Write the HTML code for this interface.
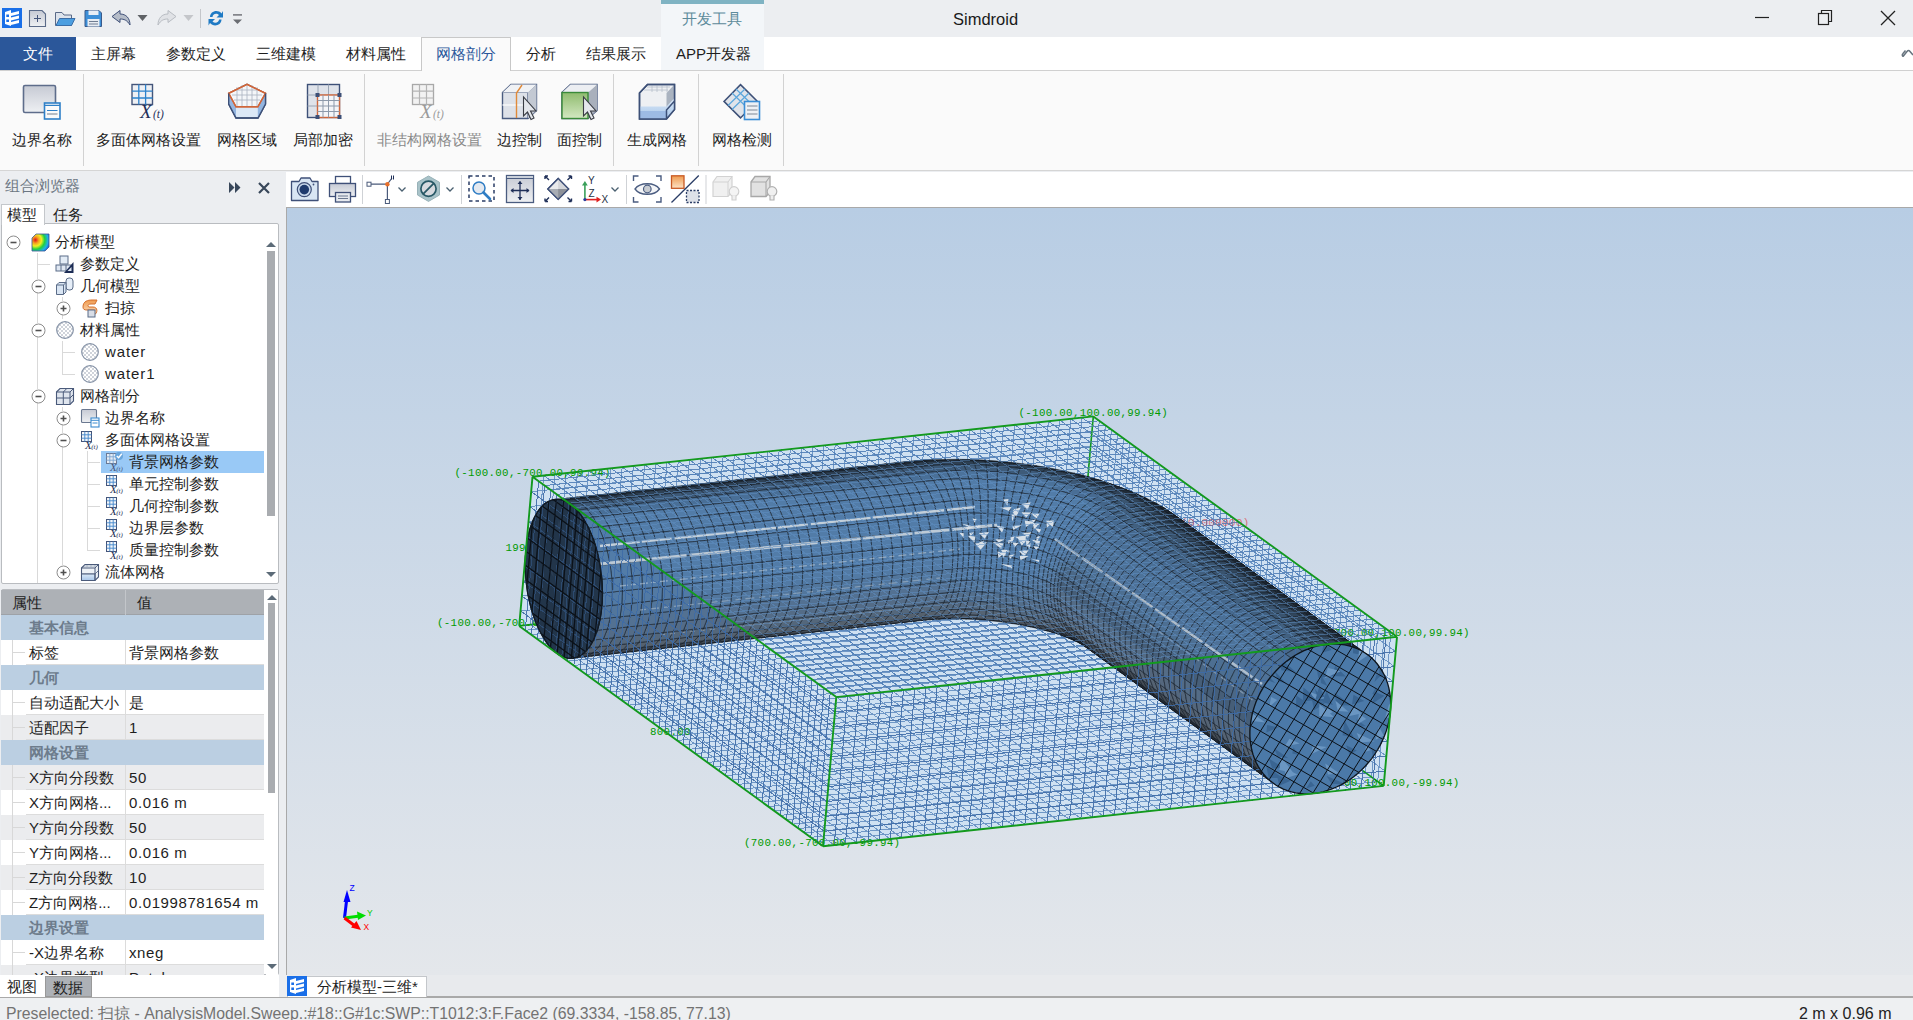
<!DOCTYPE html>
<html><head><meta charset="utf-8"><title>Simdroid</title>
<style>
*{box-sizing:border-box}
html,body{margin:0;padding:0;width:1913px;height:1020px;overflow:hidden;background:#eceef1;font-family:"Liberation Sans",sans-serif;color:#222}
.a{position:absolute}
.t{position:absolute;white-space:nowrap;font-size:15px;line-height:18px;color:#1e1e1e}
.ic{position:absolute;overflow:visible}
</style></head><body>
<!-- title bar -->
<div class="a" style="left:0;top:0;width:1913px;height:37px;background:#eceef1"></div>
<div class="a" style="left:661px;top:0;width:103px;height:37px;background:#f3f6f9"></div>
<div class="a" style="left:661px;top:0;width:103px;height:4px;background:#7fb3c3"></div>
<div class="t" style="left:682px;top:10px;color:#5d8b9b">开发工具</div>
<div class="t" style="left:953px;top:9px;font-size:16.5px;line-height:20px;color:#1a1a1a">Simdroid</div>
<!-- window controls -->
<svg class="ic" style="left:1740px;top:0" width="173" height="37">
 <line x1="15" y1="17.5" x2="29" y2="17.5" stroke="#222" stroke-width="1.2"/>
 <rect x="78.5" y="13.5" width="10" height="11" fill="none" stroke="#222" stroke-width="1.2"/>
 <path d="M81.5 13.5 V10.5 H91.5 V21.5 H88.5" fill="none" stroke="#222" stroke-width="1.2"/>
 <path d="M141 11 L155 25 M155 11 L141 25" stroke="#222" stroke-width="1.3"/>
</svg>
<!-- tabs row -->
<div class="a" style="left:0;top:37px;width:1913px;height:34px;background:#fff;border-bottom:1px solid #d0d0d0"></div>
<div class="a" style="left:661px;top:37px;width:103px;height:33px;background:#f3f6f9"></div>
<div class="a" style="left:0;top:37px;width:76px;height:33px;background:#2b579a"></div>
<div class="t" style="left:23px;top:45px;color:#fff">文件</div>
<div class="t" style="left:91px;top:45px">主屏幕</div>
<div class="t" style="left:166px;top:45px">参数定义</div>
<div class="t" style="left:256px;top:45px">三维建模</div>
<div class="t" style="left:346px;top:45px">材料属性</div>
<div class="a" style="left:421px;top:37px;width:90px;height:34px;background:#fafafa;border:1px solid #c8c8c8;border-bottom:none"></div>
<div class="t" style="left:436px;top:45px;color:#2b579a">网格剖分</div>
<div class="t" style="left:526px;top:45px">分析</div>
<div class="t" style="left:586px;top:45px">结果展示</div>
<div class="t" style="left:676px;top:45px">APP开发器</div>
<svg class="ic" style="left:1900px;top:44px" width="13" height="16"><path d="M3 12.5 L7 7.5 C8 6.3 9 6.3 10 7.5 L13 11 M3 12.5 C2 11.5 2 10.5 3 9.5 L5.5 6.5" fill="none" stroke="#66737e" stroke-width="1.5"/></svg>
<!-- ribbon panel -->
<div class="a" style="left:0;top:71px;width:1913px;height:100px;background:#fafafa;border-bottom:1px solid #d5d5d5"></div>
<div class="a" style="left:83px;top:74px;width:1px;height:92px;background:#d2d2d2"></div>
<div class="a" style="left:364px;top:74px;width:1px;height:92px;background:#d2d2d2"></div>
<div class="a" style="left:613px;top:74px;width:1px;height:92px;background:#d2d2d2"></div>
<div class="a" style="left:698px;top:74px;width:1px;height:92px;background:#d2d2d2"></div>
<div class="a" style="left:783px;top:74px;width:1px;height:92px;background:#d2d2d2"></div>
<div class="t" style="left:12px;top:131px">边界名称</div>
<div class="t" style="left:96px;top:131px">多面体网格设置</div>
<div class="t" style="left:217px;top:131px">网格区域</div>
<div class="t" style="left:293px;top:131px">局部加密</div>
<div class="t" style="left:377px;top:131px;color:#8a8a8a">非结构网格设置</div>
<div class="t" style="left:497px;top:131px">边控制</div>
<div class="t" style="left:557px;top:131px">面控制</div>
<div class="t" style="left:627px;top:131px">生成网格</div>
<div class="t" style="left:712px;top:131px">网格检测</div>
<!-- left panel -->
<div class="a" style="left:0;top:172px;width:286px;height:803px;background:#eceef1"></div>
<div class="t" style="left:5px;top:177px;color:#6b7682">组合浏览器</div>
<div class="a" style="left:1px;top:223px;width:278px;height:361px;background:#fff;border:1px solid #b9bcc0;border-radius:2px"></div>
<div class="a" style="left:1px;top:204px;width:44px;height:21px;background:#fff;border:1px solid #c4c7cb;border-bottom:none"></div>
<div class="t" style="left:7px;top:206px">模型</div>
<div class="t" style="left:53px;top:206px">任务</div>
<div class="a" style="left:101px;top:451px;width:163px;height:22px;background:#99c9f6"></div>
<!-- props -->
<div class="a" style="left:1px;top:589px;width:278px;height:386px;background:#fff;border:1px solid #b9bcc0;border-radius:2px"></div>
<!-- bottom tabs -->
<div class="a" style="left:0;top:975px;width:279px;height:22px;background:#fff"></div>
<div class="t" style="left:7px;top:978px">视图</div>
<div class="a" style="left:45px;top:976px;width:47px;height:21px;background:#adb1b6;border:1px solid #999"></div>
<div class="t" style="left:53px;top:979px">数据</div>
<!-- 3d view -->
<div class="a" style="left:286px;top:172px;width:1627px;height:36px;background:#fff"></div>
<div class="a" style="left:286px;top:207px;width:1627px;height:768px;background:linear-gradient(#b8cde4,#e4e7eb);border-top:1px solid #a9a9a9;border-left:1px solid #a9a9a9"></div>
<!-- doc tab bar -->
<div class="a" style="left:287px;top:975px;width:1626px;height:22px;background:#e8eaed;border-bottom:1px solid #a9a9a9"></div>
<div class="a" style="left:287px;top:976px;width:140px;height:21px;background:#fff;border:1px solid #c4c7cb;border-bottom:none"></div>
<div class="t" style="left:317px;top:978px">分析模型-三维*</div>
<!-- status -->
<div class="a" style="left:0;top:997px;width:1913px;height:23px;background:#eef0f2;border-top:1px solid #a9a9a9"></div>
<div class="t" style="left:6px;top:1005px;color:#737373;font-size:15.8px">Preselected: 扫掠 - AnalysisModel.Sweep.:#18::G#1c:SWP::T1012:3:F.Face2 (69.3334, -158.85, 77.13)</div>
<div class="t" style="left:1799px;top:1005px;color:#222;font-size:16px">2 m x 0.96 m</div>
<svg class="a" style="left:0;top:0" width="1913" height="1020" viewBox="0 0 1913 1020">
<defs><clipPath id="vp"><rect x="287" y="209" width="1626" height="766"/></clipPath></defs><g clip-path="url(#vp)">
<path d="M532.5 476.8 L1093.3 416.4 L1397 636.8 L1383.7 785.9 L823 846.2 L519.2 625.9Z" fill="#cfe1f2"/>
<path d="M519.2 625.9L1080 565.5M525.3 630.3L1086.1 569.9M531.4 634.7L1092.1 574.3M537.5 639.1L1098.2 578.7M543.5 643.5L1104.3 583.1M549.6 647.9L1110.4 587.5M555.7 652.3L1116.4 591.9M561.8 656.7L1122.5 596.4M567.8 661.1L1128.6 600.8M573.9 665.5L1134.7 605.2M580 669.9L1140.7 609.6M586.1 674.4L1146.8 614M592.1 678.8L1152.9 618.4M598.2 683.2L1159 622.8M604.3 687.6L1165 627.2M610.4 692L1171.1 631.6M616.4 696.4L1177.2 636M622.5 700.8L1183.3 640.4M628.6 705.2L1189.3 644.8M634.7 709.6L1195.4 649.2M640.7 714L1201.5 653.6M646.8 718.4L1207.6 658.1M652.9 722.8L1213.6 662.5M659 727.2L1219.7 666.9M665 731.7L1225.8 671.3M671.1 736.1L1231.9 675.7M677.2 740.5L1237.9 680.1M683.3 744.9L1244 684.5M689.3 749.3L1250.1 688.9M695.4 753.7L1256.2 693.3M701.5 758.1L1262.2 697.7M707.6 762.5L1268.3 702.1M713.6 766.9L1274.4 706.5M719.7 771.3L1280.5 710.9M725.8 775.7L1286.5 715.4M731.9 780.1L1292.6 719.8M737.9 784.5L1298.7 724.2M744 789L1304.8 728.6M750.1 793.4L1310.8 733M756.2 797.8L1316.9 737.4M762.2 802.2L1323 741.8M768.3 806.6L1329.1 746.2M774.4 811L1335.1 750.6M780.5 815.4L1341.2 755M786.5 819.8L1347.3 759.4M792.6 824.2L1353.4 763.8M798.7 828.6L1359.4 768.2M804.8 833L1365.5 772.7M810.8 837.4L1371.6 777.1M816.9 841.8L1377.7 781.5M823 846.2L1383.7 785.9M519.2 625.9L823 846.2M530.5 624.7L834.2 845M541.7 623.5L845.4 843.8M552.9 622.3L856.6 842.6M564.1 621L867.9 841.4M575.3 619.8L879.1 840.2M586.5 618.6L890.3 839M597.8 617.4L901.5 837.8M609 616.2L912.7 836.6M620.2 615L923.9 835.4M631.4 613.8L935.1 834.2M642.6 612.6L946.4 833M653.8 611.4L957.6 831.8M665 610.2L968.8 830.6M676.3 609L980 829.3M687.5 607.8L991.2 828.1M698.7 606.6L1002.4 826.9M709.9 605.3L1013.7 825.7M721.1 604.1L1024.9 824.5M732.3 602.9L1036.1 823.3M743.5 601.7L1047.3 822.1M754.8 600.5L1058.5 820.9M766 599.3L1069.7 819.7M777.2 598.1L1080.9 818.5M788.4 596.9L1092.2 817.3M799.6 595.7L1103.4 816.1M810.8 594.5L1114.6 814.9M822.1 593.3L1125.8 813.6M833.3 592.1L1137 812.4M844.5 590.9L1148.2 811.2M855.7 589.6L1159.4 810M866.9 588.4L1170.7 808.8M878.1 587.2L1181.9 807.6M889.3 586L1193.1 806.4M900.6 584.8L1204.3 805.2M911.8 583.6L1215.5 804M923 582.4L1226.7 802.8M934.2 581.2L1238 801.6M945.4 580L1249.2 800.4M956.6 578.8L1260.4 799.2M967.8 577.6L1271.6 797.9M979.1 576.4L1282.8 796.7M990.3 575.2L1294 795.5M1001.5 574L1305.2 794.3M1012.7 572.7L1316.5 793.1M1023.9 571.5L1327.7 791.9M1035.1 570.3L1338.9 790.7M1046.4 569.1L1350.1 789.5M1057.6 567.9L1361.3 788.3M1068.8 566.7L1372.5 787.1M1080 565.5L1383.7 785.9M519.2 625.9L532.5 476.8M530.5 624.7L543.7 475.5M541.7 623.5L554.9 474.3M552.9 622.3L566.1 473.1M564.1 621L577.4 471.9M575.3 619.8L588.6 470.7M586.5 618.6L599.8 469.5M597.8 617.4L611 468.3M609 616.2L622.2 467.1M620.2 615L633.4 465.9M631.4 613.8L644.7 464.7M642.6 612.6L655.9 463.5M653.8 611.4L667.1 462.3M665 610.2L678.3 461.1M676.3 609L689.5 459.8M687.5 607.8L700.7 458.6M698.7 606.6L711.9 457.4M709.9 605.3L723.2 456.2M721.1 604.1L734.4 455M732.3 602.9L745.6 453.8M743.5 601.7L756.8 452.6M754.8 600.5L768 451.4M766 599.3L779.2 450.2M777.2 598.1L790.4 449M788.4 596.9L801.7 447.8M799.6 595.7L812.9 446.6M810.8 594.5L824.1 445.4M822.1 593.3L835.3 444.1M833.3 592.1L846.5 442.9M844.5 590.9L857.7 441.7M855.7 589.6L869 440.5M866.9 588.4L880.2 439.3M878.1 587.2L891.4 438.1M889.3 586L902.6 436.9M900.6 584.8L913.8 435.7M911.8 583.6L925 434.5M923 582.4L936.2 433.3M934.2 581.2L947.5 432.1M945.4 580L958.7 430.9M956.6 578.8L969.9 429.7M967.8 577.6L981.1 428.5M979.1 576.4L992.3 427.2M990.3 575.2L1003.5 426M1001.5 574L1014.7 424.8M1012.7 572.7L1026 423.6M1023.9 571.5L1037.2 422.4M1035.1 570.3L1048.4 421.2M1046.4 569.1L1059.6 420M1057.6 567.9L1070.8 418.8M1068.8 566.7L1082 417.6M1080 565.5L1093.3 416.4M519.2 625.9L1080 565.5M520.6 611L1081.3 550.6M521.9 596L1082.6 535.7M523.2 581.1L1084 520.8M524.5 566.2L1085.3 505.8M525.9 551.3L1086.6 490.9M527.2 536.4L1088 476M528.5 521.5L1089.3 461.1M529.9 506.6L1090.6 446.2M531.2 491.7L1091.9 431.3M532.5 476.8L1093.3 416.4M1080 565.5L1093.3 416.4M1086.1 569.9L1099.3 420.8M1092.1 574.3L1105.4 425.2M1098.2 578.7L1111.5 429.6M1104.3 583.1L1117.6 434M1110.4 587.5L1123.6 438.4M1116.4 591.9L1129.7 442.8M1122.5 596.4L1135.8 447.2M1128.6 600.8L1141.9 451.6M1134.7 605.2L1147.9 456M1140.7 609.6L1154 460.5M1146.8 614L1160.1 464.9M1152.9 618.4L1166.2 469.3M1159 622.8L1172.2 473.7M1165 627.2L1178.3 478.1M1171.1 631.6L1184.4 482.5M1177.2 636L1190.5 486.9M1183.3 640.4L1196.5 491.3M1189.3 644.8L1202.6 495.7M1195.4 649.2L1208.7 500.1M1201.5 653.6L1214.8 504.5M1207.6 658.1L1220.8 508.9M1213.6 662.5L1226.9 513.3M1219.7 666.9L1233 517.7M1225.8 671.3L1239.1 522.2M1231.9 675.7L1245.1 526.6M1237.9 680.1L1251.2 531M1244 684.5L1257.3 535.4M1250.1 688.9L1263.4 539.8M1256.2 693.3L1269.4 544.2M1262.2 697.7L1275.5 548.6M1268.3 702.1L1281.6 553M1274.4 706.5L1287.7 557.4M1280.5 710.9L1293.7 561.8M1286.5 715.4L1299.8 566.2M1292.6 719.8L1305.9 570.6M1298.7 724.2L1312 575M1304.8 728.6L1318 579.5M1310.8 733L1324.1 583.9M1316.9 737.4L1330.2 588.3M1323 741.8L1336.3 592.7M1329.1 746.2L1342.3 597.1M1335.1 750.6L1348.4 601.5M1341.2 755L1354.5 605.9M1347.3 759.4L1360.6 610.3M1353.4 763.8L1366.6 614.7M1359.4 768.2L1372.7 619.1M1365.5 772.7L1378.8 623.5M1371.6 777.1L1384.9 627.9M1377.7 781.5L1390.9 632.3M1383.7 785.9L1397 636.8M1080 565.5L1383.7 785.9M1081.3 550.6L1385.1 771M1082.6 535.7L1386.4 756M1084 520.8L1387.7 741.1M1085.3 505.8L1389 726.2M1086.6 490.9L1390.4 711.3M1088 476L1391.7 696.4M1089.3 461.1L1393 681.5M1090.6 446.2L1394.4 666.6M1091.9 431.3L1395.7 651.7M1093.3 416.4L1397 636.8" stroke="#6f97c6" stroke-width="1" fill="none" shape-rendering="crispEdges"/>
<path d="M532.5 476.8L1093.3 416.4M538.6 481.2L1099.3 420.8M544.7 485.6L1105.4 425.2M550.7 490L1111.5 429.6M556.8 494.4L1117.6 434M562.9 498.8L1123.6 438.4M569 503.2L1129.7 442.8M575 507.6L1135.8 447.2M581.1 512L1141.9 451.6M587.2 516.4L1147.9 456M593.3 520.8L1154 460.5M599.3 525.2L1160.1 464.9M605.4 529.6L1166.2 469.3M611.5 534L1172.2 473.7M617.6 538.5L1178.3 478.1M623.6 542.9L1184.4 482.5M629.7 547.3L1190.5 486.9M635.8 551.7L1196.5 491.3M641.9 556.1L1202.6 495.7M647.9 560.5L1208.7 500.1M654 564.9L1214.8 504.5M660.1 569.3L1220.8 508.9M666.2 573.7L1226.9 513.3M672.2 578.1L1233 517.7M678.3 582.5L1239.1 522.2M684.4 586.9L1245.1 526.6M690.5 591.3L1251.2 531M696.5 595.8L1257.3 535.4M702.6 600.2L1263.4 539.8M708.7 604.6L1269.4 544.2M714.8 609L1275.5 548.6M720.8 613.4L1281.6 553M726.9 617.8L1287.7 557.4M733 622.2L1293.7 561.8M739.1 626.6L1299.8 566.2M745.1 631L1305.9 570.6M751.2 635.4L1312 575M757.3 639.8L1318 579.5M763.4 644.2L1324.1 583.9M769.4 648.6L1330.2 588.3M775.5 653.1L1336.3 592.7M781.6 657.5L1342.3 597.1M787.7 661.9L1348.4 601.5M793.7 666.3L1354.5 605.9M799.8 670.7L1360.6 610.3M805.9 675.1L1366.6 614.7M812 679.5L1372.7 619.1M818 683.9L1378.8 623.5M824.1 688.3L1384.9 627.9M830.2 692.7L1390.9 632.3M836.3 697.1L1397 636.8M532.5 476.8L836.3 697.1M543.7 475.5L847.5 695.9M554.9 474.3L858.7 694.7M566.1 473.1L869.9 693.5M577.4 471.9L881.1 692.3M588.6 470.7L892.3 691.1M599.8 469.5L903.5 689.9M611 468.3L914.8 688.7M622.2 467.1L926 687.5M633.4 465.9L937.2 686.3M644.7 464.7L948.4 685.1M655.9 463.5L959.6 683.8M667.1 462.3L970.8 682.6M678.3 461.1L982 681.4M689.5 459.8L993.3 680.2M700.7 458.6L1004.5 679M711.9 457.4L1015.7 677.8M723.2 456.2L1026.9 676.6M734.4 455L1038.1 675.4M745.6 453.8L1049.3 674.2M756.8 452.6L1060.6 673M768 451.4L1071.8 671.8M779.2 450.2L1083 670.6M790.4 449L1094.2 669.4M801.7 447.8L1105.4 668.1M812.9 446.6L1116.6 666.9M824.1 445.4L1127.8 665.7M835.3 444.1L1139.1 664.5M846.5 442.9L1150.3 663.3M857.7 441.7L1161.5 662.1M869 440.5L1172.7 660.9M880.2 439.3L1183.9 659.7M891.4 438.1L1195.1 658.5M902.6 436.9L1206.3 657.3M913.8 435.7L1217.6 656.1M925 434.5L1228.8 654.9M936.2 433.3L1240 653.7M947.5 432.1L1251.2 652.4M958.7 430.9L1262.4 651.2M969.9 429.7L1273.6 650M981.1 428.5L1284.9 648.8M992.3 427.2L1296.1 647.6M1003.5 426L1307.3 646.4M1014.7 424.8L1318.5 645.2M1026 423.6L1329.7 644M1037.2 422.4L1340.9 642.8M1048.4 421.2L1352.1 641.6M1059.6 420L1363.4 640.4M1070.8 418.8L1374.6 639.2M1082 417.6L1385.8 638M1093.3 416.4L1397 636.8" stroke="#3e6ca6" stroke-width="1" fill="none" opacity="0.8" shape-rendering="crispEdges"/>
<path d="M1093.3 416.4L1080 565.5M519.2 625.9L1080 565.5M1080 565.5L1383.7 785.9" stroke="#139a1e" stroke-width="1.6" fill="none"/>
<g font-family="Liberation Mono" font-size="10.8" letter-spacing="0.32" fill="#009a00"><text x="454.5" y="476">(-100.00,-700.00,99.94)</text><text x="505.5" y="550.5">199.88</text><text x="437" y="625.5">(-100.00,-700.00,-99.94)</text><text x="650" y="735">800.00</text><text x="1018.5" y="415.5">(-100.00,100.00,99.94)</text><text x="1327" y="635.5">(700.00,100.00,99.94)</text><text x="1310" y="785.5">(700.00,100.00,-99.94)</text><text x="744" y="845.5">(700.00,-700.00,-99.94)</text></g>
<text x="1181" y="526" font-family="Liberation Mono" font-size="11.4" fill="#e03030" opacity="0.6">(0.000000)</text>
<g stroke="#101820" stroke-width="0.7" stroke-opacity="0.8"><path d="M984.5 620.2L984.9 619.1L993.4 619.9L993.9 621.1Z" fill="#272c32"/><path d="M975 619.5L976.4 618.5L984.9 619.1L984.5 620.2Z" fill="#272c31"/><path d="M993.9 621.1L993.4 619.9L1001.9 620.9L1003.3 622.2Z" fill="#272c31"/><path d="M997.4 462.4L997.1 461.1L1010.4 462.3L1009.7 463.5Z" fill="#1c252e"/><path d="M965.7 619.1L967.9 618.1L976.4 618.5L975 619.5Z" fill="#272b30"/><path d="M985 461.5L983.8 460.1L997.1 461.1L997.4 462.4Z" fill="#1c252e"/><path d="M1003.3 622.2L1001.9 620.9L1010.3 622.2L1012.6 623.6Z" fill="#262b30"/><path d="M1009.7 463.5L1010.4 462.3L1023.7 463.9L1022 465Z" fill="#1c252e"/><path d="M972.7 461L970.5 459.5L983.8 460.1L985 461.5Z" fill="#1c252f"/><path d="M956.4 618.9L959.5 618L967.9 618.1L965.7 619.1Z" fill="#252a2f"/><path d="M919.5 460.5L913.8 461.6L927 460.8L931.8 459.8Z" fill="#12171c"/><path d="M1022 465L1023.7 463.9L1036.8 465.8L1034.2 466.8Z" fill="#1c252f"/><path d="M1012.6 623.6L1010.3 622.2L1018.6 623.6L1021.7 625.1Z" fill="#25292e"/><path d="M1074.6 473.3L1079.4 475.3L1092.1 478.5L1086.5 476.4Z" fill="#12171c"/><path d="M960.5 460.7L957.4 459.3L970.5 459.5L972.7 461Z" fill="#1c252f"/><path d="M947.2 619L951.2 618L959.5 618L956.4 618.9Z" fill="#24282d"/><path d="M1021.7 625.1L1018.6 623.6L1026.7 625.2L1030.6 626.9Z" fill="#23272c"/><path d="M1034.2 466.8L1036.8 465.8L1049.7 468L1046.2 468.8Z" fill="#1c262f"/><path d="M938.3 619.3L943.1 618.3L951.2 618L947.2 619Z" fill="#21252a"/><path d="M948.5 460.8L944.5 459.4L957.4 459.3L960.5 460.7Z" fill="#1d2630"/><path d="M1030.6 626.9L1026.7 625.2L1034.6 627L1039.3 628.9Z" fill="#212529"/><path d="M1046.2 468.8L1049.7 468L1062.3 470.5L1057.9 471.2Z" fill="#1d2630"/><path d="M907.6 461.6L901.1 462.8L913.8 461.6L919.5 460.5Z" fill="#12171c"/><path d="M1086.5 476.4L1092.1 478.5L1104.3 482.1L1097.9 479.7Z" fill="#12171c"/><path d="M929.5 619.8L935.2 618.8L943.1 618.3L938.3 619.3Z" fill="#1f2226"/><path d="M936.8 461.2L931.8 459.8L944.5 459.4L948.5 460.8Z" fill="#1d2731"/><path d="M1039.3 628.9L1034.6 627L1042.2 628.9L1047.8 631.1Z" fill="#1e2126"/><path d="M1057.9 471.2L1062.3 470.5L1074.6 473.3L1069.3 473.8Z" fill="#1d2731"/><path d="M984.9 619.1L985.5 615.6L993.3 616.3L993.4 619.9Z" fill="#545e69"/><path d="M976.4 618.5L977.8 615.1L985.5 615.6L984.9 619.1Z" fill="#535d69"/><path d="M921.1 620.6L927.6 619.5L935.2 618.8L929.5 619.8Z" fill="#1b1f22"/><path d="M993.4 619.9L993.3 616.3L1000.9 617.3L1001.9 620.9Z" fill="#535d69"/><path d="M897.5 462.7L891.1 463.9L901.1 462.8L907.6 461.6Z" fill="#12171c"/><path d="M997.4 466.1L997.4 462.4L1009.7 463.5L1008.8 467.1Z" fill="#2d3f53"/><path d="M967.9 618.1L970.1 614.7L977.8 615.1L976.4 618.5Z" fill="#525c68"/><path d="M986 465.3L985 461.5L997.4 462.4L997.4 466.1Z" fill="#2d3f53"/><path d="M1001.9 620.9L1000.9 617.3L1008.5 618.4L1010.3 622.2Z" fill="#525c67"/><path d="M1047.8 631.1L1042.2 628.9L1049.5 631.1L1055.9 633.4Z" fill="#1b1e21"/><path d="M1008.8 467.1L1009.7 463.5L1022 465L1020.1 468.5Z" fill="#2d3f53"/><path d="M925.3 461.9L919.5 460.5L931.8 459.8L936.8 461.2Z" fill="#1e2832"/><path d="M959.5 618L962.5 614.6L970.1 614.7L967.9 618.1Z" fill="#515a66"/><path d="M974.7 464.8L972.7 461L985 461.5L986 465.3Z" fill="#2d4053"/><path d="M1010.3 622.2L1008.5 618.4L1016 619.7L1018.6 623.6Z" fill="#505a65"/><path d="M1020.1 468.5L1022 465L1034.2 466.8L1031.3 470.1Z" fill="#2d4053"/><path d="M1097.9 479.7L1104.3 482.1L1116 485.9L1108.9 483.3Z" fill="#12171c"/><path d="M1069.3 473.8L1074.6 473.3L1086.5 476.4L1080.3 476.6Z" fill="#1e2833"/><path d="M951.2 618L955 614.6L962.5 614.6L959.5 618Z" fill="#4e5863"/><path d="M963.5 464.5L960.5 460.7L972.7 461L974.7 464.8Z" fill="#2d4053"/><path d="M1018.6 623.6L1016 619.7L1023.3 621.1L1026.7 625.2Z" fill="#4e5762"/><path d="M1031.3 470.1L1034.2 466.8L1046.2 468.8L1042.3 472Z" fill="#2d4053"/><path d="M911.1 621.7L917.5 620.5L927.6 619.5L921.1 620.6Z" fill="#1a1d20"/><path d="M1055.9 633.4L1049.5 631.1L1056.5 633.3L1063.6 635.9Z" fill="#17191d"/><path d="M887.5 463.8L881 464.9L891.1 463.9L897.5 462.7Z" fill="#12171c"/><path d="M943.1 618.3L947.7 614.9L955 614.6L951.2 618Z" fill="#4b545f"/><path d="M952.5 464.6L948.5 460.8L960.5 460.7L963.5 464.5Z" fill="#2e4053"/><path d="M1026.7 625.2L1023.3 621.1L1030.5 622.7L1034.6 627Z" fill="#4b535e"/><path d="M914.2 462.9L907.6 461.6L919.5 460.5L925.3 461.9Z" fill="#1f2934"/><path d="M1042.3 472L1046.2 468.8L1057.9 471.2L1053.1 474.2Z" fill="#2e4053"/><path d="M1080.3 476.6L1086.5 476.4L1097.9 479.7L1090.9 479.7Z" fill="#1f2934"/><path d="M935.2 618.8L940.6 615.3L947.7 614.9L943.1 618.3Z" fill="#48505a"/><path d="M1034.6 627L1030.5 622.7L1037.3 624.5L1042.2 628.9Z" fill="#474f59"/><path d="M941.7 465L936.8 461.2L948.5 460.8L952.5 464.6Z" fill="#2e4054"/><path d="M901 622.8L907.5 621.6L917.5 620.5L911.1 621.7Z" fill="#1a1d20"/><path d="M1108.9 483.3L1116 485.9L1127 489.9L1119.2 487Z" fill="#12171c"/><path d="M1063.6 635.9L1056.5 633.3L1063.1 635.7L1070.9 638.6Z" fill="#131517"/><path d="M1053.1 474.2L1057.9 471.2L1069.3 473.8L1063.6 476.6Z" fill="#2e4054"/><path d="M877.5 464.9L871 466L881 464.9L887.5 463.8Z" fill="#12171c"/><path d="M927.6 619.5L933.6 615.9L940.6 615.3L935.2 618.8Z" fill="#434b55"/><path d="M904.2 464L897.5 462.7L907.6 461.6L914.2 462.9Z" fill="#1f2a35"/><path d="M985.5 615.6L986.3 609.8L993.3 610.5L993.3 616.3Z" fill="#556474"/><path d="M977.8 615.1L979.3 609.4L986.3 609.8L985.5 615.6Z" fill="#556474"/><path d="M993.3 616.3L993.3 610.5L1000.3 611.4L1000.9 617.3Z" fill="#556474"/><path d="M1042.2 628.9L1037.3 624.5L1044 626.4L1049.5 631.1Z" fill="#424a53"/><path d="M997.3 472L997.4 466.1L1008.8 467.1L1007.6 473Z" fill="#3e5b7a"/><path d="M970.1 614.7L972.3 609L979.3 609.4L977.8 615.1Z" fill="#556374"/><path d="M1000.9 617.3L1000.3 611.4L1007.2 612.4L1008.5 618.4Z" fill="#556374"/><path d="M986.9 471.3L986 465.3L997.4 466.1L997.3 472Z" fill="#3e5b79"/><path d="M1007.6 473L1008.8 467.1L1020.1 468.5L1018 474.3Z" fill="#3e5b79"/><path d="M931.1 465.6L925.3 461.9L936.8 461.2L941.7 465Z" fill="#2e4154"/><path d="M1090.9 479.7L1097.9 479.7L1108.9 483.3L1101.1 483Z" fill="#202b36"/><path d="M962.5 614.6L965.4 608.9L972.3 609L970.1 614.7Z" fill="#556373"/><path d="M976.5 470.8L974.7 464.8L986 465.3L986.9 471.3Z" fill="#3e5b79"/><path d="M1008.5 618.4L1007.2 612.4L1014 613.5L1016 619.7Z" fill="#556373"/><path d="M1018 474.3L1020.1 468.5L1031.3 470.1L1028.2 475.7Z" fill="#3e5b79"/><path d="M1063.6 476.6L1069.3 473.8L1080.3 476.6L1073.8 479.2Z" fill="#2e4154"/><path d="M891 623.8L897.5 622.7L907.5 621.6L901 622.8Z" fill="#1a1d20"/><path d="M1070.9 638.6L1063.1 635.7L1069.3 638.3L1077.8 641.4Z" fill="#121517"/><path d="M867.5 466L861 467.1L871 466L877.5 464.9Z" fill="#12171c"/><path d="M955 614.6L958.6 609L965.4 608.9L962.5 614.6Z" fill="#556373"/><path d="M966.3 470.6L963.5 464.5L974.7 464.8L976.5 470.8Z" fill="#3e5b79"/><path d="M917.5 620.5L923.6 617L933.6 615.9L927.6 619.5Z" fill="#414952"/><path d="M1016 619.7L1014 613.5L1020.7 614.8L1023.3 621.1Z" fill="#556372"/><path d="M1028.2 475.7L1031.3 470.1L1042.3 472L1038.3 477.5Z" fill="#3d5a79"/><path d="M1049.5 631.1L1044 626.4L1050.3 628.5L1056.5 633.3Z" fill="#3d444d"/><path d="M894.2 465.1L887.5 463.8L897.5 462.7L904.2 464Z" fill="#1f2a35"/><path d="M1119.2 487L1127 489.9L1137.4 494.1L1128.9 491Z" fill="#141a20"/><path d="M947.7 614.9L951.9 609.2L958.6 609L955 614.6Z" fill="#556272"/><path d="M956.2 470.7L952.5 464.6L963.5 464.5L966.3 470.6Z" fill="#3d5a79"/><path d="M920.9 466.6L914.2 462.9L925.3 461.9L931.1 465.6Z" fill="#2e4155"/><path d="M1023.3 621.1L1020.7 614.8L1027.2 616.3L1030.5 622.7Z" fill="#556271"/><path d="M1038.3 477.5L1042.3 472L1053.1 474.2L1048.1 479.4Z" fill="#3d5a79"/><path d="M1073.8 479.2L1080.3 476.6L1090.9 479.7L1083.5 482Z" fill="#2e4155"/><path d="M881 624.9L887.5 623.8L897.5 622.7L891 623.8Z" fill="#1a1d20"/><path d="M940.6 615.3L945.4 609.6L951.9 609.2L947.7 614.9Z" fill="#556270"/><path d="M1077.8 641.4L1069.3 638.3L1075.1 640.9L1084.2 644.3Z" fill="#121517"/><path d="M1101.1 483L1108.9 483.3L1119.2 487L1110.7 486.5Z" fill="#212c38"/><path d="M1056.5 633.3L1050.3 628.5L1056.3 630.7L1063.1 635.7Z" fill="#373e46"/><path d="M857.5 467L851 468.2L861 467.1L867.5 466Z" fill="#12171c"/><path d="M1030.5 622.7L1027.2 616.3L1033.4 617.9L1037.3 624.5Z" fill="#556270"/><path d="M946.4 471L941.7 465L952.5 464.6L956.2 470.7Z" fill="#3d5a78"/><path d="M907.5 621.6L913.6 618.1L923.6 617L917.5 620.5Z" fill="#414952"/><path d="M1048.1 479.4L1053.1 474.2L1063.6 476.6L1057.7 481.6Z" fill="#3d5a78"/><path d="M884.2 466.1L877.5 464.9L887.5 463.8L894.2 465.1Z" fill="#1f2a35"/><path d="M933.6 615.9L939.1 610.2L945.4 609.6L940.6 615.3Z" fill="#55616f"/><path d="M910.9 467.6L904.2 464L914.2 462.9L920.9 466.6Z" fill="#2e4155"/><path d="M986.3 609.8L987.2 602L993.7 602.6L993.3 610.5Z" fill="#546a82"/><path d="M979.3 609.4L980.8 601.5L987.2 602L986.3 609.8Z" fill="#546a81"/><path d="M1037.3 624.5L1033.4 617.9L1039.5 619.7L1044 626.4Z" fill="#55616f"/><path d="M993.3 610.5L993.7 602.6L1000.1 603.4L1000.3 611.4Z" fill="#546a81"/><path d="M996.9 480.1L997.3 472L1007.6 473L1006.3 481Z" fill="#4d749e"/><path d="M972.3 609L974.4 601.2L980.8 601.5L979.3 609.4Z" fill="#546a81"/><path d="M987.5 479.4L986.9 471.3L997.3 472L996.9 480.1Z" fill="#4d749e"/><path d="M1000.3 611.4L1000.1 603.4L1006.4 604.3L1007.2 612.4Z" fill="#546a81"/><path d="M1006.3 481L1007.6 473L1018 474.3L1015.7 482.1Z" fill="#4d749e"/><path d="M936.7 471.6L931.1 465.6L941.7 465L946.4 471Z" fill="#3d5a78"/><path d="M1083.5 482L1090.9 479.7L1101.1 483L1092.8 485Z" fill="#2f4256"/><path d="M871 626L877.5 624.9L887.5 623.8L881 624.9Z" fill="#1a1d20"/><path d="M1063.1 635.7L1056.3 630.7L1061.9 633L1069.3 638.3Z" fill="#31373e"/><path d="M965.4 608.9L968 601.1L974.4 601.2L972.3 609Z" fill="#546981"/><path d="M978.1 479L976.5 470.8L986.9 471.3L987.5 479.4Z" fill="#4d749d"/><path d="M1007.2 612.4L1006.4 604.3L1012.7 605.4L1014 613.5Z" fill="#546980"/><path d="M1057.7 481.6L1063.6 476.6L1073.8 479.2L1067 484Z" fill="#3d5a78"/><path d="M1015.7 482.1L1018 474.3L1028.2 475.7L1025 483.4Z" fill="#4c749d"/><path d="M847.5 468.1L841 469.2L851 468.2L857.5 467Z" fill="#12171c"/><path d="M1128.9 491L1137.4 494.1L1147 498.6L1138 495.2Z" fill="#161c23"/><path d="M897.5 622.7L903.6 619.2L913.6 618.1L907.5 621.6Z" fill="#414952"/><path d="M958.6 609L961.8 601.2L968 601.1L965.4 608.9Z" fill="#546980"/><path d="M968.8 478.8L966.3 470.6L976.5 470.8L978.1 479Z" fill="#4c749d"/><path d="M923.6 617L929.1 611.2L939.1 610.2L933.6 615.9Z" fill="#55616e"/><path d="M1044 626.4L1039.5 619.7L1045.2 621.6L1050.3 628.5Z" fill="#55606d"/><path d="M1014 613.5L1012.7 605.4L1018.8 606.6L1020.7 614.8Z" fill="#54697f"/><path d="M874.2 467.2L867.5 466L877.5 464.9L884.2 466.1Z" fill="#1f2a35"/><path d="M1025 483.4L1028.2 475.7L1038.3 477.5L1034.1 485Z" fill="#4c739d"/><path d="M1110.7 486.5L1119.2 487L1128.9 491L1119.7 490.2Z" fill="#222e3a"/><path d="M900.9 468.7L894.2 465.1L904.2 464L910.9 467.6Z" fill="#2e4155"/><path d="M951.9 609.2L955.6 601.4L961.8 601.2L958.6 609Z" fill="#54687f"/><path d="M959.7 478.9L956.2 470.7L966.3 470.6L968.8 478.8Z" fill="#4c739c"/><path d="M927.4 472.5L920.9 466.6L931.1 465.6L936.7 471.6Z" fill="#3d5977"/><path d="M1020.7 614.8L1018.8 606.6L1024.8 607.9L1027.2 616.3Z" fill="#54687e"/><path d="M1034.1 485L1038.3 477.5L1048.1 479.4L1043.1 486.8Z" fill="#4c739c"/><path d="M861 627.1L867.5 625.9L877.5 624.9L871 626Z" fill="#1a1d20"/><path d="M1069.3 638.3L1061.9 633L1067.2 635.4L1075.1 640.9Z" fill="#2a2f35"/><path d="M1067 484L1073.8 479.2L1083.5 482L1075.9 486.6Z" fill="#3d5977"/><path d="M945.4 609.6L949.7 601.7L955.6 601.4L951.9 609.2Z" fill="#54687d"/><path d="M1092.8 485L1101.1 483L1110.7 486.5L1101.7 488.3Z" fill="#2f4256"/><path d="M837.5 469.2L831 470.3L841 469.2L847.5 468.1Z" fill="#12171c"/><path d="M1050.3 628.5L1045.2 621.6L1050.7 623.5L1056.3 630.7Z" fill="#56606c"/><path d="M887.5 623.8L893.6 620.3L903.6 619.2L897.5 622.7Z" fill="#414952"/><path d="M1027.2 616.3L1024.8 607.9L1030.5 609.4L1033.4 617.9Z" fill="#54687d"/><path d="M950.7 479.2L946.4 471L956.2 470.7L959.7 478.9Z" fill="#4b729b"/><path d="M913.6 618.1L919.1 612.3L929.1 611.2L923.6 617Z" fill="#55616e"/><path d="M864.2 468.3L857.5 467L867.5 466L874.2 467.2Z" fill="#1f2a35"/><path d="M1043.1 486.8L1048.1 479.4L1057.7 481.6L1051.8 488.8Z" fill="#4b729a"/><path d="M890.9 469.8L884.2 466.1L894.2 465.1L900.9 468.7Z" fill="#2e4155"/><path d="M939.1 610.2L943.9 602.3L949.7 601.7L945.4 609.6Z" fill="#54677c"/><path d="M987.2 602L988.3 592.3L994.3 592.8L993.7 602.6Z" fill="#53708e"/><path d="M980.8 601.5L982.2 591.8L988.3 592.3L987.2 602Z" fill="#53708e"/><path d="M917.4 473.6L910.9 467.6L920.9 466.6L927.4 472.5Z" fill="#3d5977"/><path d="M993.7 602.6L994.3 592.8L1000.3 593.5L1000.1 603.4Z" fill="#53708e"/><path d="M1033.4 617.9L1030.5 609.4L1036.1 611L1039.5 619.7Z" fill="#54677b"/><path d="M996.4 490L996.9 480.1L1006.3 481L1004.9 490.8Z" fill="#527ca8"/><path d="M974.4 601.2L976.2 591.6L982.2 591.8L980.8 601.5Z" fill="#536f8e"/><path d="M987.9 489.4L987.5 479.4L996.9 480.1L996.4 490Z" fill="#527ca8"/><path d="M1000.1 603.4L1000.3 593.5L1006.2 594.4L1006.4 604.3Z" fill="#536f8e"/><path d="M1004.9 490.8L1006.3 481L1015.7 482.1L1013.4 491.8Z" fill="#527ca8"/><path d="M1138 495.2L1147 498.6L1155.9 503.2L1146.3 499.5Z" fill="#181f27"/><path d="M942 479.7L936.7 471.6L946.4 471L950.7 479.2Z" fill="#4b7199"/><path d="M1075.9 486.6L1083.5 482L1092.8 485L1084.4 489.4Z" fill="#3c5976"/><path d="M1056.3 630.7L1050.7 623.5L1055.8 625.6L1061.9 633Z" fill="#535d69"/><path d="M851 628.2L857.5 627L867.5 625.9L861 627.1Z" fill="#1a1d20"/><path d="M979.4 489L978.1 479L987.5 479.4L987.9 489.4Z" fill="#527ca8"/><path d="M968 601.1L970.3 591.4L976.2 591.6L974.4 601.2Z" fill="#536f8d"/><path d="M1075.1 640.9L1067.2 635.4L1072 637.9L1080.5 643.7Z" fill="#23272c"/><path d="M1119.7 490.2L1128.9 491L1138 495.2L1128.1 494Z" fill="#23303d"/><path d="M1013.4 491.8L1015.7 482.1L1025 483.4L1021.8 493Z" fill="#527ca8"/><path d="M1006.4 604.3L1006.2 594.4L1012.1 595.4L1012.7 605.4Z" fill="#536f8d"/><path d="M1051.8 488.8L1057.7 481.6L1067 484L1060.2 490.9Z" fill="#4a7199"/><path d="M1155.9 503.2L1164.4 509L1172.9 514L1164 507.9Z" fill="#12171b"/><path d="M827.4 470.3L821 471.4L831 470.3L837.5 469.2Z" fill="#12171c"/><path d="M877.5 624.9L883.6 621.3L893.6 620.3L887.5 623.8Z" fill="#414952"/><path d="M961.8 601.2L964.4 591.5L970.3 591.4L968 601.1Z" fill="#536f8c"/><path d="M971 488.8L968.8 478.8L978.1 479L979.4 489Z" fill="#527ca8"/><path d="M1012.7 605.4L1012.1 595.4L1017.8 596.5L1018.8 606.6Z" fill="#536f8c"/><path d="M1021.8 493L1025 483.4L1034.1 485L1030.1 494.4Z" fill="#527ca8"/><path d="M1039.5 619.7L1036.1 611L1041.4 612.7L1045.2 621.6Z" fill="#556679"/><path d="M903.6 619.2L909.1 613.4L919.1 612.3L913.6 618.1Z" fill="#55616e"/><path d="M854.2 469.4L847.5 468.1L857.5 467L864.2 468.3Z" fill="#1f2a35"/><path d="M929.1 611.2L933.9 603.3L943.9 602.3L939.1 610.2Z" fill="#54677b"/><path d="M1101.7 488.3L1110.7 486.5L1119.7 490.2L1110 491.7Z" fill="#2f4357"/><path d="M955.6 601.4L958.7 591.7L964.4 591.5L961.8 601.2Z" fill="#536e8b"/><path d="M880.9 470.9L874.2 467.2L884.2 466.1L890.9 469.8Z" fill="#2e4155"/><path d="M962.7 488.9L959.7 478.9L968.8 478.8L971 488.8Z" fill="#527ca8"/><path d="M1018.8 606.6L1017.8 596.5L1023.4 597.8L1024.8 607.9Z" fill="#536e8b"/><path d="M933.5 480.5L927.4 472.5L936.7 471.6L942 479.7Z" fill="#4a7098"/><path d="M907.4 474.6L900.9 468.7L910.9 467.6L917.4 473.6Z" fill="#3d5977"/><path d="M1030.1 494.4L1034.1 485L1043.1 486.8L1038.2 496Z" fill="#527ca8"/><path d="M1061.9 633L1055.8 625.6L1060.5 627.8L1067.2 635.4Z" fill="#4b545e"/><path d="M1060.2 490.9L1067 484L1075.9 486.6L1068.3 493.3Z" fill="#4a7097"/><path d="M841 629.2L847.5 628.1L857.5 627L851 628.2Z" fill="#1a1d20"/><path d="M949.7 601.7L953.1 592L958.7 591.7L955.6 601.4Z" fill="#546d89"/><path d="M1084.4 489.4L1092.8 485L1101.7 488.3L1092.5 492.3Z" fill="#3c5875"/><path d="M1045.2 621.6L1041.4 612.7L1046.4 614.6L1050.7 623.5Z" fill="#556577"/><path d="M1024.8 607.9L1023.4 597.8L1028.7 599.2L1030.5 609.4Z" fill="#546d89"/><path d="M954.6 489.1L950.7 479.2L959.7 478.9L962.7 488.9Z" fill="#527ca8"/><path d="M1080.5 643.7L1072 637.9L1076.4 640.5L1085.3 646.6Z" fill="#1b1e22"/><path d="M817.4 471.3L810.9 472.5L821 471.4L827.4 470.3Z" fill="#12171c"/><path d="M867.5 625.9L873.6 622.4L883.6 621.3L877.5 624.9Z" fill="#414952"/><path d="M1038.2 496L1043.1 486.8L1051.8 488.8L1046 497.8Z" fill="#527ca8"/><path d="M988.3 592.3L989.4 580.9L995.1 581.5L994.3 592.8Z" fill="#52759a"/><path d="M982.2 591.8L983.6 580.5L989.4 580.9L988.3 592.3Z" fill="#52759a"/><path d="M994.3 592.8L995.1 581.5L1000.9 582.2L1000.3 593.5Z" fill="#52759a"/><path d="M893.6 620.3L899.1 614.5L909.1 613.4L903.6 619.2Z" fill="#55616e"/><path d="M844.1 470.5L837.5 469.2L847.5 468.1L854.2 469.4Z" fill="#1f2a35"/><path d="M919.1 612.3L923.9 604.4L933.9 603.3L929.1 611.2Z" fill="#54677b"/><path d="M995.7 501.4L996.4 490L1004.9 490.8L1003.4 502.1Z" fill="#527ca8"/><path d="M976.2 591.6L977.9 580.3L983.6 580.5L982.2 591.8Z" fill="#527599"/><path d="M988 500.8L987.9 489.4L996.4 490L995.7 501.4Z" fill="#527ca8"/><path d="M943.9 602.3L947.7 592.5L953.1 592L949.7 601.7Z" fill="#546d88"/><path d="M1003.4 502.1L1004.9 490.8L1013.4 491.8L1011.1 503Z" fill="#527ca8"/><path d="M1000.3 593.5L1000.9 582.2L1006.6 583L1006.2 594.4Z" fill="#527599"/><path d="M1030.5 609.4L1028.7 599.2L1033.9 600.7L1036.1 611Z" fill="#546c87"/><path d="M923.5 481.6L917.4 473.6L927.4 472.5L933.5 480.5Z" fill="#496f97"/><path d="M980.3 500.5L979.4 489L987.9 489.4L988 500.8Z" fill="#527ca8"/><path d="M870.9 472L864.2 468.3L874.2 467.2L880.9 470.9Z" fill="#2e4155"/><path d="M970.3 591.4L972.2 580.2L977.9 580.3L976.2 591.6Z" fill="#527599"/><path d="M1011.1 503L1013.4 491.8L1021.8 493L1018.7 504.1Z" fill="#527ca8"/><path d="M1128.1 494L1138 495.2L1146.3 499.5L1135.8 498Z" fill="#243240"/><path d="M1006.2 594.4L1006.6 583L1012.2 584L1012.1 595.4Z" fill="#537498"/><path d="M946.7 489.6L942 479.7L950.7 479.2L954.6 489.1Z" fill="#527ca8"/><path d="M897.4 475.7L890.9 469.8L900.9 468.7L907.4 474.6Z" fill="#3d5977"/><path d="M1068.3 493.3L1075.9 486.6L1084.4 489.4L1076 495.8Z" fill="#496e96"/><path d="M1067.2 635.4L1060.5 627.8L1064.9 630.1L1072 637.9Z" fill="#424a53"/><path d="M1146.3 499.5L1155.9 503.2L1164 507.9L1153.9 503.9Z" fill="#1a232b"/><path d="M1050.7 623.5L1046.4 614.6L1051.1 616.5L1055.8 625.6Z" fill="#556475"/><path d="M1046 497.8L1051.8 488.8L1060.2 490.9L1053.6 499.8Z" fill="#527ca8"/><path d="M972.7 500.3L971 488.8L979.4 489L980.3 500.5Z" fill="#527ca8"/><path d="M1110 491.7L1119.7 490.2L1128.1 494L1117.7 495.2Z" fill="#304358"/><path d="M964.4 591.5L966.6 580.2L972.2 580.2L970.3 591.4Z" fill="#537498"/><path d="M1018.7 504.1L1021.8 493L1030.1 494.4L1026.2 505.4Z" fill="#527ca8"/><path d="M1012.1 595.4L1012.2 584L1017.6 585.1L1017.8 596.5Z" fill="#537497"/><path d="M831 630.3L837.4 629.2L847.5 628.1L841 629.2Z" fill="#1a1d20"/><path d="M807.4 472.4L800.9 473.6L810.9 472.5L817.4 471.3Z" fill="#12171c"/><path d="M1036.1 611L1033.9 600.7L1038.9 602.3L1041.4 612.7Z" fill="#546b85"/><path d="M965.2 500.4L962.7 488.9L971 488.8L972.7 500.3Z" fill="#527ca8"/><path d="M958.7 591.7L961.1 580.4L966.6 580.2L964.4 591.5Z" fill="#537396"/><path d="M857.5 627L863.5 623.5L873.6 622.4L867.5 625.9Z" fill="#414952"/><path d="M1164 507.9L1172.9 514L1180.6 519.2L1171.2 512.8Z" fill="#12171c"/><path d="M933.9 603.3L937.7 593.6L947.7 592.5L943.9 602.3Z" fill="#546c87"/><path d="M1092.5 492.3L1101.7 488.3L1110 491.7L1100.1 495.4Z" fill="#3c5774"/><path d="M1026.2 505.4L1030.1 494.4L1038.2 496L1033.5 506.9Z" fill="#527ca8"/><path d="M1017.8 596.5L1017.6 585.1L1023 586.3L1023.4 597.8Z" fill="#537396"/><path d="M1085.3 646.6L1076.4 640.5L1080.3 643.1L1089.7 649.5Z" fill="#131518"/><path d="M883.6 621.3L889.1 615.5L899.1 614.5L893.6 620.3Z" fill="#55616e"/><path d="M939 490.3L933.5 480.5L942 479.7L946.7 489.6Z" fill="#527ca8"/><path d="M834.1 471.5L827.4 470.3L837.5 469.2L844.1 470.5Z" fill="#1f2a35"/><path d="M909.1 613.4L913.8 605.5L923.9 604.4L919.1 612.3Z" fill="#54677b"/><path d="M1053.6 499.8L1060.2 490.9L1068.3 493.3L1061 501.9Z" fill="#527ca8"/><path d="M953.1 592L955.7 580.7L961.1 580.4L958.7 591.7Z" fill="#537395"/><path d="M913.5 482.6L907.4 474.6L917.4 473.6L923.5 481.6Z" fill="#496f97"/><path d="M1055.8 625.6L1051.1 616.5L1055.5 618.5L1060.5 627.8Z" fill="#556373"/><path d="M860.9 473L854.2 469.4L864.2 468.3L870.9 472Z" fill="#2e4155"/><path d="M957.9 500.6L954.6 489.1L962.7 488.9L965.2 500.4Z" fill="#527ca8"/><path d="M989.4 580.9L990.5 568.4L996.2 569L995.1 581.5Z" fill="#527aa4"/><path d="M983.6 580.5L984.8 568L990.5 568.4L989.4 580.9Z" fill="#527aa4"/><path d="M995.1 581.5L996.2 569L1001.9 569.6L1000.9 582.2Z" fill="#527aa4"/><path d="M1023.4 597.8L1023 586.3L1028.1 587.6L1028.7 599.2Z" fill="#537394"/><path d="M887.4 476.8L880.9 470.9L890.9 469.8L897.4 475.7Z" fill="#3d5977"/><path d="M994.8 514L995.7 501.4L1003.4 502.1L1001.9 514.7Z" fill="#527ca8"/><path d="M987.8 513.5L988 500.8L995.7 501.4L994.8 514Z" fill="#527ca8"/><path d="M1033.5 506.9L1038.2 496L1046 497.8L1040.6 508.5Z" fill="#527ca8"/><path d="M977.9 580.3L979.2 567.8L984.8 568L983.6 580.5Z" fill="#527aa3"/><path d="M1001.9 514.7L1003.4 502.1L1011.1 503L1008.8 515.5Z" fill="#527ca8"/><path d="M1076 495.8L1084.4 489.4L1092.5 492.3L1083.4 498.5Z" fill="#486c93"/><path d="M1041.4 612.7L1038.9 602.3L1043.6 604L1046.4 614.6Z" fill="#546a83"/><path d="M1072 637.9L1064.9 630.1L1068.9 632.4L1076.4 640.5Z" fill="#383f47"/><path d="M1000.9 582.2L1001.9 569.6L1007.5 570.5L1006.6 583Z" fill="#527aa3"/><path d="M980.8 513.2L980.3 500.5L988 500.8L987.8 513.5Z" fill="#527ca8"/><path d="M1008.8 515.5L1011.1 503L1018.7 504.1L1015.7 516.5Z" fill="#527ca8"/><path d="M972.2 580.2L973.6 567.7L979.2 567.8L977.9 580.3Z" fill="#5279a3"/><path d="M820.9 631.4L827.4 630.3L837.4 629.2L831 630.3Z" fill="#1a1d20"/><path d="M1006.6 583L1007.5 570.5L1013 571.4L1012.2 584Z" fill="#5279a3"/><path d="M947.7 592.5L950.6 581.2L955.7 580.7L953.1 592Z" fill="#537293"/><path d="M973.9 513.1L972.7 500.3L980.3 500.5L980.8 513.2Z" fill="#527ca8"/><path d="M797.4 473.5L790.9 474.6L800.9 473.6L807.4 472.4Z" fill="#12171c"/><path d="M1015.7 516.5L1018.7 504.1L1026.2 505.4L1022.5 517.7Z" fill="#527ca8"/><path d="M1028.7 599.2L1028.1 587.6L1033.1 589L1033.9 600.7Z" fill="#537292"/><path d="M950.7 501.1L946.7 489.6L954.6 489.1L957.9 500.6Z" fill="#527ca8"/><path d="M966.6 580.2L968 567.7L973.6 567.7L972.2 580.2Z" fill="#5279a2"/><path d="M847.5 628.1L853.5 624.6L863.5 623.5L857.5 627Z" fill="#414952"/><path d="M923.9 604.4L927.7 594.7L937.7 593.6L933.9 603.3Z" fill="#546c87"/><path d="M1012.2 584L1013 571.4L1018.4 572.5L1017.6 585.1Z" fill="#5279a1"/><path d="M929 491.4L923.5 481.6L933.5 480.5L939 490.3Z" fill="#527ca8"/><path d="M1040.6 508.5L1046 497.8L1053.6 499.8L1047.5 510.3Z" fill="#527ca8"/><path d="M1061 501.9L1068.3 493.3L1076 495.8L1068 504.2Z" fill="#527ca8"/><path d="M1117.7 495.2L1128.1 494L1135.8 498L1124.8 498.9Z" fill="#304459"/><path d="M873.6 622.4L879.1 616.6L889.1 615.5L883.6 621.3Z" fill="#55616e"/><path d="M967.1 513.1L965.2 500.4L972.7 500.3L973.9 513.1Z" fill="#527ca8"/><path d="M824.1 472.6L817.4 471.3L827.4 470.3L834.1 471.5Z" fill="#1f2a35"/><path d="M899.1 614.5L903.8 606.6L913.8 605.5L909.1 613.4Z" fill="#54677b"/><path d="M1135.8 498L1146.3 499.5L1153.9 503.9L1142.9 502.2Z" fill="#263442"/><path d="M1060.5 627.8L1055.5 618.5L1059.5 620.6L1064.9 630.1Z" fill="#556270"/><path d="M1046.4 614.6L1043.6 604L1048 605.8L1051.1 616.5Z" fill="#546980"/><path d="M961.1 580.4L962.6 567.9L968 567.7L966.6 580.2Z" fill="#5278a0"/><path d="M1022.5 517.7L1026.2 505.4L1033.5 506.9L1029.2 519Z" fill="#527ca8"/><path d="M990.5 568.4L991.7 555.1L997.4 555.6L996.2 569Z" fill="#527ca8"/><path d="M1100.1 495.4L1110 491.7L1117.7 495.2L1107.1 498.6Z" fill="#3b5773"/><path d="M984.8 568L985.9 554.7L991.7 555.1L990.5 568.4Z" fill="#527ca8"/><path d="M1017.6 585.1L1018.4 572.5L1023.6 573.7L1023 586.3Z" fill="#5278a0"/><path d="M993.9 527.4L994.8 514L1001.9 514.7L1000.3 528Z" fill="#527ca8"/><path d="M996.2 569L997.4 555.6L1003.2 556.3L1001.9 569.6Z" fill="#527ca8"/><path d="M903.5 483.7L897.4 475.7L907.4 474.6L913.5 482.6Z" fill="#496f97"/><path d="M987.4 527L987.8 513.5L994.8 514L993.9 527.4Z" fill="#527ca8"/><path d="M850.8 474.1L844.1 470.5L854.2 469.4L860.9 473Z" fill="#2e4155"/><path d="M1000.3 528L1001.9 514.7L1008.8 515.5L1006.7 528.8Z" fill="#527ca8"/><path d="M979.2 567.8L980.2 554.4L985.9 554.7L984.8 568Z" fill="#527ca8"/><path d="M1001.9 569.6L1003.2 556.3L1008.9 557.1L1007.5 570.5Z" fill="#527ca8"/><path d="M1033.9 600.7L1033.1 589L1037.8 590.6L1038.9 602.3Z" fill="#537190"/><path d="M877.4 477.9L870.9 472L880.9 470.9L887.4 476.8Z" fill="#3d5977"/><path d="M981 526.7L980.8 513.2L987.8 513.5L987.4 527Z" fill="#527ca8"/><path d="M1089.7 649.5L1080.3 643.1L1085.7 647L1095.1 653.4Z" fill="#121517"/><path d="M1006.7 528.8L1008.8 515.5L1015.7 516.5L1013.1 529.7Z" fill="#527ca8"/><path d="M1153.9 503.9L1164 507.9L1171.2 512.8L1160.6 508.5Z" fill="#1d2630"/><path d="M943.8 501.7L939 490.3L946.7 489.6L950.7 501.1Z" fill="#527ca8"/><path d="M937.7 593.6L940.5 582.3L950.6 581.2L947.7 592.5Z" fill="#537192"/><path d="M960.4 513.3L957.9 500.6L965.2 500.4L967.1 513.1Z" fill="#527ca8"/><path d="M973.6 567.7L974.5 554.3L980.2 554.4L979.2 567.8Z" fill="#527ca8"/><path d="M1076.4 640.5L1068.9 632.4L1072.5 634.8L1080.3 643.1Z" fill="#2e343a"/><path d="M955.7 580.7L957.4 568.2L962.6 567.9L961.1 580.4Z" fill="#52779f"/><path d="M1083.4 498.5L1092.5 492.3L1100.1 495.4L1090.2 501.3Z" fill="#476a90"/><path d="M1007.5 570.5L1008.9 557.1L1014.5 558.1L1013 571.4Z" fill="#527ca8"/><path d="M1029.2 519L1033.5 506.9L1040.6 508.5L1035.7 520.5Z" fill="#527ca8"/><path d="M974.6 526.6L973.9 513.1L980.8 513.2L981 526.7Z" fill="#527ca8"/><path d="M1047.5 510.3L1053.6 499.8L1061 501.9L1054.1 512.2Z" fill="#527ca8"/><path d="M1023 586.3L1023.6 573.7L1028.7 575L1028.1 587.6Z" fill="#52779e"/><path d="M810.9 632.5L817.4 631.3L827.4 630.3L820.9 631.4Z" fill="#1a1d20"/><path d="M1013.1 529.7L1015.7 516.5L1022.5 517.7L1019.3 530.8Z" fill="#527ca8"/><path d="M991.7 555.1L992.8 541.2L998.8 541.8L997.4 555.6Z" fill="#527ca8"/><path d="M992.8 541.2L993.9 527.4L1000.3 528L998.8 541.8Z" fill="#527ca8"/><path d="M985.9 554.7L986.8 540.8L992.8 541.2L991.7 555.1Z" fill="#527ca8"/><path d="M986.8 540.8L987.4 527L993.9 527.4L992.8 541.2Z" fill="#527ca8"/><path d="M997.4 555.6L998.8 541.8L1004.8 542.5L1003.2 556.3Z" fill="#527ca8"/><path d="M998.8 541.8L1000.3 528L1006.7 528.8L1004.8 542.5Z" fill="#527ca8"/><path d="M968 567.7L968.9 554.3L974.5 554.3L973.6 567.7Z" fill="#527ca8"/><path d="M980.2 554.4L980.8 540.6L986.8 540.8L985.9 554.7Z" fill="#527ca8"/><path d="M1013 571.4L1014.5 558.1L1019.9 559.2L1018.4 572.5Z" fill="#527ca8"/><path d="M787.4 474.6L780.9 475.7L790.9 474.6L797.4 473.5Z" fill="#12171c"/><path d="M980.8 540.6L981 526.7L987.4 527L986.8 540.8Z" fill="#527ca8"/><path d="M1171.2 512.8L1180.6 519.2L1186 523.1L1176.6 516.7Z" fill="#14191e"/><path d="M1003.2 556.3L1004.8 542.5L1010.8 543.4L1008.9 557.1Z" fill="#527ca8"/><path d="M1004.8 542.5L1006.7 528.8L1013.1 529.7L1010.8 543.4Z" fill="#527ca8"/><path d="M968.4 526.6L967.1 513.1L973.9 513.1L974.6 526.6Z" fill="#527ca8"/><path d="M837.4 629.2L843.5 625.7L853.5 624.6L847.5 628.1Z" fill="#414952"/><path d="M1051.1 616.5L1048 605.8L1052 607.7L1055.5 618.5Z" fill="#54687e"/><path d="M913.8 605.5L917.7 595.7L927.7 594.7L923.9 604.4Z" fill="#546c87"/><path d="M919 492.5L913.5 482.6L923.5 481.6L929 491.4Z" fill="#527ca8"/><path d="M953.9 513.7L950.7 501.1L957.9 500.6L960.4 513.3Z" fill="#527ca8"/><path d="M1068 504.2L1076 495.8L1083.4 498.5L1074.6 506.6Z" fill="#527ca8"/><path d="M1019.3 530.8L1022.5 517.7L1029.2 519L1025.4 532Z" fill="#527ca8"/><path d="M1038.9 602.3L1037.8 590.6L1042.3 592.2L1043.6 604Z" fill="#53708e"/><path d="M950.6 581.2L952.3 568.7L957.4 568.2L955.7 580.7Z" fill="#52779d"/><path d="M974.5 554.3L974.8 540.4L980.8 540.6L980.2 554.4Z" fill="#527ca8"/><path d="M974.8 540.4L974.6 526.6L981 526.7L980.8 540.6Z" fill="#527ca8"/><path d="M1008.9 557.1L1010.8 543.4L1016.6 544.4L1014.5 558.1Z" fill="#527ca8"/><path d="M962.6 567.9L963.4 554.5L968.9 554.3L968 567.7Z" fill="#527ca8"/><path d="M1010.8 543.4L1013.1 529.7L1019.3 530.8L1016.6 544.4Z" fill="#527ca8"/><path d="M863.5 623.5L869 617.7L879.1 616.6L873.6 622.4Z" fill="#55616e"/><path d="M1064.9 630.1L1059.5 620.6L1063.1 622.7L1068.9 632.4Z" fill="#545f6c"/><path d="M1035.7 520.5L1040.6 508.5L1047.5 510.3L1041.9 522.1Z" fill="#527ca8"/><path d="M814.1 473.7L807.4 472.4L817.4 471.3L824.1 472.6Z" fill="#1f2a35"/><path d="M1028.1 587.6L1028.7 575L1033.6 576.4L1033.1 589Z" fill="#52769c"/><path d="M889.1 615.5L893.8 607.7L903.8 606.6L899.1 614.5Z" fill="#54677b"/><path d="M1018.4 572.5L1019.9 559.2L1025.3 560.4L1023.6 573.7Z" fill="#527ca8"/><path d="M968.9 554.3L969 540.5L974.8 540.4L974.5 554.3Z" fill="#527ca8"/><path d="M962.3 526.8L960.4 513.3L967.1 513.1L968.4 526.6Z" fill="#527ca8"/><path d="M969 540.5L968.4 526.6L974.6 526.6L974.8 540.4Z" fill="#527ca8"/><path d="M893.5 484.8L887.4 476.8L897.4 475.7L903.5 483.7Z" fill="#496f97"/><path d="M1014.5 558.1L1016.6 544.4L1022.3 545.5L1019.9 559.2Z" fill="#527ca8"/><path d="M840.8 475.2L834.1 471.5L844.1 470.5L850.8 474.1Z" fill="#2e4155"/><path d="M933.8 502.8L929 491.4L939 490.3L943.8 501.7Z" fill="#527ca8"/><path d="M1025.4 532L1029.2 519L1035.7 520.5L1031.4 533.4Z" fill="#527ca8"/><path d="M1016.6 544.4L1019.3 530.8L1025.4 532L1022.3 545.5Z" fill="#527ca8"/><path d="M1054.1 512.2L1061 501.9L1068 504.2L1060.5 514.3Z" fill="#527ca8"/><path d="M867.3 478.9L860.9 473L870.9 472L877.4 477.9Z" fill="#3d5977"/><path d="M957.4 568.2L958 554.8L963.4 554.5L962.6 567.9Z" fill="#527ba7"/><path d="M927.7 594.7L930.5 583.4L940.5 582.3L937.7 593.6Z" fill="#537192"/><path d="M947.7 514.3L943.8 501.7L950.7 501.1L953.9 513.7Z" fill="#527ca8"/><path d="M1023.6 573.7L1025.3 560.4L1030.4 561.7L1028.7 575Z" fill="#527ba7"/><path d="M963.4 554.5L963.2 540.7L969 540.5L968.9 554.3Z" fill="#527ca8"/><path d="M1033.1 589L1033.6 576.4L1038.2 577.9L1037.8 590.6Z" fill="#52759a"/><path d="M963.2 540.7L962.3 526.8L968.4 526.6L969 540.5Z" fill="#527ca8"/><path d="M1043.6 604L1042.3 592.2L1046.5 593.9L1048 605.8Z" fill="#536e8b"/><path d="M1019.9 559.2L1022.3 545.5L1027.9 546.8L1025.3 560.4Z" fill="#527ca8"/><path d="M1107.1 498.6L1117.7 495.2L1124.8 498.9L1113.6 502Z" fill="#3b5672"/><path d="M800.9 633.5L807.4 632.4L817.4 631.3L810.9 632.5Z" fill="#1a1d20"/><path d="M1041.9 522.1L1047.5 510.3L1054.1 512.2L1048 523.8Z" fill="#527ca8"/><path d="M956.3 527.2L953.9 513.7L960.4 513.3L962.3 526.8Z" fill="#527ca8"/><path d="M1124.8 498.9L1135.8 498L1142.9 502.2L1131.3 502.7Z" fill="#31455a"/><path d="M1022.3 545.5L1025.4 532L1031.4 533.4L1027.9 546.8Z" fill="#527ca8"/><path d="M940.5 582.3L942.3 569.8L952.3 568.7L950.6 581.2Z" fill="#52769c"/><path d="M1055.5 618.5L1052 607.7L1055.8 609.6L1059.5 620.6Z" fill="#54677b"/><path d="M1090.2 501.3L1100.1 495.4L1107.1 498.6L1096.7 504.2Z" fill="#45688d"/><path d="M1031.4 533.4L1035.7 520.5L1041.9 522.1L1037.2 534.8Z" fill="#527ca8"/><path d="M777.4 475.7L770.9 476.8L780.9 475.7L787.4 474.6Z" fill="#12171c"/><path d="M952.3 568.7L952.9 555.3L958 554.8L957.4 568.2Z" fill="#527aa5"/><path d="M827.4 630.3L833.5 626.7L843.5 625.7L837.4 629.2Z" fill="#414952"/><path d="M903.8 606.6L907.7 596.8L917.7 595.7L913.8 605.5Z" fill="#546c87"/><path d="M958 554.8L957.7 541L963.2 540.7L963.4 554.5Z" fill="#527ca8"/><path d="M1080.3 643.1L1072.5 634.8L1077.9 638.8L1085.7 647Z" fill="#292e34"/><path d="M909 493.6L903.5 483.7L913.5 482.6L919 492.5Z" fill="#527ca8"/><path d="M1074.6 506.6L1083.4 498.5L1090.2 501.3L1080.8 509.1Z" fill="#507aa5"/><path d="M1142.9 502.2L1153.9 503.9L1160.6 508.5L1149.1 506.4Z" fill="#273645"/><path d="M1028.7 575L1030.4 561.7L1035.4 563.1L1033.6 576.4Z" fill="#527aa5"/><path d="M957.7 541L956.3 527.2L962.3 526.8L963.2 540.7Z" fill="#527ca8"/><path d="M1025.3 560.4L1027.9 546.8L1033.3 548.2L1030.4 561.7Z" fill="#527ca8"/><path d="M1068.9 632.4L1063.1 622.7L1066.4 624.9L1072.5 634.8Z" fill="#49515c"/><path d="M853.5 624.6L859 618.8L869 617.7L863.5 623.5Z" fill="#55616e"/><path d="M804.1 474.8L797.4 473.5L807.4 472.4L814.1 473.7Z" fill="#1f2a35"/><path d="M879.1 616.6L883.8 608.7L893.8 607.7L889.1 615.5Z" fill="#54677b"/><path d="M1027.9 546.8L1031.4 533.4L1037.2 534.8L1033.3 548.2Z" fill="#527ca8"/><path d="M1095.1 653.4L1085.7 647L1091.2 651L1100.5 657.3Z" fill="#121517"/><path d="M1060.5 514.3L1068 504.2L1074.6 506.6L1066.5 516.4Z" fill="#527ca8"/><path d="M1037.8 590.6L1038.2 577.9L1042.7 579.5L1042.3 592.2Z" fill="#537498"/><path d="M950.5 527.7L947.7 514.3L953.9 513.7L956.3 527.2Z" fill="#527ca8"/><path d="M883.5 485.9L877.4 477.9L887.4 476.8L893.5 484.8Z" fill="#496f97"/><path d="M830.8 476.3L824.1 472.6L834.1 471.5L840.8 475.2Z" fill="#2e4155"/><path d="M923.8 503.9L919 492.5L929 491.4L933.8 502.8Z" fill="#527ca8"/><path d="M937.6 515.4L933.8 502.8L943.8 501.7L947.7 514.3Z" fill="#527ca8"/><path d="M1048 605.8L1046.5 593.9L1050.4 595.7L1052 607.7Z" fill="#546d88"/><path d="M1048 523.8L1054.1 512.2L1060.5 514.3L1053.7 525.7Z" fill="#527ca8"/><path d="M1037.2 534.8L1041.9 522.1L1048 523.8L1042.7 536.5Z" fill="#527ca8"/><path d="M1160.6 508.5L1171.2 512.8L1176.6 516.7L1166.1 512.4Z" fill="#1e2832"/><path d="M952.9 555.3L952.3 541.5L957.7 541L958 554.8Z" fill="#527ca8"/><path d="M857.3 480L850.8 474.1L860.9 473L867.3 478.9Z" fill="#3d5977"/><path d="M917.7 595.7L920.5 584.4L930.5 583.4L927.7 594.7Z" fill="#537192"/><path d="M952.3 541.5L950.5 527.7L956.3 527.2L957.7 541Z" fill="#527ca8"/><path d="M1030.4 561.7L1033.3 548.2L1038.5 549.7L1035.4 563.1Z" fill="#527ca8"/><path d="M1033.6 576.4L1035.4 563.1L1040.1 564.7L1038.2 577.9Z" fill="#5279a3"/><path d="M1176.6 516.7L1186 523.1L1191.4 527L1182.1 520.6Z" fill="#14191e"/><path d="M1059.5 620.6L1055.8 609.6L1059.2 611.7L1063.1 622.7Z" fill="#556578"/><path d="M942.3 569.8L942.8 556.4L952.9 555.3L952.3 568.7Z" fill="#527aa4"/><path d="M1033.3 548.2L1037.2 534.8L1042.7 536.5L1038.5 549.7Z" fill="#527ca8"/><path d="M790.9 634.6L797.4 633.5L807.4 632.4L800.9 633.5Z" fill="#1a1d20"/><path d="M930.5 583.4L932.3 570.8L942.3 569.8L940.5 582.3Z" fill="#52769c"/><path d="M767.4 476.7L760.9 477.9L770.9 476.8L777.4 475.7Z" fill="#12171c"/><path d="M1042.3 592.2L1042.7 579.5L1046.8 581.2L1046.5 593.9Z" fill="#537395"/><path d="M817.4 631.3L823.5 627.8L833.5 626.7L827.4 630.3Z" fill="#414952"/><path d="M893.8 607.7L897.7 597.9L907.7 596.8L903.8 606.6Z" fill="#546c87"/><path d="M899 494.6L893.5 484.8L903.5 483.7L909 493.6Z" fill="#527ca8"/><path d="M1042.7 536.5L1048 523.8L1053.7 525.7L1048 538.2Z" fill="#527ca8"/><path d="M940.5 528.8L937.6 515.4L947.7 514.3L950.5 527.7Z" fill="#527ca8"/><path d="M1096.7 504.2L1107.1 498.6L1113.6 502L1102.5 507.3Z" fill="#44668a"/><path d="M1035.4 563.1L1038.5 549.7L1043.4 551.3L1040.1 564.7Z" fill="#527ca8"/><path d="M1080.8 509.1L1090.2 501.3L1096.7 504.2L1086.6 511.8Z" fill="#4e77a1"/><path d="M843.5 625.7L849 619.9L859 618.8L853.5 624.6Z" fill="#55616e"/><path d="M1053.7 525.7L1060.5 514.3L1066.5 516.4L1059.2 527.7Z" fill="#527ca8"/><path d="M1066.5 516.4L1074.6 506.6L1080.8 509.1L1072.1 518.7Z" fill="#527ca8"/><path d="M1038.2 577.9L1040.1 564.7L1044.6 566.3L1042.7 579.5Z" fill="#5278a0"/><path d="M794.1 475.8L787.4 474.6L797.4 473.5L804.1 474.8Z" fill="#1f2a35"/><path d="M1052 607.7L1050.4 595.7L1054 597.6L1055.8 609.6Z" fill="#546b85"/><path d="M869 617.7L873.8 609.8L883.8 608.7L879.1 616.6Z" fill="#54677b"/><path d="M1113.6 502L1124.8 498.9L1131.3 502.7L1119.5 505.5Z" fill="#3a5571"/><path d="M942.8 556.4L942.2 542.6L952.3 541.5L952.9 555.3Z" fill="#527ca8"/><path d="M1038.5 549.7L1042.7 536.5L1048 538.2L1043.4 551.3Z" fill="#527ca8"/><path d="M942.2 542.6L940.5 528.8L950.5 527.7L952.3 541.5Z" fill="#527ca8"/><path d="M873.4 486.9L867.3 478.9L877.4 477.9L883.5 485.9Z" fill="#496f97"/><path d="M820.8 477.3L814.1 473.7L824.1 472.6L830.8 476.3Z" fill="#2e4155"/><path d="M913.8 504.9L909 493.6L919 492.5L923.8 503.9Z" fill="#527ca8"/><path d="M927.6 516.5L923.8 503.9L933.8 502.8L937.6 515.4Z" fill="#527ca8"/><path d="M847.3 481.1L840.8 475.2L850.8 474.1L857.3 480Z" fill="#3d5977"/><path d="M1131.3 502.7L1142.9 502.2L1149.1 506.4L1137.1 506.6Z" fill="#31465b"/><path d="M1072.5 634.8L1066.4 624.9L1071.8 628.9L1077.9 638.8Z" fill="#434b54"/><path d="M1063.1 622.7L1059.2 611.7L1062.3 613.7L1066.4 624.9Z" fill="#556474"/><path d="M907.7 596.8L910.5 585.5L920.5 584.4L917.7 595.7Z" fill="#537192"/><path d="M1046.5 593.9L1046.8 581.2L1050.7 583L1050.4 595.7Z" fill="#537192"/><path d="M932.3 570.8L932.8 557.5L942.8 556.4L942.3 569.8Z" fill="#527aa4"/><path d="M1048 538.2L1053.7 525.7L1059.2 527.7L1053 540Z" fill="#527ca8"/><path d="M1040.1 564.7L1043.4 551.3L1048.1 553L1044.6 566.3Z" fill="#527ba7"/><path d="M780.9 635.7L787.4 634.6L797.4 633.5L790.9 634.6Z" fill="#1a1d20"/><path d="M1085.7 647L1077.9 638.8L1083.3 642.7L1091.2 651Z" fill="#292e34"/><path d="M1042.7 579.5L1044.6 566.3L1048.8 568L1046.8 581.2Z" fill="#52779d"/><path d="M920.5 584.4L922.2 571.9L932.3 570.8L930.5 583.4Z" fill="#52769c"/><path d="M1149.1 506.4L1160.6 508.5L1166.1 512.4L1154.6 510.3Z" fill="#283747"/><path d="M1043.4 551.3L1048 538.2L1053 540L1048.1 553Z" fill="#527ca8"/><path d="M757.4 477.8L750.9 479L760.9 477.9L767.4 476.7Z" fill="#12171c"/><path d="M1100.5 657.3L1091.2 651L1096.6 654.9L1105.9 661.3Z" fill="#121517"/><path d="M1059.2 527.7L1066.5 516.4L1072.1 518.7L1064.3 529.8Z" fill="#527ca8"/><path d="M807.4 632.4L813.5 628.9L823.5 627.8L817.4 631.3Z" fill="#414952"/><path d="M1055.8 609.6L1054 597.6L1057.3 599.5L1059.2 611.7Z" fill="#546a82"/><path d="M883.8 608.7L887.6 599L897.7 597.9L893.8 607.7Z" fill="#546c87"/><path d="M889 495.7L883.5 485.9L893.5 484.8L899 494.6Z" fill="#527ca8"/><path d="M930.5 529.9L927.6 516.5L937.6 515.4L940.5 528.8Z" fill="#527ca8"/><path d="M1072.1 518.7L1080.8 509.1L1086.6 511.8L1077.3 521.1Z" fill="#527ca8"/><path d="M1166.1 512.4L1176.6 516.7L1182.1 520.6L1171.5 516.3Z" fill="#1e2832"/><path d="M833.5 626.7L839 620.9L849 619.9L843.5 625.7Z" fill="#55616e"/><path d="M784.1 476.9L777.4 475.7L787.4 474.6L794.1 475.8Z" fill="#1f2a35"/><path d="M859 618.8L863.8 610.9L873.8 609.8L869 617.7Z" fill="#54677b"/><path d="M932.8 557.5L932.2 543.7L942.2 542.6L942.8 556.4Z" fill="#527ca8"/><path d="M1086.6 511.8L1096.7 504.2L1102.5 507.3L1092 514.6Z" fill="#4c739c"/><path d="M1050.4 595.7L1050.7 583L1054.2 584.8L1054 597.6Z" fill="#53708f"/><path d="M932.2 543.7L930.5 529.9L940.5 528.8L942.2 542.6Z" fill="#527ca8"/><path d="M1182.1 520.6L1191.4 527L1196.8 531L1187.5 524.6Z" fill="#14191e"/><path d="M1044.6 566.3L1048.1 553L1052.5 554.8L1048.8 568Z" fill="#527aa4"/><path d="M863.4 488L857.3 480L867.3 478.9L873.4 486.9Z" fill="#496f97"/><path d="M810.8 478.4L804.1 474.8L814.1 473.7L820.8 477.3Z" fill="#2e4155"/><path d="M903.7 506L899 494.6L909 493.6L913.8 504.9Z" fill="#527ca8"/><path d="M917.6 517.5L913.8 504.9L923.8 503.9L927.6 516.5Z" fill="#527ca8"/><path d="M1053 540L1059.2 527.7L1064.3 529.8L1057.7 541.9Z" fill="#527ca8"/><path d="M1102.5 507.3L1113.6 502L1119.5 505.5L1107.9 510.4Z" fill="#436486"/><path d="M837.3 482.2L830.8 476.3L840.8 475.2L847.3 481.1Z" fill="#3d5977"/><path d="M1046.8 581.2L1048.8 568L1052.7 569.8L1050.7 583Z" fill="#52759a"/><path d="M897.7 597.9L900.5 586.6L910.5 585.5L907.7 596.8Z" fill="#537192"/><path d="M1048.1 553L1053 540L1057.7 541.9L1052.5 554.8Z" fill="#527ca8"/><path d="M922.2 571.9L922.8 558.5L932.8 557.5L932.3 570.8Z" fill="#527aa4"/><path d="M770.9 636.8L777.4 635.6L787.4 634.6L780.9 635.7Z" fill="#1a1d20"/><path d="M1119.5 505.5L1131.3 502.7L1137.1 506.6L1124.8 509Z" fill="#3a5470"/><path d="M910.5 585.5L912.2 573L922.2 571.9L920.5 584.4Z" fill="#52769c"/><path d="M1059.2 611.7L1057.3 599.5L1060.3 601.5L1062.3 613.7Z" fill="#54687e"/><path d="M1064.3 529.8L1072.1 518.7L1077.3 521.1L1069.1 532Z" fill="#527ca8"/><path d="M1066.4 624.9L1062.3 613.7L1067.7 617.7L1071.8 628.9Z" fill="#556373"/><path d="M747.3 478.9L740.9 480L750.9 479L757.4 477.8Z" fill="#12171c"/><path d="M797.4 633.5L803.5 630L813.5 628.9L807.4 632.4Z" fill="#414952"/><path d="M873.8 609.8L877.6 600.1L887.6 599L883.8 608.7Z" fill="#546c87"/><path d="M879 496.8L873.4 486.9L883.5 485.9L889 495.7Z" fill="#527ca8"/><path d="M920.5 530.9L917.6 517.5L927.6 516.5L930.5 529.9Z" fill="#527ca8"/><path d="M1048.8 568L1052.5 554.8L1056.6 556.7L1052.7 569.8Z" fill="#5279a1"/><path d="M1054 597.6L1054.2 584.8L1057.5 586.7L1057.3 599.5Z" fill="#536e8b"/><path d="M823.5 627.8L829 622L839 620.9L833.5 626.7Z" fill="#55616e"/><path d="M774.1 478L767.4 476.7L777.4 475.7L784.1 476.9Z" fill="#1f2a35"/><path d="M1077.3 521.1L1086.6 511.8L1092 514.6L1082.2 523.6Z" fill="#527ca8"/><path d="M849 619.9L853.8 612L863.8 610.9L859 618.8Z" fill="#54677b"/><path d="M1077.9 638.8L1071.8 628.9L1077.3 632.8L1083.3 642.7Z" fill="#434b54"/><path d="M922.8 558.5L922.2 544.7L932.2 543.7L932.8 557.5Z" fill="#527ca8"/><path d="M1050.7 583L1052.7 569.8L1056.3 571.7L1054.2 584.8Z" fill="#537497"/><path d="M1137.1 506.6L1149.1 506.4L1154.6 510.3L1142.5 510.5Z" fill="#31465c"/><path d="M1057.7 541.9L1064.3 529.8L1069.1 532L1062.1 543.9Z" fill="#527ca8"/><path d="M1052.5 554.8L1057.7 541.9L1062.1 543.9L1056.6 556.7Z" fill="#527ba7"/><path d="M922.2 544.7L920.5 530.9L930.5 529.9L932.2 543.7Z" fill="#527ca8"/><path d="M853.4 489.1L847.3 481.1L857.3 480L863.4 488Z" fill="#496f97"/><path d="M800.8 479.5L794.1 475.8L804.1 474.8L810.8 478.4Z" fill="#2e4155"/><path d="M893.7 507.1L889 495.7L899 494.6L903.7 506Z" fill="#527ca8"/><path d="M907.6 518.6L903.7 506L913.8 504.9L917.6 517.5Z" fill="#527ca8"/><path d="M1091.2 651L1083.3 642.7L1088.8 646.6L1096.6 654.9Z" fill="#292e34"/><path d="M827.3 483.3L820.8 477.3L830.8 476.3L837.3 482.2Z" fill="#3d5977"/><path d="M1092 514.6L1102.5 507.3L1107.9 510.4L1096.8 517.4Z" fill="#4a7097"/><path d="M887.6 599L890.5 587.7L900.5 586.6L897.7 597.9Z" fill="#537192"/><path d="M1154.6 510.3L1166.1 512.4L1171.5 516.3L1160 514.3Z" fill="#283747"/><path d="M1105.9 661.3L1096.6 654.9L1102 658.8L1111.3 665.2Z" fill="#121517"/><path d="M912.2 573L912.8 559.6L922.8 558.5L922.2 571.9Z" fill="#527aa4"/><path d="M760.9 637.9L767.3 636.7L777.4 635.6L770.9 636.8Z" fill="#1a1d20"/><path d="M900.5 586.6L902.2 574.1L912.2 573L910.5 585.5Z" fill="#52769c"/><path d="M1069.1 532L1077.3 521.1L1082.2 523.6L1073.5 534.2Z" fill="#527ca8"/><path d="M1052.7 569.8L1056.6 556.7L1060.4 558.6L1056.3 571.7Z" fill="#52779e"/><path d="M1171.5 516.3L1182.1 520.6L1187.5 524.6L1176.9 520.3Z" fill="#1e2832"/><path d="M1107.9 510.4L1119.5 505.5L1124.8 509L1112.7 513.6Z" fill="#416182"/><path d="M737.3 480L730.8 481.1L740.9 480L747.3 478.9Z" fill="#12171c"/><path d="M1057.3 599.5L1057.5 586.7L1060.3 588.7L1060.3 601.5Z" fill="#546d88"/><path d="M787.4 634.6L793.5 631L803.5 630L797.4 633.5Z" fill="#414952"/><path d="M863.8 610.9L867.6 601.1L877.6 600.1L873.8 609.8Z" fill="#546c87"/><path d="M1054.2 584.8L1056.3 571.7L1059.6 573.6L1057.5 586.7Z" fill="#4f6d8c"/><path d="M868.9 497.9L863.4 488L873.4 486.9L879 496.8Z" fill="#527ca8"/><path d="M910.5 532L907.6 518.6L917.6 517.5L920.5 530.9Z" fill="#527ca8"/><path d="M1187.5 524.6L1196.8 531L1202.3 534.9L1192.9 528.5Z" fill="#14191e"/><path d="M1062.1 543.9L1069.1 532L1073.5 534.2L1066.1 546Z" fill="#527ca8"/><path d="M1062.3 613.7L1060.3 601.5L1065.7 605.4L1067.7 617.7Z" fill="#54677d"/><path d="M1056.6 556.7L1062.1 543.9L1066.1 546L1060.4 558.6Z" fill="#527aa4"/><path d="M813.5 628.9L819 623.1L829 622L823.5 627.8Z" fill="#55616e"/><path d="M764 479.1L757.4 477.8L767.4 476.7L774.1 478Z" fill="#1f2a35"/><path d="M839 620.9L843.7 613L853.8 612L849 619.9Z" fill="#54677b"/><path d="M912.8 559.6L912.2 545.8L922.2 544.7L922.8 558.5Z" fill="#527ca8"/><path d="M1082.2 523.6L1092 514.6L1096.8 517.4L1086.5 526.2Z" fill="#4f78a3"/><path d="M912.2 545.8L910.5 532L920.5 530.9L922.2 544.7Z" fill="#527ca8"/><path d="M843.4 490.2L837.3 482.2L847.3 481.1L853.4 489.1Z" fill="#496f97"/><path d="M790.8 480.6L784.1 476.9L794.1 475.8L800.8 479.5Z" fill="#2e4155"/><path d="M883.7 508.2L879 496.8L889 495.7L893.7 507.1Z" fill="#527ca8"/><path d="M897.6 519.7L893.7 507.1L903.7 506L907.6 518.6Z" fill="#527ca8"/><path d="M1124.8 509L1137.1 506.6L1142.5 510.5L1130.2 512.9Z" fill="#3a546f"/><path d="M817.3 484.3L810.8 478.4L820.8 477.3L827.3 483.3Z" fill="#3d5977"/><path d="M877.6 600.1L880.5 588.7L890.5 587.7L887.6 599Z" fill="#537192"/><path d="M1071.8 628.9L1067.7 617.7L1073.2 621.6L1077.3 632.8Z" fill="#556373"/><path d="M1056.3 571.7L1060.4 558.6L1063.8 560.7L1059.6 573.6Z" fill="#52769b"/><path d="M902.2 574.1L902.8 560.7L912.8 559.6L912.2 573Z" fill="#527aa4"/><path d="M750.8 638.9L757.3 637.8L767.3 636.7L760.9 637.9Z" fill="#1a1d20"/><path d="M1096.8 517.4L1107.9 510.4L1112.7 513.6L1101.1 520.3Z" fill="#486b91"/><path d="M890.5 587.7L892.2 575.1L902.2 574.1L900.5 586.6Z" fill="#52769c"/><path d="M1073.5 534.2L1082.2 523.6L1086.5 526.2L1077.4 536.6Z" fill="#527ba7"/><path d="M1057.5 586.7L1059.6 573.6L1062.6 575.6L1060.3 588.7Z" fill="#49637f"/><path d="M727.3 481L720.8 482.2L730.8 481.1L737.3 480Z" fill="#12171c"/><path d="M1083.3 642.7L1077.3 632.8L1082.7 636.7L1088.8 646.6Z" fill="#434b54"/><path d="M1142.5 510.5L1154.6 510.3L1160 514.3L1147.9 514.4Z" fill="#31465c"/><path d="M777.4 635.6L783.4 632.1L793.5 631L787.4 634.6Z" fill="#414952"/><path d="M1060.4 558.6L1066.1 546L1069.8 548.2L1063.8 560.7Z" fill="#5278a1"/><path d="M853.8 612L857.6 602.2L867.6 601.1L863.8 610.9Z" fill="#546c87"/><path d="M858.9 499L853.4 489.1L863.4 488L868.9 497.9Z" fill="#527ca8"/><path d="M1066.1 546L1073.5 534.2L1077.4 536.6L1069.8 548.2Z" fill="#527aa5"/><path d="M900.4 533.1L897.6 519.7L907.6 518.6L910.5 532Z" fill="#527ca8"/><path d="M803.5 630L809 624.2L819 623.1L813.5 628.9Z" fill="#55616e"/><path d="M754 480.2L747.3 478.9L757.4 477.8L764 479.1Z" fill="#1f2a35"/><path d="M1096.6 654.9L1088.8 646.6L1094.2 650.6L1102 658.8Z" fill="#292e34"/><path d="M829 622L833.7 614.1L843.7 613L839 620.9Z" fill="#54677b"/><path d="M902.8 560.7L902.2 546.9L912.2 545.8L912.8 559.6Z" fill="#527ca8"/><path d="M1060.3 601.5L1060.3 588.7L1065.8 592.6L1065.7 605.4Z" fill="#546c86"/><path d="M1160 514.3L1171.5 516.3L1176.9 520.3L1165.4 518.2Z" fill="#283747"/><path d="M902.2 546.9L900.4 533.1L910.5 532L912.2 545.8Z" fill="#527ca8"/><path d="M833.4 491.3L827.3 483.3L837.3 482.2L843.4 490.2Z" fill="#496f97"/><path d="M780.8 481.7L774.1 478L784.1 476.9L790.8 480.6Z" fill="#2e4155"/><path d="M873.7 509.3L868.9 497.9L879 496.8L883.7 508.2Z" fill="#527ca8"/><path d="M1111.3 665.2L1102 658.8L1107.4 662.8L1116.8 669.1Z" fill="#121517"/><path d="M887.6 520.8L883.7 508.2L893.7 507.1L897.6 519.7Z" fill="#527ca8"/><path d="M1086.5 526.2L1096.8 517.4L1101.1 520.3L1090.5 528.9Z" fill="#4c739b"/><path d="M807.3 485.4L800.8 479.5L810.8 478.4L817.3 484.3Z" fill="#3d5977"/><path d="M1112.7 513.6L1124.8 509L1130.2 512.9L1118.1 517.6Z" fill="#416080"/><path d="M1059.6 573.6L1063.8 560.7L1066.8 562.7L1062.6 575.6Z" fill="#4d6d8e"/><path d="M867.6 601.1L870.4 589.8L880.5 588.7L877.6 600.1Z" fill="#537192"/><path d="M1176.9 520.3L1187.5 524.6L1192.9 528.5L1182.3 524.2Z" fill="#1e2832"/><path d="M892.2 575.1L892.8 561.8L902.8 560.7L902.2 574.1Z" fill="#527aa4"/><path d="M740.8 640L747.3 638.9L757.3 637.8L750.8 638.9Z" fill="#1a1d20"/><path d="M1192.9 528.5L1202.3 534.9L1207.7 538.8L1198.3 532.5Z" fill="#14191e"/><path d="M880.5 588.7L882.2 576.2L892.2 575.1L890.5 587.7Z" fill="#52769c"/><path d="M1067.7 617.7L1065.7 605.4L1071.1 609.4L1073.2 621.6Z" fill="#54677d"/><path d="M1077.4 536.6L1086.5 526.2L1090.5 528.9L1081 539Z" fill="#4f76a0"/><path d="M1063.8 560.7L1069.8 548.2L1073 550.4L1066.8 562.7Z" fill="#507399"/><path d="M717.3 482.1L710.8 483.3L720.8 482.2L727.3 481Z" fill="#12171c"/><path d="M767.3 636.7L773.4 633.2L783.4 632.1L777.4 635.6Z" fill="#414952"/><path d="M843.7 613L847.6 603.3L857.6 602.2L853.8 612Z" fill="#546c87"/><path d="M1069.8 548.2L1077.4 536.6L1081 539L1073 550.4Z" fill="#50779f"/><path d="M848.9 500L843.4 490.2L853.4 489.1L858.9 499Z" fill="#527ca8"/><path d="M890.4 534.2L887.6 520.8L897.6 519.7L900.4 533.1Z" fill="#527ca8"/><path d="M1060.3 588.7L1062.6 575.6L1068 579.5L1065.8 592.6Z" fill="#465e78"/><path d="M793.5 631L799 625.2L809 624.2L803.5 630Z" fill="#55616e"/><path d="M1130.2 512.9L1142.5 510.5L1147.9 514.4L1135.6 516.9Z" fill="#3a546f"/><path d="M744 481.2L737.3 480L747.3 478.9L754 480.2Z" fill="#1f2a35"/><path d="M819 623.1L823.7 615.2L833.7 614.1L829 622Z" fill="#54677b"/><path d="M892.8 561.8L892.2 548L902.2 546.9L902.8 560.7Z" fill="#527ca8"/><path d="M1077.3 632.8L1073.2 621.6L1078.6 625.5L1082.7 636.7Z" fill="#556373"/><path d="M1101.1 520.3L1112.7 513.6L1118.1 517.6L1106.6 524.3Z" fill="#46698e"/><path d="M892.2 548L890.4 534.2L900.4 533.1L902.2 546.9Z" fill="#527ca8"/><path d="M823.4 492.3L817.3 484.3L827.3 483.3L833.4 491.3Z" fill="#496f97"/><path d="M770.7 482.7L764 479.1L774.1 478L780.8 481.7Z" fill="#2e4155"/><path d="M863.7 510.3L858.9 499L868.9 497.9L873.7 509.3Z" fill="#527ca8"/><path d="M877.6 521.8L873.7 509.3L883.7 508.2L887.6 520.8Z" fill="#527ca8"/><path d="M797.3 486.5L790.8 480.6L800.8 479.5L807.3 485.4Z" fill="#3d5977"/><path d="M857.6 602.2L860.4 590.9L870.4 589.8L867.6 601.1Z" fill="#537192"/><path d="M1088.8 646.6L1082.7 636.7L1088.1 640.7L1094.2 650.6Z" fill="#434b54"/><path d="M1147.9 514.4L1160 514.3L1165.4 518.2L1153.3 518.4Z" fill="#31465c"/><path d="M882.2 576.2L882.8 562.9L892.8 561.8L892.2 575.1Z" fill="#527aa4"/><path d="M730.8 641.1L737.3 640L747.3 638.9L740.8 640Z" fill="#1a1d20"/><path d="M1062.6 575.6L1066.8 562.7L1072.3 566.7L1068 579.5Z" fill="#4b6887"/><path d="M870.4 589.8L872.2 577.3L882.2 576.2L880.5 588.7Z" fill="#52769c"/><path d="M1102 658.8L1094.2 650.6L1099.6 654.5L1107.4 662.8Z" fill="#292e34"/><path d="M707.3 483.2L700.8 484.3L710.8 483.3L717.3 482.1Z" fill="#12171c"/><path d="M1090.5 528.9L1101.1 520.3L1106.6 524.3L1095.9 532.8Z" fill="#4b7097"/><path d="M1065.7 605.4L1065.8 592.6L1071.2 596.5L1071.1 609.4Z" fill="#546c86"/><path d="M757.3 637.8L763.4 634.3L773.4 633.2L767.3 636.7Z" fill="#414952"/><path d="M833.7 614.1L837.6 604.4L847.6 603.3L843.7 613Z" fill="#546c87"/><path d="M1165.4 518.2L1176.9 520.3L1182.3 524.2L1170.8 522.1Z" fill="#283747"/><path d="M838.9 501.1L833.4 491.3L843.4 490.2L848.9 500Z" fill="#527ca8"/><path d="M880.4 535.2L877.6 521.8L887.6 520.8L890.4 534.2Z" fill="#527ca8"/><path d="M1116.8 669.1L1107.4 662.8L1112.9 666.7L1122.2 673.1Z" fill="#121517"/><path d="M783.4 632.1L788.9 626.3L799 625.2L793.5 631Z" fill="#55616e"/><path d="M734 482.3L727.3 481L737.3 480L744 481.2Z" fill="#1f2a35"/><path d="M809 624.2L813.7 616.3L823.7 615.2L819 623.1Z" fill="#54677b"/><path d="M1118.1 517.6L1130.2 512.9L1135.6 516.9L1123.5 521.5Z" fill="#416080"/><path d="M1066.8 562.7L1073 550.4L1078.5 554.3L1072.3 566.7Z" fill="#4d6f92"/><path d="M882.8 562.9L882.2 549.1L892.2 548L892.8 561.8Z" fill="#527ca8"/><path d="M1081 539L1090.5 528.9L1095.9 532.8L1086.4 542.9Z" fill="#4d739a"/><path d="M1182.3 524.2L1192.9 528.5L1198.3 532.5L1187.8 528.2Z" fill="#1e2832"/><path d="M882.2 549.1L880.4 535.2L890.4 534.2L892.2 548Z" fill="#527ca8"/><path d="M813.4 493.4L807.3 485.4L817.3 484.3L823.4 492.3Z" fill="#496f97"/><path d="M1073 550.4L1081 539L1086.4 542.9L1078.5 554.3Z" fill="#4e7299"/><path d="M760.7 483.8L754 480.2L764 479.1L770.7 482.7Z" fill="#2e4155"/><path d="M853.7 511.4L848.9 500L858.9 499L863.7 510.3Z" fill="#527ca8"/><path d="M867.5 522.9L863.7 510.3L873.7 509.3L877.6 521.8Z" fill="#527ca8"/><path d="M787.2 487.6L780.8 481.7L790.8 480.6L797.3 486.5Z" fill="#3d5977"/><path d="M1198.3 532.5L1207.7 538.8L1213.1 542.8L1203.8 536.4Z" fill="#14191e"/><path d="M847.6 603.3L850.4 592L860.4 590.9L857.6 602.2Z" fill="#537192"/><path d="M1073.2 621.6L1071.1 609.4L1076.5 613.3L1078.6 625.5Z" fill="#54677d"/><path d="M872.2 577.3L872.7 563.9L882.8 562.9L882.2 576.2Z" fill="#527aa4"/><path d="M720.8 642.2L727.3 641L737.3 640L730.8 641.1Z" fill="#1a1d20"/><path d="M860.4 590.9L862.2 578.4L872.2 577.3L870.4 589.8Z" fill="#52769c"/><path d="M1065.8 592.6L1068 579.5L1073.4 583.5L1071.2 596.5Z" fill="#465e78"/><path d="M1135.6 516.9L1147.9 514.4L1153.3 518.4L1141.1 520.8Z" fill="#3a546f"/><path d="M697.3 484.3L690.8 485.4L700.8 484.3L707.3 483.2Z" fill="#12171c"/><path d="M747.3 638.9L753.4 635.4L763.4 634.3L757.3 637.8Z" fill="#414952"/><path d="M823.7 615.2L827.6 605.4L837.6 604.4L833.7 614.1Z" fill="#546c87"/><path d="M1082.7 636.7L1078.6 625.5L1084 629.5L1088.1 640.7Z" fill="#556373"/><path d="M828.9 502.2L823.4 492.3L833.4 491.3L838.9 501.1Z" fill="#527ca8"/><path d="M1106.6 524.3L1118.1 517.6L1123.5 521.5L1112 528.2Z" fill="#46698e"/><path d="M870.4 536.3L867.5 522.9L877.6 521.8L880.4 535.2Z" fill="#527ca8"/><path d="M773.4 633.2L778.9 627.4L788.9 626.3L783.4 632.1Z" fill="#55616e"/><path d="M724 483.4L717.3 482.1L727.3 481L734 482.3Z" fill="#1f2a35"/><path d="M799 625.2L803.7 617.4L813.7 616.3L809 624.2Z" fill="#54677b"/><path d="M872.7 563.9L872.2 550.1L882.2 549.1L882.8 562.9Z" fill="#527ca8"/><path d="M872.2 550.1L870.4 536.3L880.4 535.2L882.2 549.1Z" fill="#527ca8"/><path d="M1094.2 650.6L1088.1 640.7L1093.5 644.6L1099.6 654.5Z" fill="#434b54"/><path d="M803.3 494.5L797.3 486.5L807.3 485.4L813.4 493.4Z" fill="#496f97"/><path d="M1153.3 518.4L1165.4 518.2L1170.8 522.1L1158.8 522.3Z" fill="#31465c"/><path d="M750.7 484.9L744 481.2L754 480.2L760.7 483.8Z" fill="#2e4155"/><path d="M843.7 512.5L838.9 501.1L848.9 500L853.7 511.4Z" fill="#527ca8"/><path d="M857.5 524L853.7 511.4L863.7 510.3L867.5 522.9Z" fill="#527ca8"/><path d="M777.2 488.7L770.7 482.7L780.8 481.7L787.2 487.6Z" fill="#3d5977"/><path d="M1068 579.5L1072.3 566.7L1077.7 570.6L1073.4 583.5Z" fill="#4b6887"/><path d="M837.6 604.4L840.4 593.1L850.4 592L847.6 603.3Z" fill="#537192"/><path d="M1107.4 662.8L1099.6 654.5L1105 658.4L1112.9 666.7Z" fill="#292e34"/><path d="M1095.9 532.8L1106.6 524.3L1112 528.2L1101.3 536.7Z" fill="#4b7097"/><path d="M1071.1 609.4L1071.2 596.5L1076.6 600.5L1076.5 613.3Z" fill="#546c86"/><path d="M862.2 578.4L862.7 565L872.7 563.9L872.2 577.3Z" fill="#527aa4"/><path d="M710.8 643.3L717.3 642.1L727.3 641L720.8 642.2Z" fill="#1a1d20"/><path d="M1170.8 522.1L1182.3 524.2L1187.8 528.2L1176.3 526.1Z" fill="#283747"/><path d="M850.4 592L852.1 579.5L862.2 578.4L860.4 590.9Z" fill="#52769c"/><path d="M1122.2 673.1L1112.9 666.7L1118.3 670.6L1127.6 677Z" fill="#121517"/><path d="M687.3 485.4L680.8 486.5L690.8 485.4L697.3 484.3Z" fill="#12171c"/><path d="M1123.5 521.5L1135.6 516.9L1141.1 520.8L1129 525.4Z" fill="#416080"/><path d="M1072.3 566.7L1078.5 554.3L1083.9 558.3L1077.7 570.6Z" fill="#4d6f92"/><path d="M737.3 640L743.4 636.4L753.4 635.4L747.3 638.9Z" fill="#414952"/><path d="M1086.4 542.9L1095.9 532.8L1101.3 536.7L1091.8 546.8Z" fill="#4d739a"/><path d="M813.7 616.3L817.6 606.5L827.6 605.4L823.7 615.2Z" fill="#546c87"/><path d="M1187.8 528.2L1198.3 532.5L1203.8 536.4L1193.2 532.1Z" fill="#1e2832"/><path d="M818.9 503.3L813.4 493.4L823.4 492.3L828.9 502.2Z" fill="#527ca8"/><path d="M860.4 537.4L857.5 524L867.5 522.9L870.4 536.3Z" fill="#527ca8"/><path d="M1078.5 554.3L1086.4 542.9L1091.8 546.8L1083.9 558.3Z" fill="#4e7299"/><path d="M763.4 634.3L768.9 628.5L778.9 627.4L773.4 633.2Z" fill="#55616e"/><path d="M714 484.5L707.3 483.2L717.3 482.1L724 483.4Z" fill="#1f2a35"/><path d="M788.9 626.3L793.7 618.4L803.7 617.4L799 625.2Z" fill="#54677b"/><path d="M862.7 565L862.1 551.2L872.2 550.1L872.7 563.9Z" fill="#527ca8"/><path d="M1203.8 536.4L1213.1 542.8L1218.5 546.7L1209.2 540.3Z" fill="#14191e"/><path d="M1078.6 625.5L1076.5 613.3L1082 617.2L1084 629.5Z" fill="#54677d"/><path d="M862.1 551.2L860.4 537.4L870.4 536.3L872.2 550.1Z" fill="#527ca8"/><path d="M793.3 495.6L787.2 487.6L797.3 486.5L803.3 494.5Z" fill="#496f97"/><path d="M740.7 486L734 482.3L744 481.2L750.7 484.9Z" fill="#2e4155"/><path d="M833.6 513.6L828.9 502.2L838.9 501.1L843.7 512.5Z" fill="#527ca8"/><path d="M847.5 525.1L843.7 512.5L853.7 511.4L857.5 524Z" fill="#527ca8"/><path d="M767.2 489.7L760.7 483.8L770.7 482.7L777.2 488.7Z" fill="#3d5977"/><path d="M1071.2 596.5L1073.4 583.5L1078.8 587.4L1076.6 600.5Z" fill="#465e78"/><path d="M827.6 605.4L830.4 594.1L840.4 593.1L837.6 604.4Z" fill="#537192"/><path d="M1141.1 520.8L1153.3 518.4L1158.8 522.3L1146.5 524.7Z" fill="#3a546f"/><path d="M852.1 579.5L852.7 566.1L862.7 565L862.2 578.4Z" fill="#527aa4"/><path d="M700.8 644.3L707.3 643.2L717.3 642.1L710.8 643.3Z" fill="#1a1d20"/><path d="M1088.1 640.7L1084 629.5L1089.4 633.4L1093.5 644.6Z" fill="#556373"/><path d="M1112 528.2L1123.5 521.5L1129 525.4L1117.4 532.1Z" fill="#46698e"/><path d="M840.4 593.1L842.1 580.5L852.1 579.5L850.4 592Z" fill="#52769c"/><path d="M677.2 486.4L670.8 487.6L680.8 486.5L687.3 485.4Z" fill="#12171c"/><path d="M727.3 641L733.4 637.5L743.4 636.4L737.3 640Z" fill="#414952"/><path d="M803.7 617.4L807.5 607.6L817.6 606.5L813.7 616.3Z" fill="#546c87"/><path d="M808.9 504.3L803.3 494.5L813.4 493.4L818.9 503.3Z" fill="#527ca8"/><path d="M850.4 538.5L847.5 525.1L857.5 524L860.4 537.4Z" fill="#527ca8"/><path d="M1099.6 654.5L1093.5 644.6L1099 648.6L1105 658.4Z" fill="#434b54"/><path d="M1158.8 522.3L1170.8 522.1L1176.3 526.1L1164.2 526.2Z" fill="#31465c"/><path d="M753.4 635.4L758.9 629.6L768.9 628.5L763.4 634.3Z" fill="#55616e"/><path d="M704 485.6L697.3 484.3L707.3 483.2L714 484.5Z" fill="#1f2a35"/><path d="M778.9 627.4L783.7 619.5L793.7 618.4L788.9 626.3Z" fill="#54677b"/><path d="M852.7 566.1L852.1 552.3L862.1 551.2L862.7 565Z" fill="#527ca8"/><path d="M1073.4 583.5L1077.7 570.6L1083.1 574.5L1078.8 587.4Z" fill="#4b6887"/><path d="M1112.9 666.7L1105 658.4L1110.5 662.4L1118.3 670.6Z" fill="#292e34"/><path d="M852.1 552.3L850.4 538.5L860.4 537.4L862.1 551.2Z" fill="#527ca8"/><path d="M1101.3 536.7L1112 528.2L1117.4 532.1L1106.7 540.7Z" fill="#4b7097"/><path d="M783.3 496.7L777.2 488.7L787.2 487.6L793.3 495.6Z" fill="#496f97"/><path d="M1076.5 613.3L1076.6 600.5L1082 604.4L1082 617.2Z" fill="#546c86"/><path d="M730.7 487L724 483.4L734 482.3L740.7 486Z" fill="#2e4155"/><path d="M823.6 514.7L818.9 503.3L828.9 502.2L833.6 513.6Z" fill="#527ca8"/><path d="M837.5 526.2L833.6 513.6L843.7 512.5L847.5 525.1Z" fill="#527ca8"/><path d="M1176.3 526.1L1187.8 528.2L1193.2 532.1L1181.7 530Z" fill="#283747"/><path d="M757.2 490.8L750.7 484.9L760.7 483.8L767.2 489.7Z" fill="#3d5977"/><path d="M1127.6 677L1118.3 670.6L1123.7 674.6L1133 681Z" fill="#121517"/><path d="M817.6 606.5L820.4 595.2L830.4 594.1L827.6 605.4Z" fill="#537192"/><path d="M1129 525.4L1141.1 520.8L1146.5 524.7L1134.4 529.4Z" fill="#416080"/><path d="M1077.7 570.6L1083.9 558.3L1089.3 562.2L1083.1 574.5Z" fill="#4d6f92"/><path d="M842.1 580.5L842.7 567.2L852.7 566.1L852.1 579.5Z" fill="#527aa4"/><path d="M1091.8 546.8L1101.3 536.7L1106.7 540.7L1097.3 550.8Z" fill="#4d739a"/><path d="M690.8 645.4L697.3 644.3L707.3 643.2L700.8 644.3Z" fill="#1a1d20"/><path d="M1193.2 532.1L1203.8 536.4L1209.2 540.3L1198.6 536Z" fill="#1e2832"/><path d="M830.4 594.1L832.1 581.6L842.1 580.5L840.4 593.1Z" fill="#52769c"/><path d="M1083.9 558.3L1091.8 546.8L1097.3 550.8L1089.3 562.2Z" fill="#4e7299"/><path d="M667.2 487.5L660.7 488.7L670.8 487.6L677.2 486.4Z" fill="#12171c"/><path d="M1209.2 540.3L1218.5 546.7L1224 550.6L1214.6 544.3Z" fill="#14191e"/><path d="M717.3 642.1L723.4 638.6L733.4 637.5L727.3 641Z" fill="#414952"/><path d="M1084 629.5L1082 617.2L1087.4 621.2L1089.4 633.4Z" fill="#54677d"/><path d="M793.7 618.4L797.5 608.7L807.5 607.6L803.7 617.4Z" fill="#546c87"/><path d="M798.8 505.4L793.3 495.6L803.3 494.5L808.9 504.3Z" fill="#527ca8"/><path d="M840.4 539.6L837.5 526.2L847.5 525.1L850.4 538.5Z" fill="#527ca8"/><path d="M743.4 636.4L748.9 630.6L758.9 629.6L753.4 635.4Z" fill="#55616e"/><path d="M693.9 486.6L687.3 485.4L697.3 484.3L704 485.6Z" fill="#1f2a35"/><path d="M768.9 628.5L773.7 620.6L783.7 619.5L778.9 627.4Z" fill="#54677b"/><path d="M842.7 567.2L842.1 553.4L852.1 552.3L852.7 566.1Z" fill="#527ca8"/><path d="M1076.6 600.5L1078.8 587.4L1084.3 591.4L1082 604.4Z" fill="#465e78"/><path d="M1146.5 524.7L1158.8 522.3L1164.2 526.2L1151.9 528.7Z" fill="#3a546f"/><path d="M842.1 553.4L840.4 539.6L850.4 538.5L852.1 552.3Z" fill="#527ca8"/><path d="M773.3 497.7L767.2 489.7L777.2 488.7L783.3 496.7Z" fill="#496f97"/><path d="M720.7 488.1L714 484.5L724 483.4L730.7 487Z" fill="#2e4155"/><path d="M813.6 515.7L808.9 504.3L818.9 503.3L823.6 514.7Z" fill="#527ca8"/><path d="M827.5 527.2L823.6 514.7L833.6 513.6L837.5 526.2Z" fill="#527ca8"/><path d="M1093.5 644.6L1089.4 633.4L1094.8 637.3L1099 648.6Z" fill="#556373"/><path d="M747.2 491.9L740.7 486L750.7 484.9L757.2 490.8Z" fill="#3d5977"/><path d="M1117.4 532.1L1129 525.4L1134.4 529.4L1122.8 536.1Z" fill="#46698e"/><path d="M807.5 607.6L810.4 596.3L820.4 595.2L817.6 606.5Z" fill="#537192"/><path d="M832.1 581.6L832.7 568.2L842.7 567.2L842.1 580.5Z" fill="#527aa4"/><path d="M680.8 646.5L687.2 645.3L697.3 644.3L690.8 645.4Z" fill="#1a1d20"/><path d="M1105 658.4L1099 648.6L1104.4 652.5L1110.5 662.4Z" fill="#434b54"/><path d="M820.4 595.2L822.1 582.7L832.1 581.6L830.4 594.1Z" fill="#52769c"/><path d="M1164.2 526.2L1176.3 526.1L1181.7 530L1169.6 530.2Z" fill="#31465c"/><path d="M657.2 488.6L650.7 489.7L660.7 488.7L667.2 487.5Z" fill="#12171c"/><path d="M1078.8 587.4L1083.1 574.5L1088.5 578.5L1084.3 591.4Z" fill="#4b6887"/><path d="M707.3 643.2L713.3 639.7L723.4 638.6L717.3 642.1Z" fill="#414952"/><path d="M783.7 619.5L787.5 609.8L797.5 608.7L793.7 618.4Z" fill="#546c87"/><path d="M788.8 506.5L783.3 496.7L793.3 495.6L798.8 505.4Z" fill="#527ca8"/><path d="M1118.3 670.6L1110.5 662.4L1115.9 666.3L1123.7 674.6Z" fill="#292e34"/><path d="M830.3 540.6L827.5 527.2L837.5 526.2L840.4 539.6Z" fill="#527ca8"/><path d="M1106.7 540.7L1117.4 532.1L1122.8 536.1L1112.2 544.6Z" fill="#4b7097"/><path d="M1082 617.2L1082 604.4L1087.5 608.3L1087.4 621.2Z" fill="#546c86"/><path d="M733.4 637.5L738.9 631.7L748.9 630.6L743.4 636.4Z" fill="#55616e"/><path d="M683.9 487.7L677.2 486.4L687.3 485.4L693.9 486.6Z" fill="#1f2a35"/><path d="M1181.7 530L1193.2 532.1L1198.6 536L1187.1 533.9Z" fill="#283747"/><path d="M758.9 629.6L763.6 621.7L773.7 620.6L768.9 628.5Z" fill="#54677b"/><path d="M832.7 568.2L832.1 554.4L842.1 553.4L842.7 567.2Z" fill="#527ca8"/><path d="M1133 681L1123.7 674.6L1129.1 678.5L1138.5 684.9Z" fill="#121517"/><path d="M832.1 554.4L830.3 540.6L840.4 539.6L842.1 553.4Z" fill="#527ca8"/><path d="M1134.4 529.4L1146.5 524.7L1151.9 528.7L1139.8 533.3Z" fill="#416080"/><path d="M1083.1 574.5L1089.3 562.2L1094.7 566.1L1088.5 578.5Z" fill="#4d6f92"/><path d="M763.3 498.8L757.2 490.8L767.2 489.7L773.3 497.7Z" fill="#496f97"/><path d="M710.7 489.2L704 485.6L714 484.5L720.7 488.1Z" fill="#2e4155"/><path d="M803.6 516.8L798.8 505.4L808.9 504.3L813.6 515.7Z" fill="#527ca8"/><path d="M817.5 528.3L813.6 515.7L823.6 514.7L827.5 527.2Z" fill="#527ca8"/><path d="M1097.3 550.8L1106.7 540.7L1112.2 544.6L1102.7 554.7Z" fill="#4d739a"/><path d="M1198.6 536L1209.2 540.3L1214.6 544.3L1204 540Z" fill="#1e2832"/><path d="M737.2 493L730.7 487L740.7 486L747.2 491.9Z" fill="#3d5977"/><path d="M1089.3 562.2L1097.3 550.8L1102.7 554.7L1094.7 566.1Z" fill="#4e7299"/><path d="M797.5 608.7L800.4 597.4L810.4 596.3L807.5 607.6Z" fill="#537192"/><path d="M1214.6 544.3L1224 550.6L1229.4 554.6L1220 548.2Z" fill="#14191e"/><path d="M822.1 582.7L822.7 569.3L832.7 568.2L832.1 581.6Z" fill="#527aa4"/><path d="M1089.4 633.4L1087.4 621.2L1092.8 625.1L1094.8 637.3Z" fill="#54677d"/><path d="M670.7 647.6L677.2 646.4L687.2 645.3L680.8 646.5Z" fill="#1a1d20"/><path d="M810.4 596.3L812.1 583.8L822.1 582.7L820.4 595.2Z" fill="#52769c"/><path d="M647.2 489.7L640.7 490.8L650.7 489.7L657.2 488.6Z" fill="#12171c"/><path d="M697.3 644.3L703.3 640.7L713.3 639.7L707.3 643.2Z" fill="#414952"/><path d="M1082 604.4L1084.3 591.4L1089.7 595.3L1087.5 608.3Z" fill="#465e78"/><path d="M773.7 620.6L777.5 610.8L787.5 609.8L783.7 619.5Z" fill="#546c87"/><path d="M778.8 507.6L773.3 497.7L783.3 496.7L788.8 506.5Z" fill="#527ca8"/><path d="M1151.9 528.7L1164.2 526.2L1169.6 530.2L1157.3 532.6Z" fill="#3a546f"/><path d="M820.3 541.7L817.5 528.3L827.5 527.2L830.3 540.6Z" fill="#527ca8"/><path d="M723.4 638.6L728.9 632.8L738.9 631.7L733.4 637.5Z" fill="#55616e"/><path d="M673.9 488.8L667.2 487.5L677.2 486.4L683.9 487.7Z" fill="#1f2a35"/><path d="M1099 648.6L1094.8 637.3L1100.3 641.3L1104.4 652.5Z" fill="#556373"/><path d="M748.9 630.6L753.6 622.7L763.6 621.7L758.9 629.6Z" fill="#54677b"/><path d="M1122.8 536.1L1134.4 529.4L1139.8 533.3L1128.2 540Z" fill="#46698e"/><path d="M822.7 569.3L822.1 555.5L832.1 554.4L832.7 568.2Z" fill="#527ca8"/><path d="M822.1 555.5L820.3 541.7L830.3 540.6L832.1 554.4Z" fill="#527ca8"/><path d="M753.3 499.9L747.2 491.9L757.2 490.8L763.3 498.8Z" fill="#496f97"/><path d="M700.6 490.3L693.9 486.6L704 485.6L710.7 489.2Z" fill="#2e4155"/><path d="M793.6 517.9L788.8 506.5L798.8 505.4L803.6 516.8Z" fill="#527ca8"/><path d="M807.5 529.4L803.6 516.8L813.6 515.7L817.5 528.3Z" fill="#527ca8"/><path d="M727.2 494L720.7 488.1L730.7 487L737.2 493Z" fill="#3d5977"/><path d="M1110.5 662.4L1104.4 652.5L1109.8 656.4L1115.9 666.3Z" fill="#434b54"/><path d="M1169.6 530.2L1181.7 530L1187.1 533.9L1175 534.1Z" fill="#31465c"/><path d="M787.5 609.8L790.3 598.5L800.4 597.4L797.5 608.7Z" fill="#537192"/><path d="M1084.3 591.4L1088.5 578.5L1094 582.4L1089.7 595.3Z" fill="#4b6887"/><path d="M812.1 583.8L812.7 570.4L822.7 569.3L822.1 582.7Z" fill="#527aa4"/><path d="M660.7 648.6L667.2 647.5L677.2 646.4L670.7 647.6Z" fill="#1a1d20"/><path d="M1123.7 674.6L1115.9 666.3L1121.3 670.3L1129.1 678.5Z" fill="#292e34"/><path d="M1112.2 544.6L1122.8 536.1L1128.2 540L1117.6 548.5Z" fill="#4b7097"/><path d="M800.4 597.4L802.1 584.8L812.1 583.8L810.4 596.3Z" fill="#52769c"/><path d="M1087.4 621.2L1087.5 608.3L1092.9 612.3L1092.8 625.1Z" fill="#546c86"/><path d="M1187.1 533.9L1198.6 536L1204 540L1192.5 537.9Z" fill="#283747"/><path d="M637.2 490.7L630.7 491.9L640.7 490.8L647.2 489.7Z" fill="#12171c"/><path d="M1138.5 684.9L1129.1 678.5L1134.5 682.4L1143.9 688.8Z" fill="#121517"/><path d="M687.2 645.3L693.3 641.8L703.3 640.7L697.3 644.3Z" fill="#414952"/><path d="M763.6 621.7L767.5 611.9L777.5 610.8L773.7 620.6Z" fill="#546c87"/><path d="M768.8 508.7L763.3 498.8L773.3 497.7L778.8 507.6Z" fill="#527ca8"/><path d="M810.3 542.8L807.5 529.4L817.5 528.3L820.3 541.7Z" fill="#527ca8"/><path d="M1139.8 533.3L1151.9 528.7L1157.3 532.6L1145.2 537.3Z" fill="#416080"/><path d="M1088.5 578.5L1094.7 566.1L1100.2 570.1L1094 582.4Z" fill="#4d6f92"/><path d="M1102.7 554.7L1112.2 544.6L1117.6 548.5L1108.1 558.7Z" fill="#4d739a"/><path d="M713.3 639.7L718.8 633.9L728.9 632.8L723.4 638.6Z" fill="#55616e"/><path d="M1204 540L1214.6 544.3L1220 548.2L1209.5 543.9Z" fill="#1e2832"/><path d="M663.9 489.9L657.2 488.6L667.2 487.5L673.9 488.8Z" fill="#1f2a35"/><path d="M738.9 631.7L743.6 623.8L753.6 622.7L748.9 630.6Z" fill="#54677b"/><path d="M812.7 570.4L812.1 556.6L822.1 555.5L822.7 569.3Z" fill="#527ca8"/><path d="M1094.7 566.1L1102.7 554.7L1108.1 558.7L1100.2 570.1Z" fill="#4e7299"/><path d="M812.1 556.6L810.3 542.8L820.3 541.7L822.1 555.5Z" fill="#527ca8"/><path d="M743.3 501L737.2 493L747.2 491.9L753.3 499.9Z" fill="#496f97"/><path d="M690.6 491.4L683.9 487.7L693.9 486.6L700.6 490.3Z" fill="#2e4155"/><path d="M1220 548.2L1229.4 554.6L1234.8 558.5L1225.5 552.1Z" fill="#14191e"/><path d="M783.6 519L778.8 507.6L788.8 506.5L793.6 517.9Z" fill="#527ca8"/><path d="M797.5 530.5L793.6 517.9L803.6 516.8L807.5 529.4Z" fill="#527ca8"/><path d="M1094.8 637.3L1092.8 625.1L1098.2 629.1L1100.3 641.3Z" fill="#54677d"/><path d="M717.1 495.1L710.7 489.2L720.7 488.1L727.2 494Z" fill="#3d5977"/><path d="M777.5 610.8L780.3 599.5L790.3 598.5L787.5 609.8Z" fill="#537192"/><path d="M802.1 584.8L802.7 571.5L812.7 570.4L812.1 583.8Z" fill="#527aa4"/><path d="M1087.5 608.3L1089.7 595.3L1095.1 599.2L1092.9 612.3Z" fill="#465e78"/><path d="M650.7 649.7L657.2 648.6L667.2 647.5L660.7 648.6Z" fill="#1a1d20"/><path d="M1157.3 532.6L1169.6 530.2L1175 534.1L1162.8 536.6Z" fill="#3a546f"/><path d="M790.3 598.5L792.1 585.9L802.1 584.8L800.4 597.4Z" fill="#52769c"/><path d="M1104.4 652.5L1100.3 641.3L1105.7 645.2L1109.8 656.4Z" fill="#556373"/><path d="M627.2 491.8L620.7 493L630.7 491.9L637.2 490.7Z" fill="#12171c"/><path d="M1128.2 540L1139.8 533.3L1145.2 537.3L1133.7 543.9Z" fill="#46698e"/><path d="M677.2 646.4L683.3 642.9L693.3 641.8L687.2 645.3Z" fill="#414952"/><path d="M753.6 622.7L757.5 613L767.5 611.9L763.6 621.7Z" fill="#546c87"/><path d="M758.8 509.7L753.3 499.9L763.3 498.8L768.8 508.7Z" fill="#527ca8"/><path d="M800.3 543.9L797.5 530.5L807.5 529.4L810.3 542.8Z" fill="#527ca8"/><path d="M703.3 640.7L708.8 635L718.8 633.9L713.3 639.7Z" fill="#55616e"/><path d="M653.9 490.9L647.2 489.7L657.2 488.6L663.9 489.9Z" fill="#1f2a35"/><path d="M728.9 632.8L733.6 624.9L743.6 623.8L738.9 631.7Z" fill="#54677b"/><path d="M802.7 571.5L802.1 557.7L812.1 556.6L812.7 570.4Z" fill="#527ca8"/><path d="M1115.9 666.3L1109.8 656.4L1115.2 660.4L1121.3 670.3Z" fill="#434b54"/><path d="M1175 534.1L1187.1 533.9L1192.5 537.9L1180.5 538Z" fill="#31465c"/><path d="M802.1 557.7L800.3 543.9L810.3 542.8L812.1 556.6Z" fill="#527ca8"/><path d="M733.3 502L727.2 494L737.2 493L743.3 501Z" fill="#496f97"/><path d="M1089.7 595.3L1094 582.4L1099.4 586.3L1095.1 599.2Z" fill="#4b6887"/><path d="M680.6 492.4L673.9 488.8L683.9 487.7L690.6 491.4Z" fill="#2e4155"/><path d="M773.6 520L768.8 508.7L778.8 507.6L783.6 519Z" fill="#527ca8"/><path d="M787.4 531.5L783.6 519L793.6 517.9L797.5 530.5Z" fill="#527ca8"/><path d="M707.1 496.2L700.6 490.3L710.7 489.2L717.1 495.1Z" fill="#3d5977"/><path d="M1129.1 678.5L1121.3 670.3L1126.7 674.2L1134.5 682.4Z" fill="#292e34"/><path d="M1117.6 548.5L1128.2 540L1133.7 543.9L1123 552.5Z" fill="#4b7097"/><path d="M1092.8 625.1L1092.9 612.3L1098.3 616.2L1098.2 629.1Z" fill="#546c86"/><path d="M767.5 611.9L770.3 600.6L780.3 599.5L777.5 610.8Z" fill="#537192"/><path d="M1192.5 537.9L1204 540L1209.5 543.9L1198 541.8Z" fill="#283747"/><path d="M792.1 585.9L792.6 572.6L802.7 571.5L802.1 584.8Z" fill="#527aa4"/><path d="M1143.9 688.8L1134.5 682.4L1140 686.4L1149.3 692.8Z" fill="#121517"/><path d="M640.7 650.8L647.2 649.7L657.2 648.6L650.7 649.7Z" fill="#1a1d20"/><path d="M1145.2 537.3L1157.3 532.6L1162.8 536.6L1150.7 541.2Z" fill="#416080"/><path d="M1094 582.4L1100.2 570.1L1105.6 574L1099.4 586.3Z" fill="#4d6f92"/><path d="M780.3 599.5L782.1 587L792.1 585.9L790.3 598.5Z" fill="#52769c"/><path d="M1108.1 558.7L1117.6 548.5L1123 552.5L1113.5 562.6Z" fill="#4d739a"/><path d="M1209.5 543.9L1220 548.2L1225.5 552.1L1214.9 547.8Z" fill="#1e2832"/><path d="M617.2 492.9L610.7 494L620.7 493L627.2 491.8Z" fill="#12171c"/><path d="M1100.2 570.1L1108.1 558.7L1113.5 562.6L1105.6 574Z" fill="#4e7299"/><path d="M667.2 647.5L673.3 644L683.3 642.9L677.2 646.4Z" fill="#414952"/><path d="M743.6 623.8L747.5 614.1L757.5 613L753.6 622.7Z" fill="#546c87"/><path d="M748.8 510.8L743.3 501L753.3 499.9L758.8 509.7Z" fill="#527ca8"/><path d="M790.3 545L787.4 531.5L797.5 530.5L800.3 543.9Z" fill="#527ca8"/><path d="M1225.5 552.1L1234.8 558.5L1240.2 562.4L1230.9 556.1Z" fill="#14191e"/><path d="M1100.3 641.3L1098.2 629.1L1103.7 633L1105.7 645.2Z" fill="#54677d"/><path d="M693.3 641.8L698.8 636L708.8 635L703.3 640.7Z" fill="#55616e"/><path d="M643.9 492L637.2 490.7L647.2 489.7L653.9 490.9Z" fill="#1f2a35"/><path d="M718.8 633.9L723.6 626L733.6 624.9L728.9 632.8Z" fill="#54677b"/><path d="M792.6 572.6L792 558.8L802.1 557.7L802.7 571.5Z" fill="#527ca8"/><path d="M792 558.8L790.3 545L800.3 543.9L802.1 557.7Z" fill="#527ca8"/><path d="M723.2 503.1L717.1 495.1L727.2 494L733.3 502Z" fill="#496f97"/><path d="M670.6 493.5L663.9 489.9L673.9 488.8L680.6 492.4Z" fill="#2e4155"/><path d="M763.6 521.1L758.8 509.7L768.8 508.7L773.6 520Z" fill="#527ca8"/><path d="M777.4 532.6L773.6 520L783.6 519L787.4 531.5Z" fill="#527ca8"/><path d="M1092.9 612.3L1095.1 599.2L1100.5 603.2L1098.3 616.2Z" fill="#465e78"/><path d="M1162.8 536.6L1175 534.1L1180.5 538L1168.2 540.5Z" fill="#3a546f"/><path d="M697.1 497.3L690.6 491.4L700.6 490.3L707.1 496.2Z" fill="#3d5977"/><path d="M757.5 613L760.3 601.7L770.3 600.6L767.5 611.9Z" fill="#537192"/><path d="M1109.8 656.4L1105.7 645.2L1111.1 649.1L1115.2 660.4Z" fill="#556373"/><path d="M1133.7 543.9L1145.2 537.3L1150.7 541.2L1139.1 547.9Z" fill="#46698e"/><path d="M782.1 587L782.6 573.6L792.6 572.6L792.1 585.9Z" fill="#527aa4"/><path d="M630.7 651.9L637.2 650.7L647.2 649.7L640.7 650.8Z" fill="#1a1d20"/><path d="M770.3 600.6L772 588.1L782.1 587L780.3 599.5Z" fill="#52769c"/><path d="M607.2 494L600.7 495.1L610.7 494L617.2 492.9Z" fill="#12171c"/><path d="M1121.3 670.3L1115.2 660.4L1120.7 664.3L1126.7 674.2Z" fill="#434b54"/><path d="M1180.5 538L1192.5 537.9L1198 541.8L1185.9 542Z" fill="#31465c"/><path d="M657.2 648.6L663.3 645.1L673.3 644L667.2 647.5Z" fill="#414952"/><path d="M733.6 624.9L737.4 615.2L747.5 614.1L743.6 623.8Z" fill="#546c87"/><path d="M738.8 511.9L733.3 502L743.3 501L748.8 510.8Z" fill="#527ca8"/><path d="M780.3 546L777.4 532.6L787.4 531.5L790.3 545Z" fill="#527ca8"/><path d="M1095.1 599.2L1099.4 586.3L1104.8 590.3L1100.5 603.2Z" fill="#4b6887"/><path d="M683.3 642.9L688.8 637.1L698.8 636L693.3 641.8Z" fill="#55616e"/><path d="M633.9 493.1L627.2 491.8L637.2 490.7L643.9 492Z" fill="#1f2a35"/><path d="M708.8 635L713.6 627.1L723.6 626L718.8 633.9Z" fill="#54677b"/><path d="M1134.5 682.4L1126.7 674.2L1132.1 678.1L1140 686.4Z" fill="#292e34"/><path d="M782.6 573.6L782 559.8L792 558.8L792.6 572.6Z" fill="#527ca8"/><path d="M1123 552.5L1133.7 543.9L1139.1 547.9L1128.4 556.4Z" fill="#4b7097"/><path d="M1098.2 629.1L1098.3 616.2L1103.7 620.2L1103.7 633Z" fill="#546c86"/><path d="M1198 541.8L1209.5 543.9L1214.9 547.8L1203.4 545.7Z" fill="#283747"/><path d="M782 559.8L780.3 546L790.3 545L792 558.8Z" fill="#527ca8"/><path d="M713.2 504.2L707.1 496.2L717.1 495.1L723.2 503.1Z" fill="#496f97"/><path d="M660.6 494.6L653.9 490.9L663.9 489.9L670.6 493.5Z" fill="#2e4155"/><path d="M753.5 522.2L748.8 510.8L758.8 509.7L763.6 521.1Z" fill="#527ca8"/><path d="M1149.3 692.8L1140 686.4L1145.4 690.3L1154.7 696.7Z" fill="#121517"/><path d="M767.4 533.7L763.6 521.1L773.6 520L777.4 532.6Z" fill="#527ca8"/><path d="M687.1 498.4L680.6 492.4L690.6 491.4L697.1 497.3Z" fill="#3d5977"/><path d="M1150.7 541.2L1162.8 536.6L1168.2 540.5L1156.1 545.1Z" fill="#416080"/><path d="M1099.4 586.3L1105.6 574L1111 577.9L1104.8 590.3Z" fill="#4d6f92"/><path d="M747.5 614.1L750.3 602.8L760.3 601.7L757.5 613Z" fill="#537192"/><path d="M1113.5 562.6L1123 552.5L1128.4 556.4L1119 566.5Z" fill="#4d739a"/><path d="M1214.9 547.8L1225.5 552.1L1230.9 556.1L1220.3 551.8Z" fill="#1e2832"/><path d="M1105.6 574L1113.5 562.6L1119 566.5L1111 577.9Z" fill="#4e7299"/><path d="M772 588.1L772.6 574.7L782.6 573.6L782.1 587Z" fill="#527aa4"/><path d="M620.7 653L627.2 651.8L637.2 650.7L630.7 651.9Z" fill="#1a1d20"/><path d="M760.3 601.7L762 589.2L772 588.1L770.3 600.6Z" fill="#52769c"/><path d="M1230.9 556.1L1240.2 562.4L1245.7 566.4L1236.3 560Z" fill="#14191e"/><path d="M1105.7 645.2L1103.7 633L1109.1 636.9L1111.1 649.1Z" fill="#54677d"/><path d="M597.1 495.1L590.7 496.2L600.7 495.1L607.2 494Z" fill="#12171c"/><path d="M647.2 649.7L653.3 646.1L663.3 645.1L657.2 648.6Z" fill="#414952"/><path d="M723.6 626L727.4 616.2L737.4 615.2L733.6 624.9Z" fill="#546c87"/><path d="M728.8 513L723.2 503.1L733.3 502L738.8 511.9Z" fill="#527ca8"/><path d="M770.3 547.1L767.4 533.7L777.4 532.6L780.3 546Z" fill="#527ca8"/><path d="M1098.3 616.2L1100.5 603.2L1106 607.1L1103.7 620.2Z" fill="#465e78"/><path d="M673.3 644L678.8 638.2L688.8 637.1L683.3 642.9Z" fill="#55616e"/><path d="M623.9 494.2L617.2 492.9L627.2 491.8L633.9 493.1Z" fill="#1f2a35"/><path d="M1168.2 540.5L1180.5 538L1185.9 542L1173.6 544.4Z" fill="#3a546f"/><path d="M698.8 636L703.6 628.1L713.6 627.1L708.8 635Z" fill="#54677b"/><path d="M772.6 574.7L772 560.9L782 559.8L782.6 573.6Z" fill="#527ca8"/><path d="M1115.2 660.4L1111.1 649.1L1116.5 653.1L1120.7 664.3Z" fill="#556373"/><path d="M772 560.9L770.3 547.1L780.3 546L782 559.8Z" fill="#527ca8"/><path d="M1139.1 547.9L1150.7 541.2L1156.1 545.1L1144.5 551.8Z" fill="#46698e"/><path d="M703.2 505.3L697.1 497.3L707.1 496.2L713.2 504.2Z" fill="#496f97"/><path d="M650.6 495.7L643.9 492L653.9 490.9L660.6 494.6Z" fill="#2e4155"/><path d="M743.5 523.3L738.8 511.9L748.8 510.8L753.5 522.2Z" fill="#527ca8"/><path d="M757.4 534.8L753.5 522.2L763.6 521.1L767.4 533.7Z" fill="#527ca8"/><path d="M677.1 499.4L670.6 493.5L680.6 492.4L687.1 498.4Z" fill="#3d5977"/><path d="M737.4 615.2L740.3 603.8L750.3 602.8L747.5 614.1Z" fill="#537192"/><path d="M1126.7 674.2L1120.7 664.3L1126.1 668.2L1132.1 678.1Z" fill="#434b54"/><path d="M1185.9 542L1198 541.8L1203.4 545.7L1191.3 545.9Z" fill="#31465c"/><path d="M762 589.2L762.6 575.8L772.6 574.7L772 588.1Z" fill="#527aa4"/><path d="M610.7 654L617.1 652.9L627.2 651.8L620.7 653Z" fill="#1a1d20"/><path d="M750.3 602.8L752 590.2L762 589.2L760.3 601.7Z" fill="#52769c"/><path d="M1100.5 603.2L1104.8 590.3L1110.2 594.2L1106 607.1Z" fill="#4b6887"/><path d="M587.1 496.1L580.6 497.3L590.7 496.2L597.1 495.1Z" fill="#12171c"/><path d="M1140 686.4L1132.1 678.1L1137.6 682.1L1145.4 690.3Z" fill="#292e34"/><path d="M1128.4 556.4L1139.1 547.9L1144.5 551.8L1133.9 560.3Z" fill="#4b7097"/><path d="M1103.7 633L1103.7 620.2L1109.2 624.1L1109.1 636.9Z" fill="#546c86"/><path d="M637.2 650.7L643.3 647.2L653.3 646.1L647.2 649.7Z" fill="#414952"/><path d="M713.6 627.1L717.4 617.3L727.4 616.2L723.6 626Z" fill="#546c87"/><path d="M718.7 514L713.2 504.2L723.2 503.1L728.8 513Z" fill="#527ca8"/><path d="M1203.4 545.7L1214.9 547.8L1220.3 551.8L1208.8 549.7Z" fill="#283747"/><path d="M760.3 548.2L757.4 534.8L767.4 533.7L770.3 547.1Z" fill="#527ca8"/><path d="M1154.7 696.7L1145.4 690.3L1150.8 694.3L1160.2 700.6Z" fill="#121517"/><path d="M663.3 645.1L668.8 639.3L678.8 638.2L673.3 644Z" fill="#55616e"/><path d="M613.8 495.3L607.2 494L617.2 492.9L623.9 494.2Z" fill="#1f2a35"/><path d="M688.8 637.1L693.5 629.2L703.6 628.1L698.8 636Z" fill="#54677b"/><path d="M762.6 575.8L762 562L772 560.9L772.6 574.7Z" fill="#527ca8"/><path d="M1156.1 545.1L1168.2 540.5L1173.6 544.4L1161.5 549.1Z" fill="#416080"/><path d="M1104.8 590.3L1111 577.9L1116.4 581.9L1110.2 594.2Z" fill="#4d6f92"/><path d="M1119 566.5L1128.4 556.4L1133.9 560.3L1124.4 570.5Z" fill="#4d739a"/><path d="M1220.3 551.8L1230.9 556.1L1236.3 560L1225.7 555.7Z" fill="#1e2832"/><path d="M762 562L760.3 548.2L770.3 547.1L772 560.9Z" fill="#527ca8"/><path d="M693.2 506.4L687.1 498.4L697.1 497.3L703.2 505.3Z" fill="#496f97"/><path d="M640.6 496.8L633.9 493.1L643.9 492L650.6 495.7Z" fill="#2e4155"/><path d="M733.5 524.4L728.8 513L738.8 511.9L743.5 523.3Z" fill="#527ca8"/><path d="M1111 577.9L1119 566.5L1124.4 570.5L1116.4 581.9Z" fill="#4e7299"/><path d="M747.4 535.9L743.5 523.3L753.5 522.2L757.4 534.8Z" fill="#527ca8"/><path d="M667.1 500.5L660.6 494.6L670.6 493.5L677.1 499.4Z" fill="#3d5977"/><path d="M1236.3 560L1245.7 566.4L1251.1 570.3L1241.7 563.9Z" fill="#14191e"/><path d="M727.4 616.2L730.3 604.9L740.3 603.8L737.4 615.2Z" fill="#537192"/><path d="M1111.1 649.1L1109.1 636.9L1114.5 640.9L1116.5 653.1Z" fill="#54677d"/><path d="M752 590.2L752.6 576.9L762.6 575.8L762 589.2Z" fill="#527aa4"/><path d="M600.6 655.1L607.1 654L617.1 652.9L610.7 654Z" fill="#1a1d20"/><path d="M740.3 603.8L742 591.3L752 590.2L750.3 602.8Z" fill="#52769c"/><path d="M1103.7 620.2L1106 607.1L1111.4 611L1109.2 624.1Z" fill="#465e78"/><path d="M1173.6 544.4L1185.9 542L1191.3 545.9L1179 548.4Z" fill="#3a546f"/><path d="M577.1 497.2L570.6 498.4L580.6 497.3L587.1 496.1Z" fill="#12171c"/><path d="M627.2 651.8L633.2 648.3L643.3 647.2L637.2 650.7Z" fill="#414952"/><path d="M703.6 628.1L707.4 618.4L717.4 617.3L713.6 627.1Z" fill="#546c87"/><path d="M708.7 515.1L703.2 505.3L713.2 504.2L718.7 514Z" fill="#527ca8"/><path d="M1120.7 664.3L1116.5 653.1L1122 657L1126.1 668.2Z" fill="#556373"/><path d="M1144.5 551.8L1156.1 545.1L1161.5 549.1L1149.9 555.7Z" fill="#46698e"/><path d="M750.2 549.3L747.4 535.9L757.4 534.8L760.3 548.2Z" fill="#527ca8"/><path d="M653.3 646.1L658.8 640.3L668.8 639.3L663.3 645.1Z" fill="#55616e"/><path d="M603.8 496.3L597.1 495.1L607.2 494L613.8 495.3Z" fill="#1f2a35"/><path d="M678.8 638.2L683.5 630.3L693.5 629.2L688.8 637.1Z" fill="#54677b"/><path d="M752.6 576.9L752 563.1L762 562L762.6 575.8Z" fill="#527ca8"/><path d="M752 563.1L750.2 549.3L760.3 548.2L762 562Z" fill="#527ca8"/><path d="M683.2 507.4L677.1 499.4L687.1 498.4L693.2 506.4Z" fill="#496f97"/><path d="M630.5 497.8L623.9 494.2L633.9 493.1L640.6 496.8Z" fill="#2e4155"/><path d="M1132.1 678.1L1126.1 668.2L1131.5 672.2L1137.6 682.1Z" fill="#434b54"/><path d="M723.5 525.4L718.7 514L728.8 513L733.5 524.4Z" fill="#527ca8"/><path d="M1191.3 545.9L1203.4 545.7L1208.8 549.7L1196.7 549.9Z" fill="#31465c"/><path d="M737.4 536.9L733.5 524.4L743.5 523.3L747.4 535.9Z" fill="#527ca8"/><path d="M657.1 501.6L650.6 495.7L660.6 494.6L667.1 500.5Z" fill="#3d5977"/><path d="M1106 607.1L1110.2 594.2L1115.7 598.1L1111.4 611Z" fill="#4b6887"/><path d="M717.4 617.3L720.2 606L730.3 604.9L727.4 616.2Z" fill="#537192"/><path d="M1145.4 690.3L1137.6 682.1L1143 686L1150.8 694.3Z" fill="#292e34"/><path d="M1133.9 560.3L1144.5 551.8L1149.9 555.7L1139.3 564.3Z" fill="#4b7097"/><path d="M1109.1 636.9L1109.2 624.1L1114.6 628L1114.5 640.9Z" fill="#546c86"/><path d="M742 591.3L742.6 577.9L752.6 576.9L752 590.2Z" fill="#527aa4"/><path d="M590.6 656.2L597.1 655L607.1 654L600.6 655.1Z" fill="#1a1d20"/><path d="M1208.8 549.7L1220.3 551.8L1225.7 555.7L1214.2 553.6Z" fill="#283747"/><path d="M730.3 604.9L732 592.4L742 591.3L740.3 603.8Z" fill="#52769c"/><path d="M1160.2 700.6L1150.8 694.3L1156.2 698.2L1165.6 704.6Z" fill="#121517"/><path d="M567.1 498.3L560.6 499.4L570.6 498.4L577.1 497.2Z" fill="#12171c"/><path d="M1161.5 549.1L1173.6 544.4L1179 548.4L1166.9 553Z" fill="#416080"/><path d="M1110.2 594.2L1116.4 581.9L1121.9 585.8L1115.7 598.1Z" fill="#4d6f92"/><path d="M617.1 652.9L623.2 649.4L633.2 648.3L627.2 651.8Z" fill="#414952"/><path d="M693.5 629.2L697.4 619.5L707.4 618.4L703.6 628.1Z" fill="#546c87"/><path d="M1124.4 570.5L1133.9 560.3L1139.3 564.3L1129.8 574.4Z" fill="#4d739a"/><path d="M698.7 516.2L693.2 506.4L703.2 505.3L708.7 515.1Z" fill="#527ca8"/><path d="M1225.7 555.7L1236.3 560L1241.7 563.9L1231.1 559.6Z" fill="#1e2832"/><path d="M740.2 550.3L737.4 536.9L747.4 535.9L750.2 549.3Z" fill="#527ca8"/><path d="M1116.4 581.9L1124.4 570.5L1129.8 574.4L1121.9 585.8Z" fill="#4e7299"/><path d="M643.3 647.2L648.8 641.4L658.8 640.3L653.3 646.1Z" fill="#55616e"/><path d="M593.8 497.4L587.1 496.1L597.1 495.1L603.8 496.3Z" fill="#1f2a35"/><path d="M668.8 639.3L673.5 631.4L683.5 630.3L678.8 638.2Z" fill="#54677b"/><path d="M742.6 577.9L742 564.1L752 563.1L752.6 576.9Z" fill="#527ca8"/><path d="M1241.7 563.9L1251.1 570.3L1256.5 574.2L1247.2 567.9Z" fill="#14191e"/><path d="M1116.5 653.1L1114.5 640.9L1119.9 644.8L1122 657Z" fill="#54677d"/><path d="M742 564.1L740.2 550.3L750.2 549.3L752 563.1Z" fill="#527ca8"/><path d="M673.2 508.5L667.1 500.5L677.1 499.4L683.2 507.4Z" fill="#496f97"/><path d="M620.5 498.9L613.8 495.3L623.9 494.2L630.5 497.8Z" fill="#2e4155"/><path d="M713.5 526.5L708.7 515.1L718.7 514L723.5 525.4Z" fill="#527ca8"/><path d="M727.4 538L723.5 525.4L733.5 524.4L737.4 536.9Z" fill="#527ca8"/><path d="M647.1 502.7L640.6 496.8L650.6 495.7L657.1 501.6Z" fill="#3d5977"/><path d="M707.4 618.4L710.2 607.1L720.2 606L717.4 617.3Z" fill="#537192"/><path d="M1109.2 624.1L1111.4 611L1116.8 615L1114.6 628Z" fill="#465e78"/><path d="M1179 548.4L1191.3 545.9L1196.7 549.9L1184.5 552.3Z" fill="#3a546f"/><path d="M732 592.4L732.6 579L742.6 577.9L742 591.3Z" fill="#527aa4"/><path d="M580.6 657.3L587.1 656.1L597.1 655L590.6 656.2Z" fill="#1a1d20"/><path d="M1126.1 668.2L1122 657L1127.4 660.9L1131.5 672.2Z" fill="#556373"/><path d="M1149.9 555.7L1161.5 549.1L1166.9 553L1155.4 559.7Z" fill="#46698e"/><path d="M720.2 606L722 593.5L732 592.4L730.3 604.9Z" fill="#52769c"/><path d="M557.1 499.4L550.6 500.5L560.6 499.4L567.1 498.3Z" fill="#12171c"/><path d="M607.1 654L613.2 650.4L623.2 649.4L617.1 652.9Z" fill="#414952"/><path d="M683.5 630.3L687.4 620.5L697.4 619.5L693.5 629.2Z" fill="#546c87"/><path d="M688.7 517.3L683.2 507.4L693.2 506.4L698.7 516.2Z" fill="#527ca8"/><path d="M730.2 551.4L727.4 538L737.4 536.9L740.2 550.3Z" fill="#527ca8"/><path d="M1137.6 682.1L1131.5 672.2L1136.9 676.1L1143 686Z" fill="#434b54"/><path d="M1196.7 549.9L1208.8 549.7L1214.2 553.6L1202.2 553.8Z" fill="#31465c"/><path d="M633.2 648.3L638.7 642.5L648.8 641.4L643.3 647.2Z" fill="#55616e"/><path d="M583.8 498.5L577.1 497.2L587.1 496.1L593.8 497.4Z" fill="#1f2a35"/><path d="M658.8 640.3L663.5 632.5L673.5 631.4L668.8 639.3Z" fill="#54677b"/><path d="M732.6 579L732 565.2L742 564.1L742.6 577.9Z" fill="#527ca8"/><path d="M1111.4 611L1115.7 598.1L1121.1 602.1L1116.8 615Z" fill="#4b6887"/><path d="M732 565.2L730.2 551.4L740.2 550.3L742 564.1Z" fill="#527ca8"/><path d="M1150.8 694.3L1143 686L1148.4 689.9L1156.2 698.2Z" fill="#292e34"/><path d="M663.2 509.6L657.1 501.6L667.1 500.5L673.2 508.5Z" fill="#496f97"/><path d="M610.5 500L603.8 496.3L613.8 495.3L620.5 498.9Z" fill="#2e4155"/><path d="M1139.3 564.3L1149.9 555.7L1155.4 559.7L1144.7 568.2Z" fill="#4b7097"/><path d="M703.5 527.6L698.7 516.2L708.7 515.1L713.5 526.5Z" fill="#527ca8"/><path d="M1114.5 640.9L1114.6 628L1120 632L1119.9 644.8Z" fill="#546c86"/><path d="M717.3 539.1L713.5 526.5L723.5 525.4L727.4 538Z" fill="#527ca8"/><path d="M637 503.7L630.5 497.8L640.6 496.8L647.1 502.7Z" fill="#3d5977"/><path d="M1214.2 553.6L1225.7 555.7L1231.1 559.6L1219.6 557.5Z" fill="#283747"/><path d="M697.4 619.5L700.2 608.2L710.2 607.1L707.4 618.4Z" fill="#537192"/><path d="M1165.6 704.6L1156.2 698.2L1161.7 702.1L1171 708.5Z" fill="#121517"/><path d="M1166.9 553L1179 548.4L1184.5 552.3L1172.4 556.9Z" fill="#416080"/><path d="M1115.7 598.1L1121.9 585.8L1127.3 589.7L1121.1 602.1Z" fill="#4d6f92"/><path d="M722 593.5L722.5 580.1L732.6 579L732 592.4Z" fill="#527aa4"/><path d="M570.6 658.3L577.1 657.2L587.1 656.1L580.6 657.3Z" fill="#1a1d20"/><path d="M1129.8 574.4L1139.3 564.3L1144.7 568.2L1135.2 578.3Z" fill="#4d739a"/><path d="M1231.1 559.6L1241.7 563.9L1247.2 567.9L1236.6 563.6Z" fill="#1e2832"/><path d="M710.2 607.1L712 594.5L722 593.5L720.2 606Z" fill="#52769c"/><path d="M1121.9 585.8L1129.8 574.4L1135.2 578.3L1127.3 589.7Z" fill="#4e7299"/><path d="M1247.2 567.9L1256.5 574.2L1261.9 578.2L1252.6 571.8Z" fill="#14191e"/><path d="M597.1 655L603.2 651.5L613.2 650.4L607.1 654Z" fill="#414952"/><path d="M673.5 631.4L677.4 621.6L687.4 620.5L683.5 630.3Z" fill="#546c87"/><path d="M1122 657L1119.9 644.8L1125.3 648.7L1127.4 660.9Z" fill="#54677d"/><path d="M678.7 518.4L673.2 508.5L683.2 507.4L688.7 517.3Z" fill="#527ca8"/><path d="M720.2 552.5L717.3 539.1L727.4 538L730.2 551.4Z" fill="#527ca8"/><path d="M623.2 649.4L628.7 643.6L638.7 642.5L633.2 648.3Z" fill="#55616e"/><path d="M573.8 499.6L567.1 498.3L577.1 497.2L583.8 498.5Z" fill="#1f2a35"/><path d="M648.8 641.4L653.5 633.5L663.5 632.5L658.8 640.3Z" fill="#54677b"/><path d="M722.5 580.1L721.9 566.3L732 565.2L732.6 579Z" fill="#527ca8"/><path d="M1114.6 628L1116.8 615L1122.2 618.9L1120 632Z" fill="#465e78"/><path d="M1184.5 552.3L1196.7 549.9L1202.2 553.8L1189.9 556.2Z" fill="#3a546f"/><path d="M721.9 566.3L720.2 552.5L730.2 551.4L732 565.2Z" fill="#527ca8"/><path d="M653.1 510.7L647.1 502.7L657.1 501.6L663.2 509.6Z" fill="#496f97"/><path d="M600.5 501.1L593.8 497.4L603.8 496.3L610.5 500Z" fill="#2e4155"/><path d="M693.5 528.7L688.7 517.3L698.7 516.2L703.5 527.6Z" fill="#527ca8"/><path d="M707.3 540.2L703.5 527.6L713.5 526.5L717.3 539.1Z" fill="#527ca8"/><path d="M627 504.8L620.5 498.9L630.5 497.8L637 503.7Z" fill="#3d5977"/><path d="M1131.5 672.2L1127.4 660.9L1132.8 664.9L1136.9 676.1Z" fill="#556373"/><path d="M1155.4 559.7L1166.9 553L1172.4 556.9L1160.8 563.6Z" fill="#46698e"/><path d="M687.4 620.5L690.2 609.2L700.2 608.2L697.4 619.5Z" fill="#537192"/><path d="M712 594.5L712.5 581.2L722.5 580.1L722 593.5Z" fill="#527aa4"/><path d="M700.2 608.2L701.9 595.6L712 594.5L710.2 607.1Z" fill="#52769c"/><path d="M1143 686L1136.9 676.1L1142.4 680L1148.4 689.9Z" fill="#434b54"/><path d="M1202.2 553.8L1214.2 553.6L1219.6 557.5L1207.6 557.7Z" fill="#31465c"/><path d="M1116.8 615L1121.1 602.1L1126.5 606L1122.2 618.9Z" fill="#4b6887"/><path d="M587.1 656.1L593.2 652.6L603.2 651.5L597.1 655Z" fill="#414952"/><path d="M663.5 632.5L667.4 622.7L677.4 621.6L673.5 631.4Z" fill="#546c87"/><path d="M668.7 519.4L663.2 509.6L673.2 508.5L678.7 518.4Z" fill="#527ca8"/><path d="M710.2 553.6L707.3 540.2L717.3 539.1L720.2 552.5Z" fill="#527ca8"/><path d="M1156.2 698.2L1148.4 689.9L1153.8 693.9L1161.7 702.1Z" fill="#292e34"/><path d="M1144.7 568.2L1155.4 559.7L1160.8 563.6L1150.1 572.1Z" fill="#4b7097"/><path d="M1119.9 644.8L1120 632L1125.4 635.9L1125.3 648.7Z" fill="#546c86"/><path d="M613.2 650.4L618.7 644.7L628.7 643.6L623.2 649.4Z" fill="#55616e"/><path d="M563.8 500.6L557.1 499.4L567.1 498.3L573.8 499.6Z" fill="#1f2a35"/><path d="M638.7 642.5L643.5 634.6L653.5 633.5L648.8 641.4Z" fill="#54677b"/><path d="M1219.6 557.5L1231.1 559.6L1236.6 563.6L1225.1 561.5Z" fill="#283747"/><path d="M712.5 581.2L711.9 567.4L721.9 566.3L722.5 580.1Z" fill="#527ca8"/><path d="M1171 708.5L1161.7 702.1L1167.1 706.1L1176.4 712.4Z" fill="#121517"/><path d="M711.9 567.4L710.2 553.6L720.2 552.5L721.9 566.3Z" fill="#527ca8"/><path d="M643.1 511.7L637 503.7L647.1 502.7L653.1 510.7Z" fill="#496f97"/><path d="M1172.4 556.9L1184.5 552.3L1189.9 556.2L1177.8 560.9Z" fill="#416080"/><path d="M590.5 502.1L583.8 498.5L593.8 497.4L600.5 501.1Z" fill="#2e4155"/><path d="M1121.1 602.1L1127.3 589.7L1132.7 593.7L1126.5 606Z" fill="#4d6f92"/><path d="M683.4 529.7L678.7 518.4L688.7 517.3L693.5 528.7Z" fill="#527ca8"/><path d="M697.3 541.3L693.5 528.7L703.5 527.6L707.3 540.2Z" fill="#527ca8"/><path d="M1135.2 578.3L1144.7 568.2L1150.1 572.1L1140.7 582.3Z" fill="#4d739a"/><path d="M617 505.9L610.5 500L620.5 498.9L627 504.8Z" fill="#3d5977"/><path d="M1236.6 563.6L1247.2 567.9L1252.6 571.8L1242 567.5Z" fill="#1e2832"/><path d="M1127.3 589.7L1135.2 578.3L1140.7 582.3L1132.7 593.7Z" fill="#4e7299"/><path d="M677.4 621.6L680.2 610.3L690.2 609.2L687.4 620.5Z" fill="#537192"/><path d="M1252.6 571.8L1261.9 578.2L1267.4 582.1L1258 575.7Z" fill="#14191e"/><path d="M701.9 595.6L702.5 582.3L712.5 581.2L712 594.5Z" fill="#527aa4"/><path d="M1127.4 660.9L1125.3 648.7L1130.8 652.7L1132.8 664.9Z" fill="#54677d"/><path d="M690.2 609.2L691.9 596.7L701.9 595.6L700.2 608.2Z" fill="#52769c"/><path d="M577.1 657.2L583.2 653.7L593.2 652.6L587.1 656.1Z" fill="#414952"/><path d="M653.5 633.5L657.3 623.8L667.4 622.7L663.5 632.5Z" fill="#546c87"/><path d="M1120 632L1122.2 618.9L1127.6 622.8L1125.4 635.9Z" fill="#465e78"/><path d="M658.7 520.5L653.1 510.7L663.2 509.6L668.7 519.4Z" fill="#527ca8"/><path d="M1189.9 556.2L1202.2 553.8L1207.6 557.7L1195.3 560.2Z" fill="#3a546f"/><path d="M700.2 554.7L697.3 541.3L707.3 540.2L710.2 553.6Z" fill="#527ca8"/><path d="M603.2 651.5L608.7 645.7L618.7 644.7L613.2 650.4Z" fill="#55616e"/><path d="M628.7 643.6L633.5 635.7L643.5 634.6L638.7 642.5Z" fill="#54677b"/><path d="M1136.9 676.1L1132.8 664.9L1138.2 668.8L1142.4 680Z" fill="#556373"/><path d="M702.5 582.3L701.9 568.5L711.9 567.4L712.5 581.2Z" fill="#527ca8"/><path d="M1160.8 563.6L1172.4 556.9L1177.8 560.9L1166.2 567.5Z" fill="#46698e"/><path d="M701.9 568.5L700.2 554.7L710.2 553.6L711.9 567.4Z" fill="#527ca8"/><path d="M633.1 512.8L627 504.8L637 503.7L643.1 511.7Z" fill="#496f97"/><path d="M580.5 503.2L573.8 499.6L583.8 498.5L590.5 502.1Z" fill="#2e4155"/><path d="M673.4 530.8L668.7 519.4L678.7 518.4L683.4 529.7Z" fill="#527ca8"/><path d="M687.3 542.3L683.4 529.7L693.5 528.7L697.3 541.3Z" fill="#527ca8"/><path d="M607 507L600.5 501.1L610.5 500L617 505.9Z" fill="#3d5977"/><path d="M1148.4 689.9L1142.4 680L1147.8 684L1153.8 693.9Z" fill="#434b54"/><path d="M1207.6 557.7L1219.6 557.5L1225.1 561.5L1213 561.7Z" fill="#31465c"/><path d="M667.4 622.7L670.2 611.4L680.2 610.3L677.4 621.6Z" fill="#537192"/><path d="M1122.2 618.9L1126.5 606L1131.9 609.9L1127.6 622.8Z" fill="#4b6887"/><path d="M691.9 596.7L692.5 583.3L702.5 582.3L701.9 595.6Z" fill="#527aa4"/><path d="M1161.7 702.1L1153.8 693.9L1159.3 697.8L1167.1 706.1Z" fill="#292e34"/><path d="M680.2 610.3L681.9 597.8L691.9 596.7L690.2 609.2Z" fill="#52769c"/><path d="M1150.1 572.1L1160.8 563.6L1166.2 567.5L1155.5 576.1Z" fill="#4b7097"/><path d="M1125.3 648.7L1125.4 635.9L1130.9 639.8L1130.8 652.7Z" fill="#546c86"/><path d="M1225.1 561.5L1236.6 563.6L1242 567.5L1230.5 565.4Z" fill="#283747"/><path d="M1176.4 712.4L1167.1 706.1L1172.5 710L1181.9 716.4Z" fill="#121517"/><path d="M643.5 634.6L647.3 624.9L657.3 623.8L653.5 633.5Z" fill="#546c87"/><path d="M648.6 521.6L643.1 511.7L653.1 510.7L658.7 520.5Z" fill="#527ca8"/><path d="M690.2 555.7L687.3 542.3L697.3 541.3L700.2 554.7Z" fill="#527ca8"/><path d="M1177.8 560.9L1189.9 556.2L1195.3 560.2L1183.2 564.8Z" fill="#416080"/><path d="M1126.5 606L1132.7 593.7L1138.1 597.6L1131.9 609.9Z" fill="#4d6f92"/><path d="M593.2 652.6L598.7 646.8L608.7 645.7L603.2 651.5Z" fill="#55616e"/><path d="M1140.7 582.3L1150.1 572.1L1155.5 576.1L1146.1 586.2Z" fill="#4d739a"/><path d="M618.7 644.7L623.5 636.8L633.5 635.7L628.7 643.6Z" fill="#54677b"/><path d="M1242 567.5L1252.6 571.8L1258 575.7L1247.4 571.4Z" fill="#1e2832"/><path d="M692.5 583.3L691.9 569.5L701.9 568.5L702.5 582.3Z" fill="#527ca8"/><path d="M1132.7 593.7L1140.7 582.3L1146.1 586.2L1138.1 597.6Z" fill="#4e7299"/><path d="M691.9 569.5L690.2 555.7L700.2 554.7L701.9 568.5Z" fill="#527ca8"/><path d="M623.1 513.9L617 505.9L627 504.8L633.1 512.8Z" fill="#496f97"/><path d="M570.5 504.3L563.8 500.6L573.8 499.6L580.5 503.2Z" fill="#2e4155"/><path d="M663.4 531.9L658.7 520.5L668.7 519.4L673.4 530.8Z" fill="#527ca8"/><path d="M1258 575.7L1267.4 582.1L1272.8 586.1L1263.4 579.7Z" fill="#14191e"/><path d="M677.3 543.4L673.4 530.8L683.4 529.7L687.3 542.3Z" fill="#527ca8"/><path d="M1132.8 664.9L1130.8 652.7L1136.2 656.6L1138.2 668.8Z" fill="#54677d"/><path d="M597 508.1L590.5 502.1L600.5 501.1L607 507Z" fill="#3d5977"/><path d="M657.3 623.8L660.2 612.5L670.2 611.4L667.4 622.7Z" fill="#537192"/><path d="M681.9 597.8L682.5 584.4L692.5 583.3L691.9 596.7Z" fill="#527aa4"/><path d="M1125.4 635.9L1127.6 622.8L1133.1 626.8L1130.9 639.8Z" fill="#465e78"/><path d="M1195.3 560.2L1207.6 557.7L1213 561.7L1200.7 564.1Z" fill="#3a546f"/><path d="M670.2 611.4L671.9 598.9L681.9 597.8L680.2 610.3Z" fill="#52769c"/><path d="M1142.4 680L1138.2 668.8L1143.7 672.7L1147.8 684Z" fill="#556373"/><path d="M1166.2 567.5L1177.8 560.9L1183.2 564.8L1171.6 571.5Z" fill="#46698e"/><path d="M633.5 635.7L637.3 625.9L647.3 624.9L643.5 634.6Z" fill="#546c87"/><path d="M638.6 522.7L633.1 512.8L643.1 511.7L648.6 521.6Z" fill="#527ca8"/><path d="M680.1 556.8L677.3 543.4L687.3 542.3L690.2 555.7Z" fill="#527ca8"/><path d="M583.2 653.7L588.7 647.9L598.7 646.8L593.2 652.6Z" fill="#55616e"/><path d="M608.7 645.7L613.4 637.8L623.5 636.8L618.7 644.7Z" fill="#54677b"/><path d="M682.5 584.4L681.9 570.6L691.9 569.5L692.5 583.3Z" fill="#527ca8"/><path d="M1153.8 693.9L1147.8 684L1153.2 687.9L1159.3 697.8Z" fill="#434b54"/><path d="M1213 561.7L1225.1 561.5L1230.5 565.4L1218.4 565.6Z" fill="#31465c"/><path d="M681.9 570.6L680.1 556.8L690.2 555.7L691.9 569.5Z" fill="#527ca8"/><path d="M613.1 515L607 507L617 505.9L623.1 513.9Z" fill="#496f97"/><path d="M653.4 533L648.6 521.6L658.7 520.5L663.4 531.9Z" fill="#527ca8"/><path d="M1127.6 622.8L1131.9 609.9L1137.4 613.9L1133.1 626.8Z" fill="#4b6887"/><path d="M667.3 544.5L663.4 531.9L673.4 530.8L677.3 543.4Z" fill="#527ca8"/><path d="M587 509.1L580.5 503.2L590.5 502.1L597 508.1Z" fill="#3d5977"/><path d="M1167.1 706.1L1159.3 697.8L1164.7 701.7L1172.5 710Z" fill="#292e34"/><path d="M1155.5 576.1L1166.2 567.5L1171.6 571.5L1161 580Z" fill="#4b7097"/><path d="M1130.8 652.7L1130.9 639.8L1136.3 643.8L1136.2 656.6Z" fill="#546c86"/><path d="M647.3 624.9L650.2 613.5L660.2 612.5L657.3 623.8Z" fill="#537192"/><path d="M1230.5 565.4L1242 567.5L1247.4 571.4L1235.9 569.3Z" fill="#283747"/><path d="M671.9 598.9L672.5 585.5L682.5 584.4L681.9 597.8Z" fill="#527aa4"/><path d="M1181.9 716.4L1172.5 710L1177.9 713.9L1187.3 720.3Z" fill="#121517"/><path d="M660.2 612.5L661.9 599.9L671.9 598.9L670.2 611.4Z" fill="#52769c"/><path d="M1183.2 564.8L1195.3 560.2L1200.7 564.1L1188.6 568.7Z" fill="#416080"/><path d="M1131.9 609.9L1138.1 597.6L1143.6 601.5L1137.4 613.9Z" fill="#4d6f92"/><path d="M1146.1 586.2L1155.5 576.1L1161 580L1151.5 590.1Z" fill="#4d739a"/><path d="M1247.4 571.4L1258 575.7L1263.4 579.7L1252.8 575.4Z" fill="#1e2832"/><path d="M1138.1 597.6L1146.1 586.2L1151.5 590.1L1143.6 601.5Z" fill="#4e7299"/><path d="M623.5 636.8L627.3 627L637.3 625.9L633.5 635.7Z" fill="#546c87"/><path d="M628.6 523.7L623.1 513.9L633.1 512.8L638.6 522.7Z" fill="#527ca8"/><path d="M670.1 557.9L667.3 544.5L677.3 543.4L680.1 556.8Z" fill="#527ca8"/><path d="M1263.4 579.7L1272.8 586.1L1278.2 590L1268.9 583.6Z" fill="#14191e"/><path d="M1138.2 668.8L1136.2 656.6L1141.6 660.5L1143.7 672.7Z" fill="#54677d"/><path d="M598.7 646.8L603.4 638.9L613.4 637.8L608.7 645.7Z" fill="#54677b"/><path d="M672.5 585.5L671.9 571.7L681.9 570.6L682.5 584.4Z" fill="#527ca8"/><path d="M671.9 571.7L670.1 557.9L680.1 556.8L681.9 570.6Z" fill="#527ca8"/><path d="M603.1 516.1L597 508.1L607 507L613.1 515Z" fill="#496f97"/><path d="M643.4 534.1L638.6 522.7L648.6 521.6L653.4 533Z" fill="#527ca8"/><path d="M657.3 545.6L653.4 533L663.4 531.9L667.3 544.5Z" fill="#527ca8"/><path d="M1130.9 639.8L1133.1 626.8L1138.5 630.7L1136.3 643.8Z" fill="#465e78"/><path d="M577 510.2L570.5 504.3L580.5 503.2L587 509.1Z" fill="#3d5977"/><path d="M1200.7 564.1L1213 561.7L1218.4 565.6L1206.2 568Z" fill="#3a546f"/><path d="M637.3 625.9L640.1 614.6L650.2 613.5L647.3 624.9Z" fill="#537192"/><path d="M1147.8 684L1143.7 672.7L1149.1 676.7L1153.2 687.9Z" fill="#556373"/><path d="M1171.6 571.5L1183.2 564.8L1188.6 568.7L1177.1 575.4Z" fill="#46698e"/><path d="M661.9 599.9L662.5 586.6L672.5 585.5L671.9 598.9Z" fill="#527aa4"/><path d="M650.2 613.5L651.9 601L661.9 599.9L660.2 612.5Z" fill="#52769c"/><path d="M1159.3 697.8L1153.2 687.9L1158.6 691.8L1164.7 701.7Z" fill="#434b54"/><path d="M1218.4 565.6L1230.5 565.4L1235.9 569.3L1223.8 569.5Z" fill="#31465c"/><path d="M613.4 637.8L617.3 628.1L627.3 627L623.5 636.8Z" fill="#546c87"/><path d="M618.6 524.8L613.1 515L623.1 513.9L628.6 523.7Z" fill="#527ca8"/><path d="M660.1 559L657.3 545.6L667.3 544.5L670.1 557.9Z" fill="#527ca8"/><path d="M1133.1 626.8L1137.4 613.9L1142.8 617.8L1138.5 630.7Z" fill="#4b6887"/><path d="M588.7 647.9L593.4 640L603.4 638.9L598.7 646.8Z" fill="#54677b"/><path d="M662.5 586.6L661.9 572.8L671.9 571.7L672.5 585.5Z" fill="#527ca8"/><path d="M1172.5 710L1164.7 701.7L1170.1 705.7L1177.9 713.9Z" fill="#292e34"/><path d="M1161 580L1171.6 571.5L1177.1 575.4L1166.4 584Z" fill="#4b7097"/><path d="M1136.2 656.6L1136.3 643.8L1141.7 647.7L1141.6 660.5Z" fill="#546c86"/><path d="M661.9 572.8L660.1 559L670.1 557.9L671.9 571.7Z" fill="#527ca8"/><path d="M1235.9 569.3L1247.4 571.4L1252.8 575.4L1241.3 573.3Z" fill="#283747"/><path d="M593.1 517.1L587 509.1L597 508.1L603.1 516.1Z" fill="#496f97"/><path d="M633.4 535.1L628.6 523.7L638.6 522.7L643.4 534.1Z" fill="#527ca8"/><path d="M647.3 546.6L643.4 534.1L653.4 533L657.3 545.6Z" fill="#527ca8"/><path d="M1187.3 720.3L1177.9 713.9L1183.4 717.9L1192.7 724.2Z" fill="#121517"/><path d="M1188.6 568.7L1200.7 564.1L1206.2 568L1194.1 572.7Z" fill="#416080"/><path d="M1137.4 613.9L1143.6 601.5L1149 605.5L1142.8 617.8Z" fill="#4d6f92"/><path d="M627.3 627L630.1 615.7L640.1 614.6L637.3 625.9Z" fill="#537192"/><path d="M1151.5 590.1L1161 580L1166.4 584L1156.9 594.1Z" fill="#4d739a"/><path d="M1252.8 575.4L1263.4 579.7L1268.9 583.6L1258.3 579.3Z" fill="#1e2832"/><path d="M651.9 601L652.5 587.6L662.5 586.6L661.9 599.9Z" fill="#527aa4"/><path d="M1143.6 601.5L1151.5 590.1L1156.9 594.1L1149 605.5Z" fill="#4e7299"/><path d="M640.1 614.6L641.9 602.1L651.9 601L650.2 613.5Z" fill="#52769c"/><path d="M1268.9 583.6L1278.2 590L1283.6 593.9L1274.3 587.5Z" fill="#14191e"/><path d="M1143.7 672.7L1141.6 660.5L1147 664.5L1149.1 676.7Z" fill="#54677d"/><path d="M603.4 638.9L607.3 629.2L617.3 628.1L613.4 637.8Z" fill="#546c87"/><path d="M608.6 525.9L603.1 516.1L613.1 515L618.6 524.8Z" fill="#527ca8"/><path d="M650.1 560L647.3 546.6L657.3 545.6L660.1 559Z" fill="#527ca8"/><path d="M1136.3 643.8L1138.5 630.7L1143.9 634.6L1141.7 647.7Z" fill="#465e78"/><path d="M1206.2 568L1218.4 565.6L1223.8 569.5L1211.6 572Z" fill="#3a546f"/><path d="M652.5 587.6L651.9 573.9L661.9 572.8L662.5 586.6Z" fill="#527ca8"/><path d="M651.9 573.9L650.1 560L660.1 559L661.9 572.8Z" fill="#527ca8"/><path d="M1153.2 687.9L1149.1 676.7L1154.5 680.6L1158.6 691.8Z" fill="#556373"/><path d="M1177.1 575.4L1188.6 568.7L1194.1 572.7L1182.5 579.4Z" fill="#46698e"/><path d="M583.1 518.2L577 510.2L587 509.1L593.1 517.1Z" fill="#496f97"/><path d="M623.4 536.2L618.6 524.8L628.6 523.7L633.4 535.1Z" fill="#527ca8"/><path d="M637.2 547.7L633.4 535.1L643.4 534.1L647.3 546.6Z" fill="#527ca8"/><path d="M617.3 628.1L620.1 616.8L630.1 615.7L627.3 627Z" fill="#537192"/><path d="M1164.7 701.7L1158.6 691.8L1164.1 695.8L1170.1 705.7Z" fill="#434b54"/><path d="M641.9 602.1L642.4 588.7L652.5 587.6L651.9 601Z" fill="#527aa4"/><path d="M1223.8 569.5L1235.9 569.3L1241.3 573.3L1229.3 573.5Z" fill="#31465c"/><path d="M630.1 615.7L631.9 603.2L641.9 602.1L640.1 614.6Z" fill="#52769c"/><path d="M1138.5 630.7L1142.8 617.8L1148.2 621.7L1143.9 634.6Z" fill="#4b6887"/><path d="M1177.9 713.9L1170.1 705.7L1175.5 709.6L1183.4 717.9Z" fill="#292e34"/><path d="M1166.4 584L1177.1 575.4L1182.5 579.4L1171.8 587.9Z" fill="#4b7097"/><path d="M1141.6 660.5L1141.7 647.7L1147.1 651.6L1147 664.5Z" fill="#546c86"/><path d="M593.4 640L597.3 630.2L607.3 629.2L603.4 638.9Z" fill="#546c87"/><path d="M598.6 527L593.1 517.1L603.1 516.1L608.6 525.9Z" fill="#527ca8"/><path d="M640.1 561.1L637.2 547.7L647.3 546.6L650.1 560Z" fill="#527ca8"/><path d="M1241.3 573.3L1252.8 575.4L1258.3 579.3L1246.8 577.2Z" fill="#283747"/><path d="M1192.7 724.2L1183.4 717.9L1188.8 721.8L1198.1 728.2Z" fill="#121517"/><path d="M642.4 588.7L641.8 574.9L651.9 573.9L652.5 587.6Z" fill="#527ca8"/><path d="M1194.1 572.7L1206.2 568L1211.6 572L1199.5 576.6Z" fill="#416080"/><path d="M1142.8 617.8L1149 605.5L1154.4 609.4L1148.2 621.7Z" fill="#4d6f92"/><path d="M1156.9 594.1L1166.4 584L1171.8 587.9L1162.4 598Z" fill="#4d739a"/><path d="M641.8 574.9L640.1 561.1L650.1 560L651.9 573.9Z" fill="#527ca8"/><path d="M1258.3 579.3L1268.9 583.6L1274.3 587.5L1263.7 583.2Z" fill="#1e2832"/><path d="M613.4 537.3L608.6 525.9L618.6 524.8L623.4 536.2Z" fill="#527ca8"/><path d="M627.2 548.8L623.4 536.2L633.4 535.1L637.2 547.7Z" fill="#527ca8"/><path d="M1149 605.5L1156.9 594.1L1162.4 598L1154.4 609.4Z" fill="#4e7299"/><path d="M607.3 629.2L610.1 617.9L620.1 616.8L617.3 628.1Z" fill="#537192"/><path d="M1274.3 587.5L1283.6 593.9L1289.1 597.9L1279.7 591.5Z" fill="#14191e"/><path d="M1149.1 676.7L1147 664.5L1152.5 668.4L1154.5 680.6Z" fill="#54677d"/><path d="M631.9 603.2L632.4 589.8L642.4 588.7L641.9 602.1Z" fill="#527aa4"/><path d="M620.1 616.8L621.8 604.3L631.9 603.2L630.1 615.7Z" fill="#52769c"/><path d="M1141.7 647.7L1143.9 634.6L1149.3 638.6L1147.1 651.6Z" fill="#465e78"/><path d="M1211.6 572L1223.8 569.5L1229.3 573.5L1217 575.9Z" fill="#3a546f"/><path d="M588.6 528.1L583.1 518.2L593.1 517.1L598.6 527Z" fill="#527ca8"/><path d="M630.1 562.2L627.2 548.8L637.2 547.7L640.1 561.1Z" fill="#527ca8"/><path d="M1158.6 691.8L1154.5 680.6L1159.9 684.6L1164.1 695.8Z" fill="#556373"/><path d="M1182.5 579.4L1194.1 572.7L1199.5 576.6L1187.9 583.3Z" fill="#46698e"/><path d="M632.4 589.8L631.8 576L641.8 574.9L642.4 588.7Z" fill="#527ca8"/><path d="M631.8 576L630.1 562.2L640.1 561.1L641.8 574.9Z" fill="#527ca8"/><path d="M603.3 538.4L598.6 527L608.6 525.9L613.4 537.3Z" fill="#527ca8"/><path d="M1170.1 705.7L1164.1 695.8L1169.5 699.7L1175.5 709.6Z" fill="#434b54"/><path d="M617.2 549.9L613.4 537.3L623.4 536.2L627.2 548.8Z" fill="#527ca8"/><path d="M1229.3 573.5L1241.3 573.3L1246.8 577.2L1234.7 577.4Z" fill="#31465c"/><path d="M1143.9 634.6L1148.2 621.7L1153.6 625.7L1149.3 638.6Z" fill="#4b6887"/><path d="M597.3 630.2L600.1 618.9L610.1 617.9L607.3 629.2Z" fill="#537192"/><path d="M1183.4 717.9L1175.5 709.6L1181 713.5L1188.8 721.8Z" fill="#292e34"/><path d="M1171.8 587.9L1182.5 579.4L1187.9 583.3L1177.2 591.8Z" fill="#4b7097"/><path d="M621.8 604.3L622.4 590.9L632.4 589.8L631.9 603.2Z" fill="#527aa4"/><path d="M1147 664.5L1147.1 651.6L1152.6 655.6L1152.5 668.4Z" fill="#546c86"/><path d="M1246.8 577.2L1258.3 579.3L1263.7 583.2L1252.2 581.2Z" fill="#283747"/><path d="M610.1 617.9L611.8 605.3L621.8 604.3L620.1 616.8Z" fill="#52769c"/><path d="M1198.1 728.2L1188.8 721.8L1194.2 725.7L1203.6 732.1Z" fill="#121517"/><path d="M1199.5 576.6L1211.6 572L1217 575.9L1204.9 580.5Z" fill="#416080"/><path d="M1148.2 621.7L1154.4 609.4L1159.8 613.3L1153.6 625.7Z" fill="#4d6f92"/><path d="M1162.4 598L1171.8 587.9L1177.2 591.8L1167.8 601.9Z" fill="#4d739a"/><path d="M1263.7 583.2L1274.3 587.5L1279.7 591.5L1269.1 587.2Z" fill="#1e2832"/><path d="M620.1 563.3L617.2 549.9L627.2 548.8L630.1 562.2Z" fill="#527ca8"/><path d="M1154.4 609.4L1162.4 598L1167.8 601.9L1159.8 613.3Z" fill="#4e7299"/><path d="M622.4 590.9L621.8 577.1L631.8 576L632.4 589.8Z" fill="#527ca8"/><path d="M1279.7 591.5L1289.1 597.9L1294.5 601.8L1285.1 595.4Z" fill="#14191e"/><path d="M1154.5 680.6L1152.5 668.4L1157.9 672.3L1159.9 684.6Z" fill="#54677d"/><path d="M621.8 577.1L620.1 563.3L630.1 562.2L631.8 576Z" fill="#527ca8"/><path d="M593.3 539.4L588.6 528.1L598.6 527L603.3 538.4Z" fill="#527ca8"/><path d="M607.2 551L603.3 538.4L613.4 537.3L617.2 549.9Z" fill="#527ca8"/><path d="M1147.1 651.6L1149.3 638.6L1154.8 642.5L1152.6 655.6Z" fill="#465e78"/><path d="M1217 575.9L1229.3 573.5L1234.7 577.4L1222.4 579.8Z" fill="#3a546f"/><path d="M611.8 605.3L612.4 592L622.4 590.9L621.8 604.3Z" fill="#527aa4"/><path d="M1164.1 695.8L1159.9 684.6L1165.4 688.5L1169.5 699.7Z" fill="#556373"/><path d="M600.1 618.9L601.8 606.4L611.8 605.3L610.1 617.9Z" fill="#52769c"/><path d="M1187.9 583.3L1199.5 576.6L1204.9 580.5L1193.3 587.2Z" fill="#46698e"/><path d="M610.1 564.4L607.2 551L617.2 549.9L620.1 563.3Z" fill="#527ca8"/><path d="M1175.5 709.6L1169.5 699.7L1174.9 703.6L1181 713.5Z" fill="#434b54"/><path d="M1234.7 577.4L1246.8 577.2L1252.2 581.2L1240.1 581.3Z" fill="#31465c"/><path d="M612.4 592L611.8 578.2L621.8 577.1L622.4 590.9Z" fill="#527ca8"/><path d="M1149.3 638.6L1153.6 625.7L1159 629.6L1154.8 642.5Z" fill="#4b6887"/><path d="M611.8 578.2L610.1 564.4L620.1 563.3L621.8 577.1Z" fill="#527ca8"/><path d="M1188.8 721.8L1181 713.5L1186.4 717.5L1194.2 725.7Z" fill="#292e34"/><path d="M1177.2 591.8L1187.9 583.3L1193.3 587.2L1182.7 595.8Z" fill="#4b7097"/><path d="M597.2 552L593.3 539.4L603.3 538.4L607.2 551Z" fill="#527ca8"/><path d="M1152.5 668.4L1152.6 655.6L1158 659.5L1157.9 672.3Z" fill="#546c86"/><path d="M1252.2 581.2L1263.7 583.2L1269.1 587.2L1257.6 585.1Z" fill="#283747"/><path d="M1203.6 732.1L1194.2 725.7L1199.6 729.7L1209 736Z" fill="#121517"/><path d="M1204.9 580.5L1217 575.9L1222.4 579.8L1210.3 584.5Z" fill="#416080"/><path d="M1153.6 625.7L1159.8 613.3L1165.3 617.3L1159 629.6Z" fill="#4d6f92"/><path d="M601.8 606.4L602.4 593L612.4 592L611.8 605.3Z" fill="#527aa4"/><path d="M1167.8 601.9L1177.2 591.8L1182.7 595.8L1173.2 605.9Z" fill="#4d739a"/><path d="M1269.1 587.2L1279.7 591.5L1285.1 595.4L1274.5 591.1Z" fill="#1e2832"/><path d="M1159.8 613.3L1167.8 601.9L1173.2 605.9L1165.3 617.3Z" fill="#4e7299"/><path d="M1285.1 595.4L1294.5 601.8L1299.9 605.7L1290.6 599.4Z" fill="#14191e"/><path d="M1159.9 684.6L1157.9 672.3L1163.3 676.3L1165.4 688.5Z" fill="#54677d"/><path d="M600 565.4L597.2 552L607.2 551L610.1 564.4Z" fill="#527ca8"/><path d="M602.4 593L601.8 579.2L611.8 578.2L612.4 592Z" fill="#527ca8"/><path d="M1152.6 655.6L1154.8 642.5L1160.2 646.4L1158 659.5Z" fill="#465e78"/><path d="M601.8 579.2L600 565.4L610.1 564.4L611.8 578.2Z" fill="#527ca8"/><path d="M1222.4 579.8L1234.7 577.4L1240.1 581.3L1227.8 583.8Z" fill="#3a546f"/><path d="M1169.5 699.7L1165.4 688.5L1170.8 692.4L1174.9 703.6Z" fill="#556373"/><path d="M1193.3 587.2L1204.9 580.5L1210.3 584.5L1198.8 591.2Z" fill="#46698e"/><path d="M1181 713.5L1174.9 703.6L1180.3 707.6L1186.4 717.5Z" fill="#434b54"/><path d="M1240.1 581.3L1252.2 581.2L1257.6 585.1L1245.5 585.3Z" fill="#31465c"/><path d="M1154.8 642.5L1159 629.6L1164.5 633.5L1160.2 646.4Z" fill="#4b6887"/><path d="M1194.2 725.7L1186.4 717.5L1191.8 721.4L1199.6 729.7Z" fill="#292e34"/><path d="M1182.7 595.8L1193.3 587.2L1198.8 591.2L1188.1 599.7Z" fill="#4b7097"/><path d="M1157.9 672.3L1158 659.5L1163.4 663.4L1163.3 676.3Z" fill="#546c86"/><path d="M1257.6 585.1L1269.1 587.2L1274.5 591.1L1263 589Z" fill="#283747"/><path d="M1209 736L1199.6 729.7L1205.1 733.6L1214.4 740Z" fill="#121517"/><path d="M1210.3 584.5L1222.4 579.8L1227.8 583.8L1215.7 588.4Z" fill="#416080"/><path d="M1159 629.6L1165.3 617.3L1170.7 621.2L1164.5 633.5Z" fill="#4d6f92"/><path d="M1173.2 605.9L1182.7 595.8L1188.1 599.7L1178.6 609.8Z" fill="#4d739a"/><path d="M1274.5 591.1L1285.1 595.4L1290.6 599.4L1280 595.1Z" fill="#1e2832"/><path d="M1165.3 617.3L1173.2 605.9L1178.6 609.8L1170.7 621.2Z" fill="#4e7299"/><path d="M1290.6 599.4L1299.9 605.7L1305.3 609.7L1296 603.3Z" fill="#14191e"/><path d="M1165.4 688.5L1163.3 676.3L1168.7 680.2L1170.8 692.4Z" fill="#54677d"/><path d="M1158 659.5L1160.2 646.4L1165.6 650.4L1163.4 663.4Z" fill="#465e78"/><path d="M1227.8 583.8L1240.1 581.3L1245.5 585.3L1233.3 587.7Z" fill="#3a546f"/><path d="M1174.9 703.6L1170.8 692.4L1176.2 696.4L1180.3 707.6Z" fill="#556373"/><path d="M1198.8 591.2L1210.3 584.5L1215.7 588.4L1204.2 595.1Z" fill="#46698e"/><path d="M1186.4 717.5L1180.3 707.6L1185.8 711.5L1191.8 721.4Z" fill="#434b54"/><path d="M1245.5 585.3L1257.6 585.1L1263 589L1251 589.2Z" fill="#31465c"/><path d="M1160.2 646.4L1164.5 633.5L1169.9 637.5L1165.6 650.4Z" fill="#4b6887"/><path d="M1199.6 729.7L1191.8 721.4L1197.2 725.3L1205.1 733.6Z" fill="#292e34"/><path d="M1188.1 599.7L1198.8 591.2L1204.2 595.1L1193.5 603.6Z" fill="#4b7097"/><path d="M1163.3 676.3L1163.4 663.4L1168.8 667.4L1168.7 680.2Z" fill="#546c86"/><path d="M1263 589L1274.5 591.1L1280 595.1L1268.5 593Z" fill="#283747"/><path d="M1214.4 740L1205.1 733.6L1210.5 737.5L1219.8 743.9Z" fill="#121517"/><path d="M1215.7 588.4L1227.8 583.8L1233.3 587.7L1221.2 592.3Z" fill="#416080"/><path d="M1164.5 633.5L1170.7 621.2L1176.1 625.1L1169.9 637.5Z" fill="#4d6f92"/><path d="M1178.6 609.8L1188.1 599.7L1193.5 603.6L1184.1 613.7Z" fill="#4d739a"/><path d="M1280 595.1L1290.6 599.4L1296 603.3L1285.4 599Z" fill="#1e2832"/><path d="M1170.7 621.2L1178.6 609.8L1184.1 613.7L1176.1 625.1Z" fill="#4e7299"/><path d="M1296 603.3L1305.3 609.7L1310.7 613.6L1301.4 607.2Z" fill="#14191e"/><path d="M1170.8 692.4L1168.7 680.2L1174.2 684.1L1176.2 696.4Z" fill="#54677d"/><path d="M1163.4 663.4L1165.6 650.4L1171 654.3L1168.8 667.4Z" fill="#465e78"/><path d="M1233.3 587.7L1245.5 585.3L1251 589.2L1238.7 591.6Z" fill="#3a546f"/><path d="M1180.3 707.6L1176.2 696.4L1181.6 700.3L1185.8 711.5Z" fill="#556373"/><path d="M1204.2 595.1L1215.7 588.4L1221.2 592.3L1209.6 599Z" fill="#46698e"/><path d="M1191.8 721.4L1185.8 711.5L1191.2 715.5L1197.2 725.3Z" fill="#434b54"/><path d="M1251 589.2L1263 589L1268.5 593L1256.4 593.1Z" fill="#31465c"/><path d="M1165.6 650.4L1169.9 637.5L1175.3 641.4L1171 654.3Z" fill="#4b6887"/><path d="M1205.1 733.6L1197.2 725.3L1202.7 729.3L1210.5 737.5Z" fill="#292e34"/><path d="M1193.5 603.6L1204.2 595.1L1209.6 599L1198.9 607.6Z" fill="#4b7097"/><path d="M1168.7 680.2L1168.8 667.4L1174.3 671.3L1174.2 684.1Z" fill="#546c86"/><path d="M1268.5 593L1280 595.1L1285.4 599L1273.9 596.9Z" fill="#283747"/><path d="M1219.8 743.9L1210.5 737.5L1215.9 741.5L1225.3 747.9Z" fill="#121517"/><path d="M1221.2 592.3L1233.3 587.7L1238.7 591.6L1226.6 596.3Z" fill="#416080"/><path d="M1169.9 637.5L1176.1 625.1L1181.5 629.1L1175.3 641.4Z" fill="#4d6f92"/><path d="M1184.1 613.7L1193.5 603.6L1198.9 607.6L1189.5 617.7Z" fill="#4d739a"/><path d="M1285.4 599L1296 603.3L1301.4 607.2L1290.8 602.9Z" fill="#1e2832"/><path d="M1176.1 625.1L1184.1 613.7L1189.5 617.7L1181.5 629.1Z" fill="#4e7299"/><path d="M1301.4 607.2L1310.7 613.6L1316.2 617.5L1306.8 611.2Z" fill="#14191e"/><path d="M1176.2 696.4L1174.2 684.1L1179.6 688.1L1181.6 700.3Z" fill="#54677d"/><path d="M1168.8 667.4L1171 654.3L1176.5 658.3L1174.3 671.3Z" fill="#465e78"/><path d="M1238.7 591.6L1251 589.2L1256.4 593.1L1244.1 595.6Z" fill="#3a546f"/><path d="M1185.8 711.5L1181.6 700.3L1187.1 704.2L1191.2 715.5Z" fill="#556373"/><path d="M1209.6 599L1221.2 592.3L1226.6 596.3L1215 603Z" fill="#46698e"/><path d="M1197.2 725.3L1191.2 715.5L1196.6 719.4L1202.7 729.3Z" fill="#434b54"/><path d="M1256.4 593.1L1268.5 593L1273.9 596.9L1261.8 597.1Z" fill="#31465c"/><path d="M1171 654.3L1175.3 641.4L1180.7 645.4L1176.5 658.3Z" fill="#4b6887"/><path d="M1210.5 737.5L1202.7 729.3L1208.1 733.2L1215.9 741.5Z" fill="#292e34"/><path d="M1198.9 607.6L1209.6 599L1215 603L1204.4 611.5Z" fill="#4b7097"/><path d="M1174.2 684.1L1174.3 671.3L1179.7 675.2L1179.6 688.1Z" fill="#546c86"/><path d="M1273.9 596.9L1285.4 599L1290.8 602.9L1279.3 600.8Z" fill="#283747"/><path d="M1225.3 747.9L1215.9 741.5L1221.3 745.4L1230.7 751.8Z" fill="#121517"/><path d="M1226.6 596.3L1238.7 591.6L1244.1 595.6L1232 600.2Z" fill="#416080"/><path d="M1175.3 641.4L1181.5 629.1L1187 633L1180.7 645.4Z" fill="#4d6f92"/><path d="M1189.5 617.7L1198.9 607.6L1204.4 611.5L1194.9 621.6Z" fill="#4d739a"/><path d="M1290.8 602.9L1301.4 607.2L1306.8 611.2L1296.2 606.9Z" fill="#1e2832"/><path d="M1181.5 629.1L1189.5 617.7L1194.9 621.6L1187 633Z" fill="#4e7299"/><path d="M1306.8 611.2L1316.2 617.5L1321.6 621.5L1312.2 615.1Z" fill="#14191e"/><path d="M1181.6 700.3L1179.6 688.1L1185 692L1187.1 704.2Z" fill="#54677d"/><path d="M1174.3 671.3L1176.5 658.3L1181.9 662.2L1179.7 675.2Z" fill="#465e78"/><path d="M1244.1 595.6L1256.4 593.1L1261.8 597.1L1249.5 599.5Z" fill="#3a546f"/><path d="M1191.2 715.5L1187.1 704.2L1192.5 708.2L1196.6 719.4Z" fill="#556373"/><path d="M1215 603L1226.6 596.3L1232 600.2L1220.5 606.9Z" fill="#46698e"/><path d="M1202.7 729.3L1196.6 719.4L1202 723.3L1208.1 733.2Z" fill="#434b54"/><path d="M1261.8 597.1L1273.9 596.9L1279.3 600.8L1267.2 601Z" fill="#31465c"/><path d="M1176.5 658.3L1180.7 645.4L1186.2 649.3L1181.9 662.2Z" fill="#4b6887"/><path d="M1215.9 741.5L1208.1 733.2L1213.5 737.2L1221.3 745.4Z" fill="#292e34"/><path d="M1204.4 611.5L1215 603L1220.5 606.9L1209.8 615.4Z" fill="#4b7097"/><path d="M1179.6 688.1L1179.7 675.2L1185.1 679.2L1185 692Z" fill="#546c86"/><path d="M1279.3 600.8L1290.8 602.9L1296.2 606.9L1284.7 604.8Z" fill="#283747"/><path d="M1230.7 751.8L1221.3 745.4L1226.8 749.3L1236.1 755.7Z" fill="#121517"/><path d="M1232 600.2L1244.1 595.6L1249.5 599.5L1237.4 604.2Z" fill="#416080"/><path d="M1180.7 645.4L1187 633L1192.4 637L1186.2 649.3Z" fill="#4d6f92"/><path d="M1194.9 621.6L1204.4 611.5L1209.8 615.4L1200.3 625.6Z" fill="#4d739a"/><path d="M1296.2 606.9L1306.8 611.2L1312.2 615.1L1301.7 610.8Z" fill="#1e2832"/><path d="M1187 633L1194.9 621.6L1200.3 625.6L1192.4 637Z" fill="#4e7299"/><path d="M1312.2 615.1L1321.6 621.5L1327 625.4L1317.7 619Z" fill="#14191e"/><path d="M1187.1 704.2L1185 692L1190.4 696L1192.5 708.2Z" fill="#54677d"/><path d="M1179.7 675.2L1181.9 662.2L1187.3 666.1L1185.1 679.2Z" fill="#465e78"/><path d="M1249.5 599.5L1261.8 597.1L1267.2 601L1255 603.5Z" fill="#3a546f"/><path d="M1196.6 719.4L1192.5 708.2L1197.9 712.1L1202 723.3Z" fill="#556373"/><path d="M1220.5 606.9L1232 600.2L1237.4 604.2L1225.9 610.8Z" fill="#46698e"/><path d="M1208.1 733.2L1202 723.3L1207.4 727.3L1213.5 737.2Z" fill="#434b54"/><path d="M1267.2 601L1279.3 600.8L1284.7 604.8L1272.7 604.9Z" fill="#31465c"/><path d="M1181.9 662.2L1186.2 649.3L1191.6 653.2L1187.3 666.1Z" fill="#4b6887"/><path d="M1221.3 745.4L1213.5 737.2L1218.9 741.1L1226.8 749.3Z" fill="#292e34"/><path d="M1209.8 615.4L1220.5 606.9L1225.9 610.8L1215.2 619.4Z" fill="#4b7097"/><path d="M1185 692L1185.1 679.2L1190.5 683.1L1190.4 696Z" fill="#546c86"/><path d="M1284.7 604.8L1296.2 606.9L1301.7 610.8L1290.2 608.7Z" fill="#283747"/><path d="M1236.1 755.7L1226.8 749.3L1232.2 753.3L1241.5 759.7Z" fill="#121517"/><path d="M1237.4 604.2L1249.5 599.5L1255 603.5L1242.9 608.1Z" fill="#416080"/><path d="M1186.2 649.3L1192.4 637L1197.8 640.9L1191.6 653.2Z" fill="#4d6f92"/><path d="M1200.3 625.6L1209.8 615.4L1215.2 619.4L1205.8 629.5Z" fill="#4d739a"/><path d="M1301.7 610.8L1312.2 615.1L1317.7 619L1307.1 614.7Z" fill="#1e2832"/><path d="M1192.4 637L1200.3 625.6L1205.8 629.5L1197.8 640.9Z" fill="#4e7299"/><path d="M1317.7 619L1327 625.4L1332.4 629.3L1323.1 623Z" fill="#14191e"/><path d="M1192.5 708.2L1190.4 696L1195.9 699.9L1197.9 712.1Z" fill="#54677d"/><path d="M1185.1 679.2L1187.3 666.1L1192.7 670.1L1190.5 683.1Z" fill="#465e78"/><path d="M1255 603.5L1267.2 601L1272.7 604.9L1260.4 607.4Z" fill="#3a546f"/><path d="M1202 723.3L1197.9 712.1L1203.3 716L1207.4 727.3Z" fill="#556373"/><path d="M1225.9 610.8L1237.4 604.2L1242.9 608.1L1231.3 614.8Z" fill="#46698e"/><path d="M1213.5 737.2L1207.4 727.3L1212.9 731.2L1218.9 741.1Z" fill="#434b54"/><path d="M1272.7 604.9L1284.7 604.8L1290.2 608.7L1278.1 608.9Z" fill="#31465c"/><path d="M1187.3 666.1L1191.6 653.2L1197 657.2L1192.7 670.1Z" fill="#4b6887"/><path d="M1226.8 749.3L1218.9 741.1L1224.4 745L1232.2 753.3Z" fill="#292e34"/><path d="M1215.2 619.4L1225.9 610.8L1231.3 614.8L1220.6 623.3Z" fill="#4b7097"/><path d="M1190.4 696L1190.5 683.1L1195.9 687.1L1195.9 699.9Z" fill="#546c86"/><path d="M1290.2 608.7L1301.7 610.8L1307.1 614.7L1295.6 612.6Z" fill="#283747"/><path d="M1241.5 759.7L1232.2 753.3L1237.6 757.2L1247 763.6Z" fill="#121517"/><path d="M1242.9 608.1L1255 603.5L1260.4 607.4L1248.3 612Z" fill="#416080"/><path d="M1191.6 653.2L1197.8 640.9L1203.2 644.8L1197 657.2Z" fill="#4d6f92"/><path d="M1205.8 629.5L1215.2 619.4L1220.6 623.3L1211.2 633.4Z" fill="#4d739a"/><path d="M1307.1 614.7L1317.7 619L1323.1 623L1312.5 618.7Z" fill="#1e2832"/><path d="M1197.8 640.9L1205.8 629.5L1211.2 633.4L1203.2 644.8Z" fill="#4e7299"/><path d="M1323.1 623L1332.4 629.3L1337.9 633.3L1328.5 626.9Z" fill="#14191e"/><path d="M1197.9 712.1L1195.9 699.9L1201.3 703.8L1203.3 716Z" fill="#54677d"/><path d="M1190.5 683.1L1192.7 670.1L1198.2 674L1195.9 687.1Z" fill="#465e78"/><path d="M1260.4 607.4L1272.7 604.9L1278.1 608.9L1265.8 611.3Z" fill="#3a546f"/><path d="M1207.4 727.3L1203.3 716L1208.8 720L1212.9 731.2Z" fill="#556373"/><path d="M1231.3 614.8L1242.9 608.1L1248.3 612L1236.7 618.7Z" fill="#46698e"/><path d="M1218.9 741.1L1212.9 731.2L1218.3 735.1L1224.4 745Z" fill="#434b54"/><path d="M1278.1 608.9L1290.2 608.7L1295.6 612.6L1283.5 612.8Z" fill="#31465c"/><path d="M1192.7 670.1L1197 657.2L1202.4 661.1L1198.2 674Z" fill="#4b6887"/><path d="M1232.2 753.3L1224.4 745L1229.8 749L1237.6 757.2Z" fill="#292e34"/><path d="M1220.6 623.3L1231.3 614.8L1236.7 618.7L1226.1 627.2Z" fill="#4b7097"/><path d="M1195.9 699.9L1195.9 687.1L1201.4 691L1201.3 703.8Z" fill="#546c86"/><path d="M1295.6 612.6L1307.1 614.7L1312.5 618.7L1301 616.6Z" fill="#283747"/><path d="M1247 763.6L1237.6 757.2L1243 761.2L1252.4 767.5Z" fill="#121517"/><path d="M1248.3 612L1260.4 607.4L1265.8 611.3L1253.7 616Z" fill="#416080"/><path d="M1197 657.2L1203.2 644.8L1208.6 648.8L1202.4 661.1Z" fill="#4d6f92"/><path d="M1211.2 633.4L1220.6 623.3L1226.1 627.2L1216.6 637.4Z" fill="#4d739a"/><path d="M1312.5 618.7L1323.1 623L1328.5 626.9L1317.9 622.6Z" fill="#1e2832"/><path d="M1203.2 644.8L1211.2 633.4L1216.6 637.4L1208.6 648.8Z" fill="#4e7299"/><path d="M1328.5 626.9L1337.9 633.3L1343.3 637.2L1333.9 630.8Z" fill="#14191e"/><path d="M1203.3 716L1201.3 703.8L1206.7 707.8L1208.8 720Z" fill="#54677d"/><path d="M1195.9 687.1L1198.2 674L1203.6 677.9L1201.4 691Z" fill="#465e78"/><path d="M1265.8 611.3L1278.1 608.9L1283.5 612.8L1271.2 615.3Z" fill="#3a546f"/><path d="M1212.9 731.2L1208.8 720L1214.2 723.9L1218.3 735.1Z" fill="#556373"/><path d="M1236.7 618.7L1248.3 612L1253.7 616L1242.2 622.6Z" fill="#46698e"/><path d="M1224.4 745L1218.3 735.1L1223.7 739.1L1229.8 749Z" fill="#434b54"/><path d="M1283.5 612.8L1295.6 612.6L1301 616.6L1288.9 616.8Z" fill="#31465c"/><path d="M1198.2 674L1202.4 661.1L1207.9 665L1203.6 677.9Z" fill="#4b6887"/><path d="M1237.6 757.2L1229.8 749L1235.2 752.9L1243 761.2Z" fill="#292e34"/><path d="M1226.1 627.2L1236.7 618.7L1242.2 622.6L1231.5 631.2Z" fill="#4b7097"/><path d="M1201.3 703.8L1201.4 691L1206.8 694.9L1206.7 707.8Z" fill="#546c86"/><path d="M1301 616.6L1312.5 618.7L1317.9 622.6L1306.4 620.5Z" fill="#283747"/><path d="M1252.4 767.5L1243 761.2L1248.5 765.1L1257.8 771.5Z" fill="#121517"/><path d="M1253.7 616L1265.8 611.3L1271.2 615.3L1259.1 619.9Z" fill="#416080"/><path d="M1202.4 661.1L1208.6 648.8L1214.1 652.7L1207.9 665Z" fill="#4d6f92"/><path d="M1216.6 637.4L1226.1 627.2L1231.5 631.2L1222 641.3Z" fill="#4d739a"/><path d="M1317.9 622.6L1328.5 626.9L1333.9 630.8L1323.4 626.5Z" fill="#1e2832"/><path d="M1208.6 648.8L1216.6 637.4L1222 641.3L1214.1 652.7Z" fill="#4e7299"/><path d="M1333.9 630.8L1343.3 637.2L1348.7 641.1L1339.4 634.8Z" fill="#14191e"/><path d="M1208.8 720L1206.7 707.8L1212.1 711.7L1214.2 723.9Z" fill="#54677d"/><path d="M1201.4 691L1203.6 677.9L1209 681.9L1206.8 694.9Z" fill="#465e78"/><path d="M1271.2 615.3L1283.5 612.8L1288.9 616.8L1276.7 619.2Z" fill="#3a546f"/><path d="M1218.3 735.1L1214.2 723.9L1219.6 727.8L1223.7 739.1Z" fill="#556373"/><path d="M1242.2 622.6L1253.7 616L1259.1 619.9L1247.6 626.6Z" fill="#46698e"/><path d="M1229.8 749L1223.7 739.1L1229.1 743L1235.2 752.9Z" fill="#434b54"/><path d="M1288.9 616.8L1301 616.6L1306.4 620.5L1294.4 620.7Z" fill="#31465c"/><path d="M1203.6 677.9L1207.9 665L1213.3 669L1209 681.9Z" fill="#4b6887"/><path d="M1243 761.2L1235.2 752.9L1240.6 756.8L1248.5 765.1Z" fill="#292e34"/><path d="M1231.5 631.2L1242.2 622.6L1247.6 626.6L1236.9 635.1Z" fill="#4b7097"/><path d="M1206.7 707.8L1206.8 694.9L1212.2 698.9L1212.1 711.7Z" fill="#546c86"/><path d="M1306.4 620.5L1317.9 622.6L1323.4 626.5L1311.9 624.4Z" fill="#283747"/><path d="M1257.8 771.5L1248.5 765.1L1253.9 769L1263.2 775.4Z" fill="#121517"/><path d="M1259.1 619.9L1271.2 615.3L1276.7 619.2L1264.6 623.8Z" fill="#416080"/><path d="M1207.9 665L1214.1 652.7L1219.5 656.6L1213.3 669Z" fill="#4d6f92"/><path d="M1222 641.3L1231.5 631.2L1236.9 635.1L1227.5 645.2Z" fill="#4d739a"/><path d="M1323.4 626.5L1333.9 630.8L1339.4 634.8L1328.8 630.5Z" fill="#1e2832"/><path d="M1214.1 652.7L1222 641.3L1227.5 645.2L1219.5 656.6Z" fill="#4e7299"/><path d="M1339.4 634.8L1348.7 641.1L1354.1 645.1L1344.8 638.7Z" fill="#14191e"/><path d="M1214.2 723.9L1212.1 711.7L1217.6 715.6L1219.6 727.8Z" fill="#54677d"/><path d="M1206.8 694.9L1209 681.9L1214.4 685.8L1212.2 698.9Z" fill="#465e78"/><path d="M1276.7 619.2L1288.9 616.8L1294.4 620.7L1282.1 623.1Z" fill="#3a546f"/><path d="M1223.7 739.1L1219.6 727.8L1225 731.8L1229.1 743Z" fill="#556373"/><path d="M1247.6 626.6L1259.1 619.9L1264.6 623.8L1253 630.5Z" fill="#46698e"/><path d="M1235.2 752.9L1229.1 743L1234.6 746.9L1240.6 756.8Z" fill="#434b54"/><path d="M1294.4 620.7L1306.4 620.5L1311.9 624.4L1299.8 624.6Z" fill="#31465c"/><path d="M1209 681.9L1213.3 669L1218.7 672.9L1214.4 685.8Z" fill="#4b6887"/><path d="M1248.5 765.1L1240.6 756.8L1246.1 760.8L1253.9 769Z" fill="#292e34"/><path d="M1236.9 635.1L1247.6 626.6L1253 630.5L1242.3 639Z" fill="#4b7097"/><path d="M1212.1 711.7L1212.2 698.9L1217.6 702.8L1217.6 715.6Z" fill="#546c86"/><path d="M1311.9 624.4L1323.4 626.5L1328.8 630.5L1317.3 628.4Z" fill="#283747"/><path d="M1263.2 775.4L1253.9 769L1259.3 773L1268.6 779.3Z" fill="#121517"/><path d="M1264.6 623.8L1276.7 619.2L1282.1 623.1L1270 627.8Z" fill="#416080"/><path d="M1213.3 669L1219.5 656.6L1224.9 660.6L1218.7 672.9Z" fill="#4d6f92"/><path d="M1227.5 645.2L1236.9 635.1L1242.3 639L1232.9 649.2Z" fill="#4d739a"/><path d="M1328.8 630.5L1339.4 634.8L1344.8 638.7L1334.2 634.4Z" fill="#1e2832"/><path d="M1219.5 656.6L1227.5 645.2L1232.9 649.2L1224.9 660.6Z" fill="#4e7299"/><path d="M1344.8 638.7L1354.1 645.1L1359.6 649L1350.2 642.6Z" fill="#14191e"/><path d="M1219.6 727.8L1217.6 715.6L1223 719.6L1225 731.8Z" fill="#54677d"/><path d="M1212.2 698.9L1214.4 685.8L1219.9 689.7L1217.6 702.8Z" fill="#465e78"/><path d="M1282.1 623.1L1294.4 620.7L1299.8 624.6L1287.5 627.1Z" fill="#3a546f"/><path d="M1229.1 743L1225 731.8L1230.5 735.7L1234.6 746.9Z" fill="#556373"/><path d="M1253 630.5L1264.6 623.8L1270 627.8L1258.4 634.4Z" fill="#46698e"/><path d="M1240.6 756.8L1234.6 746.9L1240 750.9L1246.1 760.8Z" fill="#434b54"/><path d="M1299.8 624.6L1311.9 624.4L1317.3 628.4L1305.2 628.6Z" fill="#31465c"/><path d="M1214.4 685.8L1218.7 672.9L1224.1 676.8L1219.9 689.7Z" fill="#4b6887"/><path d="M1253.9 769L1246.1 760.8L1251.5 764.7L1259.3 773Z" fill="#292e34"/><path d="M1242.3 639L1253 630.5L1258.4 634.4L1247.8 643Z" fill="#4b7097"/><path d="M1217.6 715.6L1217.6 702.8L1223.1 706.7L1223 719.6Z" fill="#546c86"/><path d="M1317.3 628.4L1328.8 630.5L1334.2 634.4L1322.7 632.3Z" fill="#283747"/><path d="M1268.6 779.3L1259.3 773L1264.7 776.9L1274.1 783.3Z" fill="#121517"/><path d="M1270 627.8L1282.1 623.1L1287.5 627.1L1275.4 631.7Z" fill="#416080"/><path d="M1218.7 672.9L1224.9 660.6L1230.3 664.5L1224.1 676.8Z" fill="#4d6f92"/><path d="M1232.9 649.2L1242.3 639L1247.8 643L1238.3 653.1Z" fill="#4d739a"/><path d="M1334.2 634.4L1344.8 638.7L1350.2 642.6L1339.6 638.3Z" fill="#1e2832"/><path d="M1224.9 660.6L1232.9 649.2L1238.3 653.1L1230.3 664.5Z" fill="#4e7299"/><path d="M1350.2 642.6L1359.6 649L1365 653L1355.6 646.6Z" fill="#14191e"/><path d="M1225 731.8L1223 719.6L1228.4 723.5L1230.5 735.7Z" fill="#54677d"/><path d="M1217.6 702.8L1219.9 689.7L1225.3 693.7L1223.1 706.7Z" fill="#465e78"/><path d="M1287.5 627.1L1299.8 624.6L1305.2 628.6L1292.9 631Z" fill="#3a546f"/><path d="M1234.6 746.9L1230.5 735.7L1235.9 739.6L1240 750.9Z" fill="#556373"/><path d="M1258.4 634.4L1270 627.8L1275.4 631.7L1263.9 638.4Z" fill="#46698e"/><path d="M1246.1 760.8L1240 750.9L1245.4 754.8L1251.5 764.7Z" fill="#434b54"/><path d="M1305.2 628.6L1317.3 628.4L1322.7 632.3L1310.6 632.5Z" fill="#31465c"/><path d="M1219.9 689.7L1224.1 676.8L1229.6 680.8L1225.3 693.7Z" fill="#4b6887"/><path d="M1259.3 773L1251.5 764.7L1256.9 768.6L1264.7 776.9Z" fill="#292e34"/><path d="M1247.8 643L1258.4 634.4L1263.9 638.4L1253.2 646.9Z" fill="#4b7097"/><path d="M1223 719.6L1223.1 706.7L1228.5 710.7L1228.4 723.5Z" fill="#546c86"/><path d="M1322.7 632.3L1334.2 634.4L1339.6 638.3L1328.1 636.2Z" fill="#283747"/><path d="M1274.1 783.3L1264.7 776.9L1270.2 780.8L1279.5 787.2Z" fill="#121517"/><path d="M1275.4 631.7L1287.5 627.1L1292.9 631L1280.8 635.6Z" fill="#416080"/><path d="M1224.1 676.8L1230.3 664.5L1235.8 668.4L1229.6 680.8Z" fill="#4d6f92"/><path d="M1238.3 653.1L1247.8 643L1253.2 646.9L1243.7 657Z" fill="#4d739a"/><path d="M1339.6 638.3L1350.2 642.6L1355.6 646.6L1345.1 642.3Z" fill="#1e2832"/><path d="M1230.3 664.5L1238.3 653.1L1243.7 657L1235.8 668.4Z" fill="#4e7299"/><path d="M1355.6 646.6L1365 653L1370.4 656.9L1361.1 650.5Z" fill="#14191e"/><path d="M1230.5 735.7L1228.4 723.5L1233.8 727.4L1235.9 739.6Z" fill="#54677d"/><path d="M1223.1 706.7L1225.3 693.7L1230.7 697.6L1228.5 710.7Z" fill="#465e78"/><path d="M1292.9 631L1305.2 628.6L1310.6 632.5L1298.4 634.9Z" fill="#3a546f"/><path d="M1240 750.9L1235.9 739.6L1241.3 743.6L1245.4 754.8Z" fill="#556373"/><path d="M1263.9 638.4L1275.4 631.7L1280.8 635.6L1269.3 642.3Z" fill="#46698e"/><path d="M1251.5 764.7L1245.4 754.8L1250.8 758.7L1256.9 768.6Z" fill="#434b54"/><path d="M1310.6 632.5L1322.7 632.3L1328.1 636.2L1316.1 636.4Z" fill="#31465c"/><path d="M1225.3 693.7L1229.6 680.8L1235 684.7L1230.7 697.6Z" fill="#4b6887"/><path d="M1264.7 776.9L1256.9 768.6L1262.3 772.6L1270.2 780.8Z" fill="#292e34"/><path d="M1253.2 646.9L1263.9 638.4L1269.3 642.3L1258.6 650.9Z" fill="#4b7097"/><path d="M1228.4 723.5L1228.5 710.7L1233.9 714.6L1233.8 727.4Z" fill="#546c86"/><path d="M1328.1 636.2L1339.6 638.3L1345.1 642.3L1333.6 640.2Z" fill="#283747"/><path d="M1280.8 635.6L1292.9 631L1298.4 634.9L1286.3 639.6Z" fill="#416080"/><path d="M1229.6 680.8L1235.8 668.4L1241.2 672.4L1235 684.7Z" fill="#4d6f92"/><path d="M1243.7 657L1253.2 646.9L1258.6 650.9L1249.1 661Z" fill="#4d739a"/><path d="M1345.1 642.3L1355.6 646.6L1361.1 650.5L1350.5 646.2Z" fill="#1e2832"/><path d="M1235.8 668.4L1243.7 657L1249.1 661L1241.2 672.4Z" fill="#4e7299"/><path d="M1235.9 739.6L1233.8 727.4L1239.3 731.4L1241.3 743.6Z" fill="#54677d"/><path d="M1228.5 710.7L1230.7 697.6L1236.1 701.5L1233.9 714.6Z" fill="#465e78"/><path d="M1298.4 634.9L1310.6 632.5L1316.1 636.4L1303.8 638.9Z" fill="#3a546f"/><path d="M1245.4 754.8L1241.3 743.6L1246.7 747.5L1250.8 758.7Z" fill="#556373"/><path d="M1269.3 642.3L1280.8 635.6L1286.3 639.6L1274.7 646.3Z" fill="#46698e"/><path d="M1256.9 768.6L1250.8 758.7L1256.3 762.7L1262.3 772.6Z" fill="#434b54"/><path d="M1316.1 636.4L1328.1 636.2L1333.6 640.2L1321.5 640.4Z" fill="#31465c"/><path d="M1230.7 697.6L1235 684.7L1240.4 688.6L1236.1 701.5Z" fill="#4b6887"/><path d="M1258.6 650.9L1269.3 642.3L1274.7 646.3L1264 654.8Z" fill="#4b7097"/><path d="M1233.8 727.4L1233.9 714.6L1239.3 718.5L1239.3 731.4Z" fill="#546c86"/><path d="M1333.6 640.2L1345.1 642.3L1350.5 646.2L1339 644.1Z" fill="#283747"/><path d="M1286.3 639.6L1298.4 634.9L1303.8 638.9L1291.7 643.5Z" fill="#416080"/><path d="M1235 684.7L1241.2 672.4L1246.6 676.3L1240.4 688.6Z" fill="#4d6f92"/><path d="M1249.1 661L1258.6 650.9L1264 654.8L1254.6 664.9Z" fill="#4d739a"/><path d="M1241.2 672.4L1249.1 661L1254.6 664.9L1246.6 676.3Z" fill="#4e7299"/><path d="M1241.3 743.6L1239.3 731.4L1244.7 735.3L1246.7 747.5Z" fill="#54677d"/><path d="M1233.9 714.6L1236.1 701.5L1241.6 705.5L1239.3 718.5Z" fill="#465e78"/><path d="M1303.8 638.9L1316.1 636.4L1321.5 640.4L1309.2 642.8Z" fill="#3a546f"/><path d="M1250.8 758.7L1246.7 747.5L1252.1 751.5L1256.3 762.7Z" fill="#556373"/><path d="M1274.7 646.3L1286.3 639.6L1291.7 643.5L1280.1 650.2Z" fill="#46698e"/><path d="M1321.5 640.4L1333.6 640.2L1339 644.1L1326.9 644.3Z" fill="#31465c"/><path d="M1236.1 701.5L1240.4 688.6L1245.8 692.6L1241.6 705.5Z" fill="#4b6887"/><path d="M1264 654.8L1274.7 646.3L1280.1 650.2L1269.5 658.7Z" fill="#4b7097"/><path d="M1239.3 731.4L1239.3 718.5L1244.8 722.5L1244.7 735.3Z" fill="#546c86"/><path d="M1291.7 643.5L1303.8 638.9L1309.2 642.8L1297.1 647.4Z" fill="#416080"/><path d="M1240.4 688.6L1246.6 676.3L1252 680.2L1245.8 692.6Z" fill="#4d6f92"/><path d="M1254.6 664.9L1264 654.8L1269.5 658.7L1260 668.8Z" fill="#4d739a"/><path d="M1246.6 676.3L1254.6 664.9L1260 668.8L1252 680.2Z" fill="#4e7299"/><path d="M1246.7 747.5L1244.7 735.3L1250.1 739.2L1252.1 751.5Z" fill="#54677d"/><path d="M1239.3 718.5L1241.6 705.5L1247 709.4L1244.8 722.5Z" fill="#465e78"/><path d="M1309.2 642.8L1321.5 640.4L1326.9 644.3L1314.6 646.7Z" fill="#3a546f"/><path d="M1280.1 650.2L1291.7 643.5L1297.1 647.4L1285.5 654.1Z" fill="#46698e"/><path d="M1241.6 705.5L1245.8 692.6L1251.3 696.5L1247 709.4Z" fill="#4b6887"/><path d="M1269.5 658.7L1280.1 650.2L1285.5 654.1L1274.9 662.7Z" fill="#4b7097"/><path d="M1244.7 735.3L1244.8 722.5L1250.2 726.4L1250.1 739.2Z" fill="#546c86"/><path d="M1297.1 647.4L1309.2 642.8L1314.6 646.7L1302.5 651.4Z" fill="#416080"/><path d="M1245.8 692.6L1252 680.2L1257.5 684.2L1251.3 696.5Z" fill="#4d6f92"/><path d="M1260 668.8L1269.5 658.7L1274.9 662.7L1265.4 672.8Z" fill="#4d739a"/><path d="M1252 680.2L1260 668.8L1265.4 672.8L1257.5 684.2Z" fill="#4e7299"/><path d="M1244.8 722.5L1247 709.4L1252.4 713.3L1250.2 726.4Z" fill="#465e78"/><path d="M1285.5 654.1L1297.1 647.4L1302.5 651.4L1291 658.1Z" fill="#46698e"/><path d="M1247 709.4L1251.3 696.5L1256.7 700.4L1252.4 713.3Z" fill="#4b6887"/><path d="M1274.9 662.7L1285.5 654.1L1291 658.1L1280.3 666.6Z" fill="#4b7097"/><path d="M1251.3 696.5L1257.5 684.2L1262.9 688.1L1256.7 700.4Z" fill="#4d6f92"/><path d="M1265.4 672.8L1274.9 662.7L1280.3 666.6L1270.8 676.7Z" fill="#4d739a"/><path d="M1257.5 684.2L1265.4 672.8L1270.8 676.7L1262.9 688.1Z" fill="#4e7299"/></g>
<path d="M600 546L975 507" stroke="#cfd8e0" stroke-width="2.4" opacity="0.9" stroke-dasharray="40 2 30 3 60 2"/>
<path d="M600 564L997 525" stroke="#cfd8e0" stroke-width="3" opacity="0.85" stroke-dasharray="50 2 35 3 40 2"/>
<path d="M620 586L960 549" stroke="#cfd8e0" stroke-width="1.4" opacity="0.5" stroke-dasharray="8 3 5 4"/>
<path d="M640 610L940 578" stroke="#cfd8e0" stroke-width="1.3" opacity="0.4" stroke-dasharray="6 4 9 5"/>
<path d="M660 635L900 609" stroke="#cfd8e0" stroke-width="1.2" opacity="0.35" stroke-dasharray="5 5"/>
<path d="M1055 539L1262 684" stroke="#cfd8e0" stroke-width="2.6" opacity="0.75" stroke-dasharray="30 3 25 3"/>
<path d="M1150 625L1300 735" stroke="#cfd8e0" stroke-width="1.2" opacity="0.4" stroke-dasharray="6 5"/>
<g fill="#d8e0e8"><path d="M995.3 539.3L1004.5 539.4L998.7 542.6Z"/><path d="M1036.4 537.2L1040.7 535.5L1036.7 541.9Z"/><path d="M1018.2 539.0L1027.2 539.3L1021.8 545.8Z"/><path d="M1012.2 525.9L1023.0 524.5L1013.4 530.1Z"/><path d="M1019.7 555.7L1028.8 555.9L1020.3 560.2Z"/><path d="M1022.0 533.0L1031.4 532.2L1027.5 537.7Z"/><path d="M978.8 532.9L989.1 531.9L984.7 538.7Z"/><path d="M999.8 507.4L1011.7 507.1L1008.8 510.9Z"/><path d="M1023.1 549.7L1027.4 550.8L1025.6 555.4Z"/><path d="M1021.5 512.3L1031.0 512.6L1025.8 517.7Z"/><path d="M959.3 532.7L963.8 533.3L963.7 538.6Z"/><path d="M1013.7 509.3L1020.8 507.4L1017.0 515.0Z"/><path d="M1010.4 537.4L1014.8 535.9L1011.5 543.5Z"/><path d="M1031.7 539.7L1040.0 541.0L1038.9 546.2Z"/><path d="M997.5 551.5L1004.3 553.3L998.5 558.0Z"/><path d="M1012.7 542.6L1018.6 543.0L1014.3 547.5Z"/><path d="M1034.3 527.6L1041.2 529.5L1039.1 532.9Z"/><path d="M961.6 523.8L971.0 525.4L968.9 527.0Z"/><path d="M979.4 542.2L984.2 540.4L979.7 547.7Z"/><path d="M1007.6 540.8L1014.3 538.8L1008.6 544.0Z"/><path d="M1025.9 540.6L1030.1 541.0L1026.5 547.1Z"/><path d="M1002.6 549.2L1009.5 550.6L1009.5 552.7Z"/><path d="M969.3 532.9L974.0 532.2L970.5 536.3Z"/><path d="M1011.5 514.5L1015.6 514.6L1012.1 521.3Z"/><path d="M996.2 525.5L1004.5 526.9L1002.0 532.4Z"/><path d="M1001.0 549.9L1006.3 550.0L1005.2 556.0Z"/><path d="M992.8 542.0L1003.3 543.4L1001.2 548.9Z"/><path d="M1008.3 555.7L1015.1 553.8L1010.2 558.8Z"/><path d="M1000.3 563.8L1012.0 565.5L1011.9 568.6Z"/><path d="M1030.4 520.6L1036.2 519.4L1031.6 524.5Z"/><path d="M1021.4 503.9L1030.7 502.2L1027.5 510.1Z"/><path d="M1003.0 499.6L1008.5 499.0L1007.4 505.8Z"/><path d="M1032.6 522.7L1039.9 523.6L1033.9 529.5Z"/><path d="M1015.0 536.8L1026.2 535.4L1024.3 543.1Z"/><path d="M1046.6 522.7L1053.4 521.2L1046.7 527.9Z"/><path d="M1045.7 520.7L1053.9 520.4L1052.9 527.4Z"/><path d="M1012.5 512.3L1018.5 511.3L1016.0 516.5Z"/><path d="M1001.2 552.0L1006.2 551.4L1003.5 558.6Z"/><path d="M966.0 526.7L974.2 526.5L967.5 529.8Z"/><path d="M1018.9 551.0L1028.7 550.3L1024.0 556.2Z"/><path d="M1033.2 546.0L1039.2 547.1L1036.3 550.1Z"/><path d="M1030.7 513.4L1039.6 513.5L1036.8 518.4Z"/><path d="M967.6 535.7L975.4 536.5L974.5 542.5Z"/><path d="M1024.7 520.4L1033.2 521.7L1025.9 527.2Z"/><path d="M1026.4 544.9L1031.0 543.2L1029.5 548.9Z"/><path d="M1029.9 558.4L1039.2 560.0L1038.9 562.0Z"/><path d="M975.2 543.6L987.1 542.2L980.3 549.9Z"/><path d="M975.8 524.9L981.4 525.8L975.9 529.1Z"/><path d="M972.5 518.4L976.7 518.9L974.6 522.7Z"/><path d="M1021.6 538.5L1026.0 537.6L1022.2 544.7Z"/><path d="M1012.7 510.2L1017.9 510.4L1016.4 516.8Z"/></g>
<clipPath id="cap0"><path d="M601.8 606.4L602.2 601.5L602.4 596.4L602.4 591.3L602.2 586.2L601.9 581L601.5 575.8L600.8 570.6L600 565.4L599.1 560.3L598 555.3L596.8 550.4L595.4 545.6L593.9 541L592.2 536.5L590.4 532.2L588.6 528.1L586.6 524.2L584.5 520.5L582.3 517.1L580.1 514L577.7 511.1L575.4 508.5L572.9 506.3L570.5 504.3L568 502.7L565.5 501.3L562.9 500.4L560.4 499.7L557.9 499.4L555.4 499.4L553 499.8L550.6 500.5L548.3 501.6L546 502.9L543.8 504.6L541.7 506.7L539.7 509L537.8 511.6L536 514.5L534.3 517.7L532.7 521.2L531.3 524.9L530 528.8L528.9 533L527.9 537.3L527.1 541.8L526.4 546.5L525.9 551.3L525.5 556.2L525.3 561.3L525.3 566.4L525.5 571.5L525.8 576.7L526.2 581.9L526.9 587.1L527.6 592.3L528.6 597.4L529.7 602.4L530.9 607.3L532.3 612.1L533.8 616.8L535.5 621.2L537.2 625.6L539.1 629.7L541.1 633.5L543.2 637.2L545.4 640.6L547.6 643.8L549.9 646.6L552.3 649.2L554.7 651.5L557.2 653.4L559.7 655.1L562.2 656.4L564.8 657.4L567.3 658L569.8 658.3L572.3 658.3L574.7 657.9L577.1 657.2L579.4 656.2L581.7 654.8L583.9 653.1L586 651.1L588 648.7L589.9 646.1L591.7 643.2L593.4 640L595 636.5L596.4 632.8L597.7 628.9L598.8 624.8L599.8 620.4L600.6 615.9L601.3 611.2Z"/></clipPath><path d="M601.8 606.4L602.2 601.5L602.4 596.4L602.4 591.3L602.2 586.2L601.9 581L601.5 575.8L600.8 570.6L600 565.4L599.1 560.3L598 555.3L596.8 550.4L595.4 545.6L593.9 541L592.2 536.5L590.4 532.2L588.6 528.1L586.6 524.2L584.5 520.5L582.3 517.1L580.1 514L577.7 511.1L575.4 508.5L572.9 506.3L570.5 504.3L568 502.7L565.5 501.3L562.9 500.4L560.4 499.7L557.9 499.4L555.4 499.4L553 499.8L550.6 500.5L548.3 501.6L546 502.9L543.8 504.6L541.7 506.7L539.7 509L537.8 511.6L536 514.5L534.3 517.7L532.7 521.2L531.3 524.9L530 528.8L528.9 533L527.9 537.3L527.1 541.8L526.4 546.5L525.9 551.3L525.5 556.2L525.3 561.3L525.3 566.4L525.5 571.5L525.8 576.7L526.2 581.9L526.9 587.1L527.6 592.3L528.6 597.4L529.7 602.4L530.9 607.3L532.3 612.1L533.8 616.8L535.5 621.2L537.2 625.6L539.1 629.7L541.1 633.5L543.2 637.2L545.4 640.6L547.6 643.8L549.9 646.6L552.3 649.2L554.7 651.5L557.2 653.4L559.7 655.1L562.2 656.4L564.8 657.4L567.3 658L569.8 658.3L572.3 658.3L574.7 657.9L577.1 657.2L579.4 656.2L581.7 654.8L583.9 653.1L586 651.1L588 648.7L589.9 646.1L591.7 643.2L593.4 640L595 636.5L596.4 632.8L597.7 628.9L598.8 624.8L599.8 620.4L600.6 615.9L601.3 611.2Z" fill="#23354a"/><g clip-path="url(#cap0)" fill="#34485e"><path d="M576.4 549.6L581.4 548.9L578.6 540.5Z"/><path d="M527.6 558L532.9 559.9L530 554.3Z"/><path d="M558.1 614.9L562.2 616.5L557.2 608.1Z"/><path d="M552.6 504.6L557.1 509.8L554.6 500.4Z"/><path d="M567.8 641L570.4 639.1L567.6 634.7Z"/><path d="M605.4 549.9L608.9 548L606.7 541.8Z"/><path d="M547.3 496.8L552 495.8L549.7 491.9Z"/><path d="M548.9 621L551.4 625.5L549.2 612.7Z"/><path d="M528.5 525L531.7 528L530.7 518.8Z"/><path d="M549.6 571.5L553.8 577.3L552.2 568.5Z"/><path d="M587.4 541.2L590 540L588 533.2Z"/><path d="M520.6 619.4L523.8 617.3L520.6 609.9Z"/><path d="M602.3 536.6L605.6 539.4L603.6 527.9Z"/><path d="M537.4 520.2L542.4 520.2L536.9 509.1Z"/><path d="M530.7 580.1L535.2 579.2L531.3 569.9Z"/><path d="M564.8 609.3L567.9 613.3L564 603.1Z"/><path d="M584.8 515.2L587.3 519.8L587.7 509.2Z"/><path d="M553.2 612.8L557.6 612.6L554 606Z"/><path d="M535.6 492.3L538.1 493.4L537.7 488.3Z"/><path d="M587.4 524.5L591.8 524.7L586.9 516.7Z"/><path d="M541.8 508.1L545 510L544.9 500.2Z"/><path d="M599.4 612L603.4 612.3L600.2 606Z"/><path d="M551.9 626.3L555.7 624.4L554.7 619.6Z"/><path d="M561.7 602.9L564.1 605.7L564 594.3Z"/><path d="M557.1 528.6L561.9 529.7L558.9 520.3Z"/></g><path d="M499.2 651L519.1 427.3M497.4 644.9L611.3 727.5M506.1 656L525.9 432.3M498.5 631.5L612.4 714.1M512.9 661L532.8 437.3M499.7 618.1L613.6 700.7M519.7 665.9L539.6 442.2M500.9 604.6L614.8 687.3M526.6 670.9L546.4 447.2M502.1 591.2L616 673.9M533.4 675.8L553.3 452.1M503.3 577.8L617.2 660.4M540.2 680.8L560.1 457.1M504.5 564.4L618.4 647M547.1 685.7L566.9 462.1M505.7 551L619.6 633.6M553.9 690.7L573.8 467M506.9 537.5L620.8 620.2M560.7 695.7L580.6 472M508.1 524.1L622 606.8M567.6 700.6L587.5 476.9M509.3 510.7L623.2 593.3M574.4 705.6L594.3 481.9M510.5 497.3L624.4 579.9M581.2 710.5L601.1 486.8M511.7 483.9L625.6 566.5M588.1 715.5L608 491.8M512.9 470.4L626.8 553.1M594.9 720.5L614.8 496.8M514 457L628 539.7M601.7 725.4L621.6 501.7M515.2 443.6L629.1 526.2M608.6 730.4L628.5 506.7M516.4 430.2L630.3 512.8" stroke="#0b1118" stroke-width="1" fill="none" clip-path="url(#cap0)"/><path d="M601.8 606.4L602.2 601.5L602.4 596.4L602.4 591.3L602.2 586.2L601.9 581L601.5 575.8L600.8 570.6L600 565.4L599.1 560.3L598 555.3L596.8 550.4L595.4 545.6L593.9 541L592.2 536.5L590.4 532.2L588.6 528.1L586.6 524.2L584.5 520.5L582.3 517.1L580.1 514L577.7 511.1L575.4 508.5L572.9 506.3L570.5 504.3L568 502.7L565.5 501.3L562.9 500.4L560.4 499.7L557.9 499.4L555.4 499.4L553 499.8L550.6 500.5L548.3 501.6L546 502.9L543.8 504.6L541.7 506.7L539.7 509L537.8 511.6L536 514.5L534.3 517.7L532.7 521.2L531.3 524.9L530 528.8L528.9 533L527.9 537.3L527.1 541.8L526.4 546.5L525.9 551.3L525.5 556.2L525.3 561.3L525.3 566.4L525.5 571.5L525.8 576.7L526.2 581.9L526.9 587.1L527.6 592.3L528.6 597.4L529.7 602.4L530.9 607.3L532.3 612.1L533.8 616.8L535.5 621.2L537.2 625.6L539.1 629.7L541.1 633.5L543.2 637.2L545.4 640.6L547.6 643.8L549.9 646.6L552.3 649.2L554.7 651.5L557.2 653.4L559.7 655.1L562.2 656.4L564.8 657.4L567.3 658L569.8 658.3L572.3 658.3L574.7 657.9L577.1 657.2L579.4 656.2L581.7 654.8L583.9 653.1L586 651.1L588 648.7L589.9 646.1L591.7 643.2L593.4 640L595 636.5L596.4 632.8L597.7 628.9L598.8 624.8L599.8 620.4L600.6 615.9L601.3 611.2Z" fill="none" stroke="#111a24" stroke-width="1.3"/>
<path d="M532.5 476.8L1093.3 416.4M538.6 481.2L1099.3 420.8M544.7 485.6L1105.4 425.2M550.7 490L1111.5 429.6M556.8 494.4L1117.6 434M562.9 498.8L1123.6 438.4M569 503.2L1129.7 442.8M575 507.6L1135.8 447.2M581.1 512L1141.9 451.6M587.2 516.4L1147.9 456M593.3 520.8L1154 460.5M599.3 525.2L1160.1 464.9M605.4 529.6L1166.2 469.3M611.5 534L1172.2 473.7M617.6 538.5L1178.3 478.1M623.6 542.9L1184.4 482.5M629.7 547.3L1190.5 486.9M635.8 551.7L1196.5 491.3M641.9 556.1L1202.6 495.7M647.9 560.5L1208.7 500.1M654 564.9L1214.8 504.5M660.1 569.3L1220.8 508.9M666.2 573.7L1226.9 513.3M672.2 578.1L1233 517.7M678.3 582.5L1239.1 522.2M684.4 586.9L1245.1 526.6M690.5 591.3L1251.2 531M696.5 595.8L1257.3 535.4M702.6 600.2L1263.4 539.8M708.7 604.6L1269.4 544.2M714.8 609L1275.5 548.6M720.8 613.4L1281.6 553M726.9 617.8L1287.7 557.4M733 622.2L1293.7 561.8M739.1 626.6L1299.8 566.2M745.1 631L1305.9 570.6M751.2 635.4L1312 575M757.3 639.8L1318 579.5M763.4 644.2L1324.1 583.9M769.4 648.6L1330.2 588.3M775.5 653.1L1336.3 592.7M781.6 657.5L1342.3 597.1M787.7 661.9L1348.4 601.5M793.7 666.3L1354.5 605.9M799.8 670.7L1360.6 610.3M805.9 675.1L1366.6 614.7M812 679.5L1372.7 619.1M818 683.9L1378.8 623.5M824.1 688.3L1384.9 627.9M830.2 692.7L1390.9 632.3M836.3 697.1L1397 636.8M532.5 476.8L836.3 697.1M543.7 475.5L847.5 695.9M554.9 474.3L858.7 694.7M566.1 473.1L869.9 693.5M577.4 471.9L881.1 692.3M588.6 470.7L892.3 691.1M599.8 469.5L903.5 689.9M611 468.3L914.8 688.7M622.2 467.1L926 687.5M633.4 465.9L937.2 686.3M644.7 464.7L948.4 685.1M655.9 463.5L959.6 683.8M667.1 462.3L970.8 682.6M678.3 461.1L982 681.4M689.5 459.8L993.3 680.2M700.7 458.6L1004.5 679M711.9 457.4L1015.7 677.8M723.2 456.2L1026.9 676.6M734.4 455L1038.1 675.4M745.6 453.8L1049.3 674.2M756.8 452.6L1060.6 673M768 451.4L1071.8 671.8M779.2 450.2L1083 670.6M790.4 449L1094.2 669.4M801.7 447.8L1105.4 668.1M812.9 446.6L1116.6 666.9M824.1 445.4L1127.8 665.7M835.3 444.1L1139.1 664.5M846.5 442.9L1150.3 663.3M857.7 441.7L1161.5 662.1M869 440.5L1172.7 660.9M880.2 439.3L1183.9 659.7M891.4 438.1L1195.1 658.5M902.6 436.9L1206.3 657.3M913.8 435.7L1217.6 656.1M925 434.5L1228.8 654.9M936.2 433.3L1240 653.7M947.5 432.1L1251.2 652.4M958.7 430.9L1262.4 651.2M969.9 429.7L1273.6 650M981.1 428.5L1284.9 648.8M992.3 427.2L1296.1 647.6M1003.5 426L1307.3 646.4M1014.7 424.8L1318.5 645.2M1026 423.6L1329.7 644M1037.2 422.4L1340.9 642.8M1048.4 421.2L1352.1 641.6M1059.6 420L1363.4 640.4M1070.8 418.8L1374.6 639.2M1082 417.6L1385.8 638M1093.3 416.4L1397 636.8" stroke="#5f8fc4" stroke-width="1" fill="none" opacity="0.5" shape-rendering="crispEdges"/>
<path d="M519.2 625.9L532.5 476.8M525.3 630.3L538.6 481.2M531.4 634.7L544.7 485.6M537.5 639.1L550.7 490M543.5 643.5L556.8 494.4M549.6 647.9L562.9 498.8M555.7 652.3L569 503.2M561.8 656.7L575 507.6M567.8 661.1L581.1 512M573.9 665.5L587.2 516.4M580 669.9L593.3 520.8M586.1 674.4L599.3 525.2M592.1 678.8L605.4 529.6M598.2 683.2L611.5 534M604.3 687.6L617.6 538.5M610.4 692L623.6 542.9M616.4 696.4L629.7 547.3M622.5 700.8L635.8 551.7M628.6 705.2L641.9 556.1M634.7 709.6L647.9 560.5M640.7 714L654 564.9M646.8 718.4L660.1 569.3M652.9 722.8L666.2 573.7M659 727.2L672.2 578.1M665 731.7L678.3 582.5M671.1 736.1L684.4 586.9M677.2 740.5L690.5 591.3M683.3 744.9L696.5 595.8M689.3 749.3L702.6 600.2M695.4 753.7L708.7 604.6M701.5 758.1L714.8 609M707.6 762.5L720.8 613.4M713.6 766.9L726.9 617.8M719.7 771.3L733 622.2M725.8 775.7L739.1 626.6M731.9 780.1L745.1 631M737.9 784.5L751.2 635.4M744 789L757.3 639.8M750.1 793.4L763.4 644.2M756.2 797.8L769.4 648.6M762.2 802.2L775.5 653.1M768.3 806.6L781.6 657.5M774.4 811L787.7 661.9M780.5 815.4L793.7 666.3M786.5 819.8L799.8 670.7M792.6 824.2L805.9 675.1M798.7 828.6L812 679.5M804.8 833L818 683.9M810.8 837.4L824.1 688.3M816.9 841.8L830.2 692.7M823 846.2L836.3 697.1M519.2 625.9L823 846.2M520.6 611L824.3 831.3M521.9 596L825.6 816.4M523.2 581.1L827 801.5M524.5 566.2L828.3 786.6M525.9 551.3L829.6 771.7M527.2 536.4L831 756.8M528.5 521.5L832.3 741.9M529.9 506.6L833.6 727M531.2 491.7L834.9 712M532.5 476.8L836.3 697.1" stroke="#3e6ca6" stroke-width="1" fill="none" opacity="0.9" shape-rendering="crispEdges"/>
<path d="M823 846.2L836.3 697.1M834.2 845L847.5 695.9M845.4 843.8L858.7 694.7M856.6 842.6L869.9 693.5M867.9 841.4L881.1 692.3M879.1 840.2L892.3 691.1M890.3 839L903.5 689.9M901.5 837.8L914.8 688.7M912.7 836.6L926 687.5M923.9 835.4L937.2 686.3M935.1 834.2L948.4 685.1M946.4 833L959.6 683.8M957.6 831.8L970.8 682.6M968.8 830.6L982 681.4M980 829.3L993.3 680.2M991.2 828.1L1004.5 679M1002.4 826.9L1015.7 677.8M1013.7 825.7L1026.9 676.6M1024.9 824.5L1038.1 675.4M1036.1 823.3L1049.3 674.2M1047.3 822.1L1060.6 673M1058.5 820.9L1071.8 671.8M1069.7 819.7L1083 670.6M1080.9 818.5L1094.2 669.4M1092.2 817.3L1105.4 668.1M1103.4 816.1L1116.6 666.9M1114.6 814.9L1127.8 665.7M1125.8 813.6L1139.1 664.5M1137 812.4L1150.3 663.3M1148.2 811.2L1161.5 662.1M1159.4 810L1172.7 660.9M1170.7 808.8L1183.9 659.7M1181.9 807.6L1195.1 658.5M1193.1 806.4L1206.3 657.3M1204.3 805.2L1217.6 656.1M1215.5 804L1228.8 654.9M1226.7 802.8L1240 653.7M1238 801.6L1251.2 652.4M1249.2 800.4L1262.4 651.2M1260.4 799.2L1273.6 650M1271.6 797.9L1284.9 648.8M1282.8 796.7L1296.1 647.6M1294 795.5L1307.3 646.4M1305.2 794.3L1318.5 645.2M1316.5 793.1L1329.7 644M1327.7 791.9L1340.9 642.8M1338.9 790.7L1352.1 641.6M1350.1 789.5L1363.4 640.4M1361.3 788.3L1374.6 639.2M1372.5 787.1L1385.8 638M1383.7 785.9L1397 636.8M823 846.2L1383.7 785.9M824.3 831.3L1385.1 771M825.6 816.4L1386.4 756M827 801.5L1387.7 741.1M828.3 786.6L1389 726.2M829.6 771.7L1390.4 711.3M831 756.8L1391.7 696.4M832.3 741.9L1393 681.5M833.6 727L1394.4 666.6M834.9 712L1395.7 651.7M836.3 697.1L1397 636.8" stroke="#3e6ca6" stroke-width="1" fill="none" opacity="0.9" shape-rendering="crispEdges"/>
<clipPath id="cap0b"><path d="M601.8 606.4L602.2 601.5L602.4 596.4L602.4 591.3L602.2 586.2L601.9 581L601.5 575.8L600.8 570.6L600 565.4L599.1 560.3L598 555.3L596.8 550.4L595.4 545.6L593.9 541L592.2 536.5L590.4 532.2L588.6 528.1L586.6 524.2L584.5 520.5L582.3 517.1L580.1 514L577.7 511.1L575.4 508.5L572.9 506.3L570.5 504.3L568 502.7L565.5 501.3L562.9 500.4L560.4 499.7L557.9 499.4L555.4 499.4L553 499.8L550.6 500.5L548.3 501.6L546 502.9L543.8 504.6L541.7 506.7L539.7 509L537.8 511.6L536 514.5L534.3 517.7L532.7 521.2L531.3 524.9L530 528.8L528.9 533L527.9 537.3L527.1 541.8L526.4 546.5L525.9 551.3L525.5 556.2L525.3 561.3L525.3 566.4L525.5 571.5L525.8 576.7L526.2 581.9L526.9 587.1L527.6 592.3L528.6 597.4L529.7 602.4L530.9 607.3L532.3 612.1L533.8 616.8L535.5 621.2L537.2 625.6L539.1 629.7L541.1 633.5L543.2 637.2L545.4 640.6L547.6 643.8L549.9 646.6L552.3 649.2L554.7 651.5L557.2 653.4L559.7 655.1L562.2 656.4L564.8 657.4L567.3 658L569.8 658.3L572.3 658.3L574.7 657.9L577.1 657.2L579.4 656.2L581.7 654.8L583.9 653.1L586 651.1L588 648.7L589.9 646.1L591.7 643.2L593.4 640L595 636.5L596.4 632.8L597.7 628.9L598.8 624.8L599.8 620.4L600.6 615.9L601.3 611.2Z"/></clipPath><path d="M601.8 606.4L602.2 601.5L602.4 596.4L602.4 591.3L602.2 586.2L601.9 581L601.5 575.8L600.8 570.6L600 565.4L599.1 560.3L598 555.3L596.8 550.4L595.4 545.6L593.9 541L592.2 536.5L590.4 532.2L588.6 528.1L586.6 524.2L584.5 520.5L582.3 517.1L580.1 514L577.7 511.1L575.4 508.5L572.9 506.3L570.5 504.3L568 502.7L565.5 501.3L562.9 500.4L560.4 499.7L557.9 499.4L555.4 499.4L553 499.8L550.6 500.5L548.3 501.6L546 502.9L543.8 504.6L541.7 506.7L539.7 509L537.8 511.6L536 514.5L534.3 517.7L532.7 521.2L531.3 524.9L530 528.8L528.9 533L527.9 537.3L527.1 541.8L526.4 546.5L525.9 551.3L525.5 556.2L525.3 561.3L525.3 566.4L525.5 571.5L525.8 576.7L526.2 581.9L526.9 587.1L527.6 592.3L528.6 597.4L529.7 602.4L530.9 607.3L532.3 612.1L533.8 616.8L535.5 621.2L537.2 625.6L539.1 629.7L541.1 633.5L543.2 637.2L545.4 640.6L547.6 643.8L549.9 646.6L552.3 649.2L554.7 651.5L557.2 653.4L559.7 655.1L562.2 656.4L564.8 657.4L567.3 658L569.8 658.3L572.3 658.3L574.7 657.9L577.1 657.2L579.4 656.2L581.7 654.8L583.9 653.1L586 651.1L588 648.7L589.9 646.1L591.7 643.2L593.4 640L595 636.5L596.4 632.8L597.7 628.9L598.8 624.8L599.8 620.4L600.6 615.9L601.3 611.2Z" fill="#23354a" fill-opacity="0.55"/><path d="M499.2 651L519.1 427.3M497.4 644.9L611.3 727.5M506.1 656L525.9 432.3M498.5 631.5L612.4 714.1M512.9 661L532.8 437.3M499.7 618.1L613.6 700.7M519.7 665.9L539.6 442.2M500.9 604.6L614.8 687.3M526.6 670.9L546.4 447.2M502.1 591.2L616 673.9M533.4 675.8L553.3 452.1M503.3 577.8L617.2 660.4M540.2 680.8L560.1 457.1M504.5 564.4L618.4 647M547.1 685.7L566.9 462.1M505.7 551L619.6 633.6M553.9 690.7L573.8 467M506.9 537.5L620.8 620.2M560.7 695.7L580.6 472M508.1 524.1L622 606.8M567.6 700.6L587.5 476.9M509.3 510.7L623.2 593.3M574.4 705.6L594.3 481.9M510.5 497.3L624.4 579.9M581.2 710.5L601.1 486.8M511.7 483.9L625.6 566.5M588.1 715.5L608 491.8M512.9 470.4L626.8 553.1M594.9 720.5L614.8 496.8M514 457L628 539.7M601.7 725.4L621.6 501.7M515.2 443.6L629.1 526.2M608.6 730.4L628.5 506.7M516.4 430.2L630.3 512.8" stroke="#0b1118" stroke-width="1.2" fill="none" clip-path="url(#cap0b)"/><path d="M601.8 606.4L602.2 601.5L602.4 596.4L602.4 591.3L602.2 586.2L601.9 581L601.5 575.8L600.8 570.6L600 565.4L599.1 560.3L598 555.3L596.8 550.4L595.4 545.6L593.9 541L592.2 536.5L590.4 532.2L588.6 528.1L586.6 524.2L584.5 520.5L582.3 517.1L580.1 514L577.7 511.1L575.4 508.5L572.9 506.3L570.5 504.3L568 502.7L565.5 501.3L562.9 500.4L560.4 499.7L557.9 499.4L555.4 499.4L553 499.8L550.6 500.5L548.3 501.6L546 502.9L543.8 504.6L541.7 506.7L539.7 509L537.8 511.6L536 514.5L534.3 517.7L532.7 521.2L531.3 524.9L530 528.8L528.9 533L527.9 537.3L527.1 541.8L526.4 546.5L525.9 551.3L525.5 556.2L525.3 561.3L525.3 566.4L525.5 571.5L525.8 576.7L526.2 581.9L526.9 587.1L527.6 592.3L528.6 597.4L529.7 602.4L530.9 607.3L532.3 612.1L533.8 616.8L535.5 621.2L537.2 625.6L539.1 629.7L541.1 633.5L543.2 637.2L545.4 640.6L547.6 643.8L549.9 646.6L552.3 649.2L554.7 651.5L557.2 653.4L559.7 655.1L562.2 656.4L564.8 657.4L567.3 658L569.8 658.3L572.3 658.3L574.7 657.9L577.1 657.2L579.4 656.2L581.7 654.8L583.9 653.1L586 651.1L588 648.7L589.9 646.1L591.7 643.2L593.4 640L595 636.5L596.4 632.8L597.7 628.9L598.8 624.8L599.8 620.4L600.6 615.9L601.3 611.2Z" fill="none" stroke="#111a24" stroke-width="1.3"/>
<clipPath id="cap700"><path d="M1250.2 726.4L1250.8 721.5L1251.7 716.6L1252.8 711.7L1254.3 706.9L1256 702L1258.1 697.3L1260.3 692.6L1262.9 688.1L1265.7 683.7L1268.7 679.5L1272 675.4L1275.4 671.5L1279 667.8L1282.9 664.3L1286.8 661.1L1291 658.1L1295.2 655.3L1299.6 652.9L1304 650.7L1308.5 648.8L1313.1 647.2L1317.7 645.9L1322.3 645L1326.9 644.3L1331.5 644L1336 643.9L1340.5 644.3L1344.8 644.9L1349.1 645.8L1353.2 647.1L1357.2 648.6L1361.1 650.5L1364.7 652.7L1368.2 655.1L1371.5 657.8L1374.5 660.8L1377.3 664L1379.9 667.5L1382.2 671.2L1384.3 675L1386.1 679.1L1387.6 683.4L1388.8 687.7L1389.7 692.3L1390.3 696.9L1390.6 701.6L1390.7 706.5L1390.4 711.3L1389.8 716.2L1388.9 721.1L1387.7 726L1386.3 730.9L1384.5 735.7L1382.5 740.4L1380.2 745.1L1377.7 749.6L1374.9 754L1371.9 758.3L1368.6 762.3L1365.2 766.2L1361.5 769.9L1357.7 773.4L1353.7 776.7L1349.6 779.7L1345.3 782.4L1341 784.9L1336.5 787L1332 788.9L1327.5 790.5L1322.9 791.8L1318.3 792.8L1313.7 793.4L1309.1 793.8L1304.6 793.8L1300.1 793.5L1295.7 792.8L1291.5 791.9L1287.3 790.6L1283.3 789.1L1279.5 787.2L1275.8 785L1272.4 782.6L1269.1 779.9L1266 776.9L1263.2 773.7L1260.6 770.2L1258.3 766.6L1256.3 762.7L1254.5 758.6L1253 754.4L1251.8 750L1250.9 745.4L1250.2 740.8L1249.9 736.1L1249.9 731.3Z"/></clipPath><path d="M1250.2 726.4L1250.8 721.5L1251.7 716.6L1252.8 711.7L1254.3 706.9L1256 702L1258.1 697.3L1260.3 692.6L1262.9 688.1L1265.7 683.7L1268.7 679.5L1272 675.4L1275.4 671.5L1279 667.8L1282.9 664.3L1286.8 661.1L1291 658.1L1295.2 655.3L1299.6 652.9L1304 650.7L1308.5 648.8L1313.1 647.2L1317.7 645.9L1322.3 645L1326.9 644.3L1331.5 644L1336 643.9L1340.5 644.3L1344.8 644.9L1349.1 645.8L1353.2 647.1L1357.2 648.6L1361.1 650.5L1364.7 652.7L1368.2 655.1L1371.5 657.8L1374.5 660.8L1377.3 664L1379.9 667.5L1382.2 671.2L1384.3 675L1386.1 679.1L1387.6 683.4L1388.8 687.7L1389.7 692.3L1390.3 696.9L1390.6 701.6L1390.7 706.5L1390.4 711.3L1389.8 716.2L1388.9 721.1L1387.7 726L1386.3 730.9L1384.5 735.7L1382.5 740.4L1380.2 745.1L1377.7 749.6L1374.9 754L1371.9 758.3L1368.6 762.3L1365.2 766.2L1361.5 769.9L1357.7 773.4L1353.7 776.7L1349.6 779.7L1345.3 782.4L1341 784.9L1336.5 787L1332 788.9L1327.5 790.5L1322.9 791.8L1318.3 792.8L1313.7 793.4L1309.1 793.8L1304.6 793.8L1300.1 793.5L1295.7 792.8L1291.5 791.9L1287.3 790.6L1283.3 789.1L1279.5 787.2L1275.8 785L1272.4 782.6L1269.1 779.9L1266 776.9L1263.2 773.7L1260.6 770.2L1258.3 766.6L1256.3 762.7L1254.5 758.6L1253 754.4L1251.8 750L1250.9 745.4L1250.2 740.8L1249.9 736.1L1249.9 731.3Z" fill="#4b79a8"/><g clip-path="url(#cap700)"><path fill="#3a6592" d="M1314.1 710.3L1324.7 703.4L1311.5 697.5Z"/><path fill="#3a6592" d="M1318.3 701.4L1324.8 701.6L1314.8 688.7Z"/><path fill="#3a6592" d="M1342.4 787.5L1357.8 782.6L1343.5 780.1Z"/><path fill="#3a6592" d="M1249.3 722.1L1255.8 715.4L1250.7 709.1Z"/><path fill="#3a6592" d="M1296 707.4L1307 703.1L1296.3 695.6Z"/><path fill="#6a96c2" d="M1310.9 754.3L1326.8 747.1L1313 745.3Z"/><path fill="#3a6592" d="M1277.6 756.2L1288.4 758.2L1273.8 748.1Z"/><path fill="#6a96c2" d="M1249.8 801.4L1255.2 802.7L1254 790.8Z"/><path fill="#3a6592" d="M1389.6 727.3L1400.5 728.2L1391.4 718.2Z"/><path fill="#3a6592" d="M1285.7 797.8L1298.5 799.4L1283.2 791.2Z"/><path fill="#3a6592" d="M1259.6 679.3L1271.7 680.2L1260.3 664.6Z"/><path fill="#3a6592" d="M1358.8 727.2L1365.6 726L1356.1 719.2Z"/><path fill="#3a6592" d="M1393.8 663.9L1408.8 666.5L1391.4 649.4Z"/><path fill="#3a6592" d="M1336.4 705.2L1351.5 705.5L1334.4 692.6Z"/><path fill="#3a6592" d="M1292.3 753.5L1298.4 754.8L1293.5 747.3Z"/><path fill="#3a6592" d="M1302.7 701.8L1317.8 698.9L1303.9 688.1Z"/><path fill="#3a6592" d="M1268.8 778L1282.3 778.1L1266.2 765.9Z"/><path fill="#3a6592" d="M1380.9 759.4L1395.4 755.1L1380 752.7Z"/><path fill="#3a6592" d="M1258.8 653.7L1271.7 652.1L1258.6 639.8Z"/><path fill="#6a96c2" d="M1319.2 715.9L1334.2 717.2L1319.4 704.1Z"/><path fill="#3a6592" d="M1331.4 783.7L1345.8 784.2L1326.7 775.9Z"/><path fill="#3a6592" d="M1306.2 788.5L1314.7 785.8L1310.7 781.3Z"/><path fill="#3a6592" d="M1266.4 732.4L1278.8 727.3L1267.1 725.1Z"/><path fill="#3a6592" d="M1245.1 801.7L1258.2 793.4L1240.8 790.6Z"/><path fill="#3a6592" d="M1320.9 683L1327.5 685.9L1320.5 673.9Z"/><path fill="#6a96c2" d="M1259.3 657.8L1272.3 651.4L1263.5 648.3Z"/><path fill="#3a6592" d="M1353.1 653.2L1367.6 655.7L1353 647.1Z"/><path fill="#3a6592" d="M1342.5 735.2L1353.8 737.5L1344.5 720.3Z"/><path fill="#3a6592" d="M1379.4 677.1L1394.5 671.7L1379.1 667.1Z"/><path fill="#6a96c2" d="M1326.6 715.3L1332.8 711.9L1326.4 707.3Z"/><path fill="#6a96c2" d="M1349.4 716.1L1361.6 713.5L1353.4 706.5Z"/><path fill="#6a96c2" d="M1269.3 707L1277.2 699.9L1271.1 697Z"/><path fill="#6a96c2" d="M1375.5 739.7L1383.9 735.8L1378.9 726.8Z"/><path fill="#3a6592" d="M1272.2 768.4L1283.5 767.8L1268.8 758.4Z"/><path fill="#6a96c2" d="M1374.8 658.9L1381.6 651L1377.8 651.7Z"/><path fill="#3a6592" d="M1322 652.7L1331.5 649.9L1324.1 640.2Z"/><path fill="#3a6592" d="M1372.3 693.9L1378.3 697.3L1375.9 687.2Z"/><path fill="#3a6592" d="M1352 704.5L1364.2 701L1353.5 694.8Z"/><path fill="#3a6592" d="M1278.4 681.6L1286.1 683.6L1274.3 670.6Z"/><path fill="#6a96c2" d="M1314.2 699.4L1326.1 698.2L1310.1 692.1Z"/><path fill="#6a96c2" d="M1364.6 751.9L1370.4 750.2L1366.6 744.2Z"/><path fill="#6a96c2" d="M1284.6 746.6L1299.7 743.5L1289.5 738.8Z"/><path fill="#3a6592" d="M1374.4 682L1381.5 674.7L1376.5 674.8Z"/><path fill="#3a6592" d="M1315.2 699.9L1324.7 696.6L1319.4 686.5Z"/><path fill="#6a96c2" d="M1385.2 717.5L1400.1 719.2L1389.2 704.1Z"/><path fill="#3a6592" d="M1377.5 771.1L1392.6 762.3L1382.4 759.9Z"/><path fill="#6a96c2" d="M1360.6 742.4L1374.6 741.2L1356.7 733Z"/><path fill="#3a6592" d="M1331.4 676.1L1345.9 676.4L1335.2 665.9Z"/><path fill="#6a96c2" d="M1252.3 721L1265.4 722.4L1249.1 710.9Z"/><path fill="#6a96c2" d="M1357.9 662.1L1368.4 655L1359.1 649.9Z"/><path fill="#6a96c2" d="M1357.4 724.3L1366.2 719.1L1359 713.5Z"/><path fill="#3a6592" d="M1371.7 704L1384.5 695.8L1375.6 692.3Z"/><path fill="#6a96c2" d="M1286.5 778.1L1297.5 774.6L1283.8 767.8Z"/><path fill="#3a6592" d="M1322.2 702.3L1332.8 705.1L1326.6 691.1Z"/><path fill="#3a6592" d="M1387.1 770.3L1399.1 772.7L1387.6 760.7Z"/><path fill="#3a6592" d="M1393.4 645.3L1401.6 643L1392.4 631.5Z"/><path fill="#6a96c2" d="M1390.3 646.2L1398.8 647.4L1392 631.9Z"/><path fill="#3a6592" d="M1269.6 681L1275.3 683L1264.9 673.1Z"/><path fill="#3a6592" d="M1349.6 755.3L1356.7 750.4L1346.2 745.3Z"/><path fill="#6a96c2" d="M1279.4 770.1L1293.2 772.8L1281.1 756.7Z"/><path fill="#6a96c2" d="M1337.9 711L1348.5 711.7L1335.3 700.6Z"/><path fill="#6a96c2" d="M1328 774.4L1339.7 773.5L1325.2 763.5Z"/><path fill="#3a6592" d="M1373.5 760.5L1387.6 761.8L1371.4 748.4Z"/><path fill="#3a6592" d="M1279.3 785.8L1290.6 780.7L1276.7 774.6Z"/><path fill="#6a96c2" d="M1358.7 777.4L1371.5 769.6L1363.2 770Z"/><path fill="#6a96c2" d="M1324.7 678.3L1340.6 671.2L1327.9 667.8Z"/><path fill="#6a96c2" d="M1253.9 685.4L1264.8 681.9L1250.4 678.2Z"/><path fill="#3a6592" d="M1281.4 670.3L1295.8 672L1277.7 656.3Z"/><path fill="#3a6592" d="M1318.4 678L1327.9 676.4L1317 670.4Z"/><path fill="#3a6592" d="M1303.5 699.9L1317.2 700.7L1303.4 687.4Z"/></g><path d="M1333.4 864.4L1460.3 661.8M1347.2 859.5L1178.3 761.9M1323.8 858.8L1450.7 656.3M1354.4 848L1185.5 750.4M1314.3 853.3L1441.1 650.8M1361.6 836.5L1192.7 738.9M1304.7 847.8L1431.6 645.3M1368.8 825.1L1199.9 727.4M1295.1 842.3L1422 639.7M1376 813.6L1207.1 716M1285.6 836.7L1412.4 634.2M1383.2 802.1L1214.3 704.5M1276 831.2L1402.8 628.7M1390.3 790.6L1221.5 693M1266.4 825.7L1393.3 623.1M1397.5 779.1L1228.7 681.5M1256.9 820.1L1383.7 617.6M1404.7 767.7L1235.8 670.1M1247.3 814.6L1374.1 612.1M1411.9 756.2L1243 658.6M1237.7 809.1L1364.6 606.5M1419.1 744.7L1250.2 647.1M1228.1 803.5L1355 601M1426.3 733.2L1257.4 635.6M1218.6 798L1345.4 595.5M1433.5 721.8L1264.6 624.1M1209 792.5L1335.9 589.9M1440.7 710.3L1271.8 612.7M1199.4 786.9L1326.3 584.4M1447.9 698.8L1279 601.2M1189.9 781.4L1316.7 578.9M1455 687.3L1286.2 589.7M1180.3 775.9L1307.1 573.3M1462.2 675.9L1293.3 578.2" stroke="#0b1118" stroke-width="1" fill="none" clip-path="url(#cap700)"/><path d="M1250.2 726.4L1250.8 721.5L1251.7 716.6L1252.8 711.7L1254.3 706.9L1256 702L1258.1 697.3L1260.3 692.6L1262.9 688.1L1265.7 683.7L1268.7 679.5L1272 675.4L1275.4 671.5L1279 667.8L1282.9 664.3L1286.8 661.1L1291 658.1L1295.2 655.3L1299.6 652.9L1304 650.7L1308.5 648.8L1313.1 647.2L1317.7 645.9L1322.3 645L1326.9 644.3L1331.5 644L1336 643.9L1340.5 644.3L1344.8 644.9L1349.1 645.8L1353.2 647.1L1357.2 648.6L1361.1 650.5L1364.7 652.7L1368.2 655.1L1371.5 657.8L1374.5 660.8L1377.3 664L1379.9 667.5L1382.2 671.2L1384.3 675L1386.1 679.1L1387.6 683.4L1388.8 687.7L1389.7 692.3L1390.3 696.9L1390.6 701.6L1390.7 706.5L1390.4 711.3L1389.8 716.2L1388.9 721.1L1387.7 726L1386.3 730.9L1384.5 735.7L1382.5 740.4L1380.2 745.1L1377.7 749.6L1374.9 754L1371.9 758.3L1368.6 762.3L1365.2 766.2L1361.5 769.9L1357.7 773.4L1353.7 776.7L1349.6 779.7L1345.3 782.4L1341 784.9L1336.5 787L1332 788.9L1327.5 790.5L1322.9 791.8L1318.3 792.8L1313.7 793.4L1309.1 793.8L1304.6 793.8L1300.1 793.5L1295.7 792.8L1291.5 791.9L1287.3 790.6L1283.3 789.1L1279.5 787.2L1275.8 785L1272.4 782.6L1269.1 779.9L1266 776.9L1263.2 773.7L1260.6 770.2L1258.3 766.6L1256.3 762.7L1254.5 758.6L1253 754.4L1251.8 750L1250.9 745.4L1250.2 740.8L1249.9 736.1L1249.9 731.3Z" fill="none" stroke="#0d141c" stroke-width="1.3"/>
<path d="M532.5 476.8L1093.3 416.4M1093.3 416.4L1397 636.8M1397 636.8L836.3 697.1M836.3 697.1L532.5 476.8M519.2 625.9L823 846.2M823 846.2L1383.7 785.9M1383.7 785.9L1397 636.8M823 846.2L836.3 697.1M519.2 625.9L532.5 476.8" stroke="#139a1e" stroke-width="1.9" fill="none"/>
<path d="M344.5 918 L347 897" stroke="#0000ff" stroke-width="3"/><path d="M347 890 L343.5 902 H350.5Z" fill="#0000ff"/>
<path d="M344.5 918 L360 916" stroke="#00dd00" stroke-width="3"/><path d="M366 915.5 L357 911.5 L358 920Z" fill="#00dd00"/>
<path d="M344.5 918 L355 926" stroke="#ff0000" stroke-width="3"/><path d="M361 930 L351 927.5 L356.5 921Z" fill="#ff0000"/>
<g font-family="Liberation Sans" font-size="8.5"><text x="349.5" y="891" fill="#0000ff">Z</text><text x="367" y="916" fill="#00cc00">Y</text><text x="363.5" y="930" fill="#ff0000">X</text></g>
</g></svg><div class="a" style="left:37px;top:253px;width:1px;height:26px;background:#d9d9d9"></div><div class="a" style="left:37px;top:293px;width:1px;height:30px;background:#d9d9d9"></div><div class="a" style="left:37px;top:337px;width:1px;height:52px;background:#d9d9d9"></div><div class="a" style="left:37px;top:403px;width:1px;height:180px;background:#d9d9d9"></div><div class="a" style="left:37px;top:264px;width:13px;height:1px;background:#d9d9d9"></div><div class="a" style="left:62px;top:297px;width:1px;height:4px;background:#d9d9d9"></div><div class="a" style="left:62px;top:315px;width:1px;height:4px;background:#d9d9d9"></div><div class="a" style="left:62px;top:341px;width:1px;height:34px;background:#d9d9d9"></div><div class="a" style="left:62px;top:352px;width:13px;height:1px;background:#d9d9d9"></div><div class="a" style="left:62px;top:374px;width:13px;height:1px;background:#d9d9d9"></div><div class="a" style="left:62px;top:407px;width:1px;height:4px;background:#d9d9d9"></div><div class="a" style="left:62px;top:425px;width:1px;height:8px;background:#d9d9d9"></div><div class="a" style="left:62px;top:447px;width:1px;height:118px;background:#d9d9d9"></div><div class="a" style="left:87px;top:451px;width:1px;height:100px;background:#d9d9d9"></div><div class="a" style="left:87px;top:462px;width:13px;height:1px;background:#d9d9d9"></div><div class="a" style="left:87px;top:484px;width:13px;height:1px;background:#d9d9d9"></div><div class="a" style="left:87px;top:506px;width:13px;height:1px;background:#d9d9d9"></div><div class="a" style="left:87px;top:528px;width:13px;height:1px;background:#d9d9d9"></div><div class="a" style="left:87px;top:550px;width:13px;height:1px;background:#d9d9d9"></div>
<svg class="ic" style="left:6px;top:235px" width="15" height="15"><circle cx="7.5" cy="7.5" r="6.5" fill="#fff" stroke="#8c8c8c" stroke-width="1"/><path d="M4.5 7.5H10.5" stroke="#505050" stroke-width="1.6"/></svg>
<svg class="ic" style="left:30px;top:232px" width="20" height="20"><use href="#i-root"/></svg>
<div class="t" style="left:55px;top:233px;letter-spacing:0">分析模型</div>
<svg class="ic" style="left:55px;top:254px" width="20" height="20"><use href="#i-param"/></svg>
<div class="t" style="left:80px;top:255px;letter-spacing:0">参数定义</div>
<svg class="ic" style="left:31px;top:279px" width="15" height="15"><circle cx="7.5" cy="7.5" r="6.5" fill="#fff" stroke="#8c8c8c" stroke-width="1"/><path d="M4.5 7.5H10.5" stroke="#505050" stroke-width="1.6"/></svg>
<svg class="ic" style="left:55px;top:276px" width="20" height="20"><use href="#i-geom"/></svg>
<div class="t" style="left:80px;top:277px;letter-spacing:0">几何模型</div>
<svg class="ic" style="left:56px;top:301px" width="15" height="15"><circle cx="7.5" cy="7.5" r="6.5" fill="#fff" stroke="#8c8c8c" stroke-width="1"/><path d="M4.5 7.5H10.5M7.5 4.5V10.5" stroke="#505050" stroke-width="1.6"/></svg>
<svg class="ic" style="left:80px;top:298px" width="20" height="20"><use href="#i-sweep"/></svg>
<div class="t" style="left:105px;top:299px;letter-spacing:0">扫掠</div>
<svg class="ic" style="left:31px;top:323px" width="15" height="15"><circle cx="7.5" cy="7.5" r="6.5" fill="#fff" stroke="#8c8c8c" stroke-width="1"/><path d="M4.5 7.5H10.5" stroke="#505050" stroke-width="1.6"/></svg>
<svg class="ic" style="left:55px;top:320px" width="20" height="20"><use href="#i-mat"/></svg>
<div class="t" style="left:80px;top:321px;letter-spacing:0">材料属性</div>
<svg class="ic" style="left:80px;top:342px" width="20" height="20"><use href="#i-mat"/></svg>
<div class="t" style="left:105px;top:343px;letter-spacing:0.9px">water</div>
<svg class="ic" style="left:80px;top:364px" width="20" height="20"><use href="#i-mat"/></svg>
<div class="t" style="left:105px;top:365px;letter-spacing:0.9px">water1</div>
<svg class="ic" style="left:31px;top:389px" width="15" height="15"><circle cx="7.5" cy="7.5" r="6.5" fill="#fff" stroke="#8c8c8c" stroke-width="1"/><path d="M4.5 7.5H10.5" stroke="#505050" stroke-width="1.6"/></svg>
<svg class="ic" style="left:55px;top:386px" width="20" height="20"><use href="#i-mesh"/></svg>
<div class="t" style="left:80px;top:387px;letter-spacing:0">网格剖分</div>
<svg class="ic" style="left:56px;top:411px" width="15" height="15"><circle cx="7.5" cy="7.5" r="6.5" fill="#fff" stroke="#8c8c8c" stroke-width="1"/><path d="M4.5 7.5H10.5M7.5 4.5V10.5" stroke="#505050" stroke-width="1.6"/></svg>
<svg class="ic" style="left:80px;top:408px" width="20" height="20"><use href="#i-bname"/></svg>
<div class="t" style="left:105px;top:409px;letter-spacing:0">边界名称</div>
<svg class="ic" style="left:56px;top:433px" width="15" height="15"><circle cx="7.5" cy="7.5" r="6.5" fill="#fff" stroke="#8c8c8c" stroke-width="1"/><path d="M4.5 7.5H10.5" stroke="#505050" stroke-width="1.6"/></svg>
<svg class="ic" style="left:80px;top:430px" width="20" height="20"><use href="#i-poly"/></svg>
<div class="t" style="left:105px;top:431px;letter-spacing:0">多面体网格设置</div>
<svg class="ic" style="left:105px;top:452px" width="20" height="20"><use href="#i-polysel"/></svg>
<div class="t" style="left:129px;top:453px;letter-spacing:0">背景网格参数</div>
<svg class="ic" style="left:105px;top:474px" width="20" height="20"><use href="#i-poly"/></svg>
<div class="t" style="left:129px;top:475px;letter-spacing:0">单元控制参数</div>
<svg class="ic" style="left:105px;top:496px" width="20" height="20"><use href="#i-poly"/></svg>
<div class="t" style="left:129px;top:497px;letter-spacing:0">几何控制参数</div>
<svg class="ic" style="left:105px;top:518px" width="20" height="20"><use href="#i-poly"/></svg>
<div class="t" style="left:129px;top:519px;letter-spacing:0">边界层参数</div>
<svg class="ic" style="left:105px;top:540px" width="20" height="20"><use href="#i-poly"/></svg>
<div class="t" style="left:129px;top:541px;letter-spacing:0">质量控制参数</div>
<svg class="ic" style="left:56px;top:565px" width="15" height="15"><circle cx="7.5" cy="7.5" r="6.5" fill="#fff" stroke="#8c8c8c" stroke-width="1"/><path d="M4.5 7.5H10.5M7.5 4.5V10.5" stroke="#505050" stroke-width="1.6"/></svg>
<svg class="ic" style="left:80px;top:562px" width="20" height="20"><use href="#i-fluid"/></svg>
<div class="t" style="left:105px;top:563px;letter-spacing:0">流体网格</div>
<div class="a" style="left:267px;top:251px;width:8px;height:265px;background:#a9acb0"></div>
<svg class="ic" style="left:265px;top:240px" width="12" height="8"><path d="M1 7L6 2L11 7Z" fill="#5c6b78"/></svg>
<svg class="ic" style="left:265px;top:571px" width="12" height="8"><path d="M1 1L6 6L11 1Z" fill="#5c6b78"/></svg><div class="a" style="left:1px;top:590px;width:265px;height:385px;overflow:hidden">
<div class="a" style="left:0;top:0;width:263px;height:25px;background:#adb1b6;border-bottom:1px solid #9ea2a7"></div>
<div class="a" style="left:124px;top:0;width:1px;height:25px;background:#c3c6ca"></div>
<div class="t" style="left:11px;top:4px">属性</div><div class="t" style="left:136px;top:4px">值</div>
<div class="a" style="left:0;top:25px;width:263px;height:25px;background:#bbcfe2"></div>
<div class="t" style="left:28px;top:29px;color:#6d7c8c;font-weight:bold">基本信息</div>
<div class="a" style="left:0;top:50px;width:263px;height:25px;background:#ffffff"></div>
<div class="a" style="left:25px;top:74px;width:238px;height:1px;background:#dcdcdc"></div>
<div class="a" style="left:124px;top:50px;width:1px;height:25px;background:#dcdcdc"></div>
<div class="a" style="left:11px;top:50px;width:1px;height:25px;background:#d8d8d8"></div>
<div class="a" style="left:12px;top:62px;width:12px;height:1px;background:#d8d8d8"></div>
<div class="t" style="left:28px;top:54px">标签</div>
<div class="t" style="left:128px;top:54px;letter-spacing:0">背景网格参数</div>
<div class="a" style="left:0;top:75px;width:263px;height:25px;background:#bbcfe2"></div>
<div class="t" style="left:28px;top:79px;color:#6d7c8c;font-weight:bold">几何</div>
<div class="a" style="left:0;top:100px;width:263px;height:25px;background:#ffffff"></div>
<div class="a" style="left:25px;top:124px;width:238px;height:1px;background:#dcdcdc"></div>
<div class="a" style="left:124px;top:100px;width:1px;height:25px;background:#dcdcdc"></div>
<div class="a" style="left:11px;top:100px;width:1px;height:25px;background:#d8d8d8"></div>
<div class="a" style="left:12px;top:112px;width:12px;height:1px;background:#d8d8d8"></div>
<div class="t" style="left:28px;top:104px">自动适配大小</div>
<div class="t" style="left:128px;top:104px;letter-spacing:0">是</div>
<div class="a" style="left:0;top:125px;width:263px;height:25px;background:#ebecee"></div>
<div class="a" style="left:25px;top:149px;width:238px;height:1px;background:#dcdcdc"></div>
<div class="a" style="left:124px;top:125px;width:1px;height:25px;background:#dcdcdc"></div>
<div class="a" style="left:11px;top:125px;width:1px;height:25px;background:#d8d8d8"></div>
<div class="a" style="left:12px;top:137px;width:12px;height:1px;background:#d8d8d8"></div>
<div class="t" style="left:28px;top:129px">适配因子</div>
<div class="t" style="left:128px;top:129px;letter-spacing:0.6px">1</div>
<div class="a" style="left:0;top:150px;width:263px;height:25px;background:#bbcfe2"></div>
<div class="t" style="left:28px;top:154px;color:#6d7c8c;font-weight:bold">网格设置</div>
<div class="a" style="left:0;top:175px;width:263px;height:25px;background:#ebecee"></div>
<div class="a" style="left:25px;top:199px;width:238px;height:1px;background:#dcdcdc"></div>
<div class="a" style="left:124px;top:175px;width:1px;height:25px;background:#dcdcdc"></div>
<div class="a" style="left:11px;top:175px;width:1px;height:25px;background:#d8d8d8"></div>
<div class="a" style="left:12px;top:187px;width:12px;height:1px;background:#d8d8d8"></div>
<div class="t" style="left:28px;top:179px">X方向分段数</div>
<div class="t" style="left:128px;top:179px;letter-spacing:0.6px">50</div>
<div class="a" style="left:0;top:200px;width:263px;height:25px;background:#ffffff"></div>
<div class="a" style="left:25px;top:224px;width:238px;height:1px;background:#dcdcdc"></div>
<div class="a" style="left:124px;top:200px;width:1px;height:25px;background:#dcdcdc"></div>
<div class="a" style="left:11px;top:200px;width:1px;height:25px;background:#d8d8d8"></div>
<div class="a" style="left:12px;top:212px;width:12px;height:1px;background:#d8d8d8"></div>
<div class="t" style="left:28px;top:204px">X方向网格...</div>
<div class="t" style="left:128px;top:204px;letter-spacing:0.6px">0.016 m</div>
<div class="a" style="left:0;top:225px;width:263px;height:25px;background:#ebecee"></div>
<div class="a" style="left:25px;top:249px;width:238px;height:1px;background:#dcdcdc"></div>
<div class="a" style="left:124px;top:225px;width:1px;height:25px;background:#dcdcdc"></div>
<div class="a" style="left:11px;top:225px;width:1px;height:25px;background:#d8d8d8"></div>
<div class="a" style="left:12px;top:237px;width:12px;height:1px;background:#d8d8d8"></div>
<div class="t" style="left:28px;top:229px">Y方向分段数</div>
<div class="t" style="left:128px;top:229px;letter-spacing:0.6px">50</div>
<div class="a" style="left:0;top:250px;width:263px;height:25px;background:#ffffff"></div>
<div class="a" style="left:25px;top:274px;width:238px;height:1px;background:#dcdcdc"></div>
<div class="a" style="left:124px;top:250px;width:1px;height:25px;background:#dcdcdc"></div>
<div class="a" style="left:11px;top:250px;width:1px;height:25px;background:#d8d8d8"></div>
<div class="a" style="left:12px;top:262px;width:12px;height:1px;background:#d8d8d8"></div>
<div class="t" style="left:28px;top:254px">Y方向网格...</div>
<div class="t" style="left:128px;top:254px;letter-spacing:0.6px">0.016 m</div>
<div class="a" style="left:0;top:275px;width:263px;height:25px;background:#ebecee"></div>
<div class="a" style="left:25px;top:299px;width:238px;height:1px;background:#dcdcdc"></div>
<div class="a" style="left:124px;top:275px;width:1px;height:25px;background:#dcdcdc"></div>
<div class="a" style="left:11px;top:275px;width:1px;height:25px;background:#d8d8d8"></div>
<div class="a" style="left:12px;top:287px;width:12px;height:1px;background:#d8d8d8"></div>
<div class="t" style="left:28px;top:279px">Z方向分段数</div>
<div class="t" style="left:128px;top:279px;letter-spacing:0.6px">10</div>
<div class="a" style="left:0;top:300px;width:263px;height:25px;background:#ffffff"></div>
<div class="a" style="left:25px;top:324px;width:238px;height:1px;background:#dcdcdc"></div>
<div class="a" style="left:124px;top:300px;width:1px;height:25px;background:#dcdcdc"></div>
<div class="a" style="left:11px;top:300px;width:1px;height:25px;background:#d8d8d8"></div>
<div class="a" style="left:12px;top:312px;width:12px;height:1px;background:#d8d8d8"></div>
<div class="t" style="left:28px;top:304px">Z方向网格...</div>
<div class="t" style="left:128px;top:304px;letter-spacing:0.6px">0.01998781654 m</div>
<div class="a" style="left:0;top:325px;width:263px;height:25px;background:#bbcfe2"></div>
<div class="t" style="left:28px;top:329px;color:#6d7c8c;font-weight:bold">边界设置</div>
<div class="a" style="left:0;top:350px;width:263px;height:25px;background:#ffffff"></div>
<div class="a" style="left:25px;top:374px;width:238px;height:1px;background:#dcdcdc"></div>
<div class="a" style="left:124px;top:350px;width:1px;height:25px;background:#dcdcdc"></div>
<div class="a" style="left:11px;top:350px;width:1px;height:25px;background:#d8d8d8"></div>
<div class="a" style="left:12px;top:362px;width:12px;height:1px;background:#d8d8d8"></div>
<div class="t" style="left:28px;top:354px">-X边界名称</div>
<div class="t" style="left:128px;top:354px;letter-spacing:0.6px">xneg</div>
<div class="a" style="left:0;top:375px;width:263px;height:25px;background:#ebecee"></div>
<div class="a" style="left:25px;top:399px;width:238px;height:1px;background:#dcdcdc"></div>
<div class="a" style="left:124px;top:375px;width:1px;height:25px;background:#dcdcdc"></div>
<div class="a" style="left:11px;top:375px;width:1px;height:25px;background:#d8d8d8"></div>
<div class="a" style="left:12px;top:387px;width:12px;height:1px;background:#d8d8d8"></div>
<div class="t" style="left:28px;top:379px">-X边界类型</div>
<div class="t" style="left:128px;top:379px;letter-spacing:0.6px">Patch</div>
</div>
<div class="a" style="left:266px;top:590px;width:12px;height:385px;background:#fff"></div>
<div class="a" style="left:268px;top:603px;width:7px;height:190px;background:#a9acb0"></div>
<svg class="ic" style="left:266px;top:593px" width="12" height="8"><path d="M1 7L6 2L11 7Z" fill="#5c6b78"/></svg>
<svg class="ic" style="left:266px;top:963px" width="12" height="8"><path d="M1 1L6 6L11 1Z" fill="#5c6b78"/></svg><svg width="0" height="0" style="position:absolute">
<defs>
<linearGradient id="gGray" x1="0" y1="0" x2="0" y2="1"><stop offset="0" stop-color="#c6cad4"/><stop offset="1" stop-color="#eef0f3"/></linearGradient>
<linearGradient id="gBlue" x1="0" y1="0" x2="0" y2="1"><stop offset="0" stop-color="#dbe9f7"/><stop offset="1" stop-color="#a8c6ea"/></linearGradient>
<linearGradient id="gGreen" x1="0" y1="0" x2="0" y2="1"><stop offset="0" stop-color="#8fbb6e"/><stop offset="1" stop-color="#d3e8c2"/></linearGradient>
<linearGradient id="gOr" x1="0" y1="0" x2="0" y2="1"><stop offset="0" stop-color="#ef9a4e"/><stop offset="1" stop-color="#fde3c6"/></linearGradient>
<radialGradient id="gRain" cx="0.2" cy="0.35" r="0.95"><stop offset="0" stop-color="#e0101a"/><stop offset="0.2" stop-color="#f5a020"/><stop offset="0.38" stop-color="#f0f020"/><stop offset="0.58" stop-color="#20d040"/><stop offset="0.78" stop-color="#20b0e8"/><stop offset="1" stop-color="#1040d0"/></radialGradient>
<pattern id="pChk" width="4" height="4" patternUnits="userSpaceOnUse"><rect width="4" height="4" fill="#fff"/><rect width="2" height="2" fill="#cfd3da"/><rect x="2" y="2" width="2" height="2" fill="#cfd3da"/></pattern>
<symbol id="xt" viewBox="0 0 20 20"><text x="6" y="18.5" font-family="Liberation Serif" font-style="italic" font-size="11" fill="currentColor">X</text><text x="12.2" y="18.5" font-family="Liberation Serif" font-style="italic" font-size="7" fill="currentColor">(t)</text></symbol>
<symbol id="i-root" viewBox="0 0 20 20"><path d="M2 6 L6 2 H19 V15 L15 19 H2 Z" fill="url(#gRain)" stroke="#3d5590" stroke-width="0.8"/></symbol>
<symbol id="i-param" viewBox="0 0 20 20"><rect x="5" y="2" width="8" height="8" fill="#e3ecf6" stroke="#5b6c88" stroke-width="1"/><rect x="1" y="11" width="15" height="6" fill="#dfe7f2" stroke="#5b6c88" stroke-width="1"/><path d="M6 11V17M11 11V17" stroke="#5b6c88"/><path d="M18.5 8 V19 H9 Z" fill="#1c2c55"/><path d="M16.5 13 V17 H12.5Z" fill="#dfe7f2"/></symbol>
<symbol id="i-geom" viewBox="0 0 20 20"><rect x="11" y="2" width="7" height="12" rx="3" fill="#e6eef8" stroke="#5b6c88"/><path d="M1.5 9 L4 6.5 H11 V16 L8.5 18.5 H1.5Z" fill="#d9e5f3" stroke="#5b6c88"/><path d="M1.5 9 H8.5 V18.5 M8.5 9 L11 6.5" fill="none" stroke="#5b6c88"/></symbol>
<symbol id="i-sweep" viewBox="0 0 20 20"><path d="M3 9 C3 3 8 2 12 2 H17 L15 6 H11 C8 6 7 8 9 9 H13 C18 9 18 15 14 17 L11 17 L12 13 H14 C15 12 15 12 13 12 H7 C4 12 3 11 3 9Z" fill="url(#gOr)" stroke="#d4702c" stroke-width="1"/><rect x="8" y="12" width="7" height="7" fill="#d8dde6" stroke="#5b6c88"/></symbol>
<symbol id="i-mat" viewBox="0 0 20 20"><circle cx="10" cy="10" r="8.3" fill="url(#pChk)" stroke="#8592a6" stroke-width="1.2"/></symbol>
<symbol id="i-mesh" viewBox="0 0 20 20"><path d="M1.5 6 L5 2.5 H18.5 V15 L15 18.5 H1.5Z" fill="#dfe5ee" stroke="#4a5a7a" stroke-width="1.1"/><path d="M1.5 6 H15 V18.5 M15 6 L18.5 2.5 M8.3 6V18.5 M1.5 12H15 M8.3 6 L11.8 2.5 M15 12 L18.5 8.5" fill="none" stroke="#4a5a7a" stroke-width="1"/></symbol>
<symbol id="i-bname" viewBox="0 0 20 20"><rect x="1.5" y="1.5" width="15" height="13" rx="1" fill="url(#gGray)" stroke="#6a7890" stroke-width="1.1"/><rect x="11" y="10" width="8" height="9" fill="#fff" stroke="#3b8bd0" stroke-width="1.1"/><path d="M11 12.3H19M12.5 15H17.5" stroke="#3b8bd0"/></symbol>
<symbol id="i-poly" viewBox="0 0 20 20"><rect x="1.5" y="1.5" width="10" height="10" fill="#f2f4f8" stroke="#44557a" stroke-width="1"/><path d="M4.8 1.5V11.5M8.2 1.5V11.5M1.5 4.8H11.5M1.5 8.2H11.5" stroke="#3f86cc" stroke-width="0.9"/><use href="#xt" x="-1" y="0" width="20" height="20" color="#1c2c55"/></symbol>
<symbol id="i-polysel" viewBox="0 0 20 20"><rect x="1.5" y="1.5" width="10" height="10" fill="#e6ecf4" stroke="#6a7a96" stroke-width="1"/><path d="M4.8 1.5V11.5M8.2 1.5V11.5M1.5 4.8H11.5M1.5 8.2H11.5" stroke="#7aa6d2" stroke-width="0.9"/><use href="#xt" x="-1" y="0" width="20" height="20" color="#45557a"/><circle cx="14" cy="4" r="4" fill="#6aa6dc"/><path d="M11.8 4 L13.6 5.8 L16.8 1.8" fill="none" stroke="#fff" stroke-width="1.4"/></symbol>
<symbol id="i-fluid" viewBox="0 0 20 20"><path d="M1.5 6 L5 2.5 H18.5 V15 L15 18.5 H1.5Z" fill="#eef2f7" stroke="#4a5a7a" stroke-width="1.1"/><path d="M1.5 12 H15 L18.5 8.5" fill="none" stroke="#4a5a7a" stroke-width="0.8"/><path d="M1.5 12H15V18.5H1.5Z" fill="url(#gBlue)" stroke="#4a5a7a"/><path d="M15 6V18.5M1.5 6H15L18.5 2.5" fill="none" stroke="#4a5a7a"/><path d="M7 3V5M11 3V5M15 3V5M4 4H17" stroke="#9aa6b8" stroke-width="0.7"/></symbol>
</defs></svg>
<!-- ================= title bar icons ================= -->
<svg class="ic" style="left:0;top:0" width="250" height="37">
 <rect x="2" y="8" width="20" height="20" fill="#1a6fe8"/>
 <path d="M5 12 L11 10 V26 L5 24Z M11 13 L19 11 V14 L11 16Z M11 17.5 L19 15.5 V18.5 L11 20.5Z M11 22 L19 20 V23 L11 25Z" fill="#fff"/>
 <path d="M6.3 14.5 H9 V17 H6.3Z M6.3 19.5 H9 V22 H6.3Z" fill="#1a6fe8"/>
 <path d="M29.5 10.5 H42 L45.5 14 V26.5 H29.5Z" fill="url(#gGray)" stroke="#5a6a88" stroke-width="1.1"/>
 <path d="M34 18.5 H41 M37.5 15 V22" stroke="#44557a" stroke-width="1"/>
 <path d="M55.5 12.5 H62 L64 15 H71.5 V25.5 H55.5Z" fill="#dde3ec" stroke="#5a6a88" stroke-width="1"/>
 <path d="M56 25.5 L59.5 18.5 H75 L71.5 25.5Z" fill="#4c9ee0" stroke="#3a6ea8" stroke-width="1"/>
 <path d="M85 10.5 H99 L101.5 13 V26.5 H85Z" fill="#3d8fd8" stroke="#3a5a8a" stroke-width="1"/>
 <rect x="88.5" y="10.5" width="10" height="4.5" fill="#e8eef6"/>
 <rect x="87.5" y="19" width="12" height="7.5" fill="#e8ecf2"/>
 <path d="M89 21.5H98 M89 24H98" stroke="#6f7d92" stroke-width="1"/>
 <path d="M112 16.5 L120 10.5 V14 C126 14 130 18 130 25 C127 20 124 19 120 19 V22.5Z" fill="#b5bcc8" stroke="#3f5078" stroke-width="1"/>
 <path d="M137.5 15 H147.5 L142.5 21Z" fill="#5f6266"/>
 <path d="M176 16.5 L168 10.5 V14 C162 14 158 18 158 25 C161 20 164 19 168 19 V22.5Z" fill="#e0e2e6" stroke="#b8bcc2" stroke-width="1"/>
 <path d="M183.5 15 H193.5 L188.5 21Z" fill="#c4c6ca"/>
 <rect x="200" y="9" width="1" height="19" fill="#c4c6ca"/>
 <path d="M210 17 C210 11 218 9 221.5 13.5 L223 11 V17.5 H216.5 L219 15 C216.5 12.5 212.5 14 212.5 17Z M221.5 19.5 C221.5 25.5 213.5 27.5 210 23 L208.5 25.5 V19 H215 L212.5 21.5 C215 24 219 22.5 219 19.5Z" fill="#1f7ac4"/>
 <rect x="233" y="14.2" width="9" height="1.4" fill="#6a6d72"/>
 <path d="M233 19.5 H242 L237.5 24Z" fill="#6a6d72"/>
</svg>
<!-- ================= ribbon icons ================= -->
<svg class="ic" style="left:0;top:78px" width="800" height="45">
 <!-- 边界名称 -->
 <rect x="23.5" y="7.5" width="32" height="27" rx="1.5" fill="url(#gGray)" stroke="#5e6d8b" stroke-width="1.6"/>
 <rect x="44.5" y="25" width="15.5" height="16" fill="#fafafa" stroke="#2f80c8" stroke-width="1.6"/>
 <path d="M44.5 27.3H60 M47 32.5H57.5" stroke="#2f80c8" stroke-width="1.2"/><path d="M47 36H57.5" stroke="#8a939e" stroke-width="1.2"/>
 <!-- 多面体网格设置 -->
 <rect x="132" y="6.5" width="20.5" height="20" fill="#eef0f4" stroke="#44557a" stroke-width="1.4"/>
 <path d="M138.8 6.5V26.5M145.6 6.5V26.5M132 13.2H152.5M132 20H152.5" stroke="#2d82cc" stroke-width="1.3"/>
 <text x="140" y="40" font-family="Liberation Serif" font-style="italic" font-size="19" fill="#1f2f58">X</text>
 <text x="153" y="40" font-family="Liberation Serif" font-style="italic" font-size="11.5" fill="#1f2f58">(t)</text>
 <!-- 网格区域 -->
 <path d="M228.7 15.4 V26 L236 40 H258 L265.5 26 V15.4 L247 6.4Z" fill="#dbe8f6" stroke="#3d5077" stroke-width="1.4"/>
 <path d="M228.7 15.4 L236 28.8 V40 M265.5 15.4 L257.8 28.8 V40" fill="#96b8e2" stroke="none"/>
 <path d="M228.7 15.4 V26 L236 40 V28.8Z M265.5 15.4 V26 L258 40 V28.8Z" fill="#93b5e0"/>
 <path d="M247 6.4 L228.7 15.4 L236 28.8 H257.8 L265.5 15.4Z" fill="#f4f6f9" stroke="#d0663a" stroke-width="1.4"/>
 <path d="M236 12 H258 M232 17H262 M234 22H260 M237 9V28 M242 7V28 M247 6V28 M252 7V28 M257 9V28" stroke="#a9b3c0" stroke-width="0.8"/>
 <path d="M247 6.4 L228.7 15.4 L236 28.8 H257.8 L265.5 15.4Z" fill="none" stroke="#d0663a" stroke-width="1.4"/>
 <path d="M228.7 15.4 V26 L236 40 H258 L265.5 26 V15.4" fill="none" stroke="#3d5077" stroke-width="1.4"/>
 <!-- 局部加密 -->
 <rect x="307.5" y="6.5" width="32" height="33" fill="#dfe3ea" stroke="#3d5077" stroke-width="1.4"/>
 <path d="M318 6.5V39.5 M328.5 6.5V39.5 M307.5 17H339.5 M307.5 28H339.5" stroke="#9aa5b4" stroke-width="1"/>
 <rect x="317.5" y="17" width="22" height="22.5" fill="#f4f5f8" stroke="#d0663a" stroke-width="1.4"/>
 <path d="M323 17V39.5 M328.5 17V39.5 M334 17V39.5 M317.5 22.5H339.5 M317.5 28H339.5 M317.5 33.5H339.5" stroke="#8d99aa" stroke-width="1"/>
 <rect x="315.5" y="15" width="4" height="4" fill="#3d5077"/><rect x="337.5" y="15" width="4" height="4" fill="#3d5077"/><rect x="315.5" y="37" width="4" height="4" fill="#3d5077"/><rect x="337.5" y="37" width="4" height="4" fill="#3d5077"/>
 <!-- 非结构网格设置 (disabled) -->
 <rect x="412.5" y="6.5" width="21" height="20" fill="#f2f2f2" stroke="#a8a8a8" stroke-width="1.3"/>
 <path d="M419.5 6.5V26.5M426.5 6.5V26.5M412.5 13.2H433.5M412.5 20H433.5" stroke="#b4b4b4" stroke-width="1.2"/>
 <text x="420" y="40" font-family="Liberation Serif" font-style="italic" font-size="19" fill="#9a9a9a">X</text>
 <text x="433" y="40" font-family="Liberation Serif" font-style="italic" font-size="11.5" fill="#9a9a9a">(t)</text>
 <!-- 边控制 -->
 <path d="M502.5 14.5 L511 6.5 H536.5 V32.5 L528 40.5 H502.5Z" fill="#dde1e8" stroke="#4a5c80" stroke-width="1.4"/>
 <path d="M502.5 14.5 H528 V40.5 M528 14.5 L536.5 6.5" fill="none" stroke="#4a5c80" stroke-width="1.2"/>
 <path d="M528 14.5 L536.5 6.5 V32.5 L528 40.5Z" fill="#c3c9d3"/><path d="M502.5 14.5 L511 6.5 H536.5 L528 14.5Z" fill="#f0f2f5"/>
 <path d="M502.5 27 H528" stroke="#f6f7f9" stroke-width="1.5"/>
 <path d="M516.5 40 V15 L522 7" fill="none" stroke="#e08a3a" stroke-width="1.4"/>
 <path d="M523.5 19 V38 L527.5 34 L531 41.5 L534 40 L530.5 33 H536Z" fill="#e4e7ec" stroke="#3a3d44" stroke-width="1.1"/>
 <!-- 面控制 -->
 <path d="M562 14.5 L570.5 6.5 H597 V32.5 L588 40.5 H562Z" fill="#dde1e8" stroke="#4a5c80" stroke-width="1.4"/>
 <path d="M588 14.5 L597 6.5 V32.5 L588 40.5Z" fill="#a9b0bc"/><path d="M562 14.5 L570.5 6.5 H597 L588 14.5Z" fill="#eceef2"/>
 <rect x="562" y="14.5" width="26" height="26" fill="url(#gGreen)" stroke="#3a8a3a" stroke-width="1.4"/>
 <path d="M583.5 19 V38 L587.5 34 L591 41.5 L594 40 L590.5 33 H596Z" fill="#e4e7ec" stroke="#3a3d44" stroke-width="1.1"/>
 <!-- 生成网格 -->
 <path d="M639.5 15 L647.5 6.5 H674.5 V31.5 L666.5 41 H639.5Z" fill="#eef0f3" stroke="#3d5077" stroke-width="1.5"/>
 <path d="M666.5 15 L674.5 6.5 V31.5 L666.5 41Z" fill="#aab3c0"/>
 <path d="M639.5 28.5 H666.5 L674.5 20 V31.5 L666.5 41 H639.5Z" fill="url(#gBlue)"/>
 <path d="M639.5 33 H666.5 V41 H639.5Z" fill="#9dbbe4"/>
 <path d="M647 9H670 M644 12H668 M652 7V14 M657 7V14 M662 7V14 M667 7V14" stroke="#b8c0cc" stroke-width="0.8"/>
 <path d="M639.5 15 L647.5 6.5 H674.5 V31.5 L666.5 41 H639.5Z M666.5 41V32 L674.5 23" fill="none" stroke="#3d5077" stroke-width="1.5"/>
 <!-- separator above handled in chrome -->
 <!-- 网格检测 -->
 <path d="M740.5 6.6 L757 23 L740.5 39.9 L724 23.4Z" fill="#e0e4ea" stroke="#3d5077" stroke-width="1.5"/>
 <path d="M732 15 L749 31.5 M736 11 L753 27.5 M749 15 L732 31.5 M745 11 L728 27.5" stroke="#5aa6dc" stroke-width="1.2"/>
 <rect x="744.5" y="23.5" width="15" height="18" fill="#eef1f5" stroke="#3b8ed6" stroke-width="1.6"/>
 <path d="M747 28H757.5 M747 32H757.5 M747 36H757.5" stroke="#7d8895" stroke-width="1.1"/>
</svg>
<!-- ================= left header icons ================= -->
<svg class="ic" style="left:225px;top:176px" width="50" height="22">
 <path d="M4 6 L9.5 11.5 L4 17Z M10 6 L15.5 11.5 L10 17Z" fill="#38475a"/>
 <path d="M34 7 L44 17 M44 7 L34 17" stroke="#38475a" stroke-width="2.2"/>
</svg>
<!-- ================= 3D toolbar icons ================= -->
<svg class="ic" style="left:287px;top:172px" width="500" height="36">
 <!-- camera -->
 <path d="M4.5 9.5 H12 L14 6 H23 L25 9.5 H31 V28.5 H4.5Z" fill="#d9e6f4" stroke="#3f5078" stroke-width="1.3" stroke-linejoin="round"/>
 <circle cx="17.3" cy="17.6" r="7" fill="#c9d9ec" stroke="#3f5078" stroke-width="1.2"/><circle cx="17.3" cy="17.6" r="4.8" fill="#1f3b6e"/><circle cx="26.5" cy="12.5" r="0.9" fill="#3f5078"/>
 <!-- printer -->
 <rect x="48.5" y="4.5" width="15" height="7" fill="#fff" stroke="#3f5078" stroke-width="1.3"/>
 <rect x="42.5" y="11.5" width="26" height="13" fill="url(#gGray)" stroke="#3f5078" stroke-width="1.3"/>
 <rect x="48.5" y="20.5" width="15" height="9.5" fill="#e6e9ee" stroke="#3f5078" stroke-width="1.3"/>
 <path d="M51 24H61 M51 26.5H61" stroke="#6a7890"/>
 <rect x="75" y="3" width="1" height="29" fill="#cfd2d6"/>
 <!-- axis point -->
 <path d="M82 12.2 H100.4 V29 M100.4 12.2 L105 6" fill="none" stroke="#4a5a7a" stroke-width="1.2"/>
 <rect x="80" y="10.2" width="4" height="4" fill="#fff" stroke="#4a5a7a"/><rect x="98.4" y="27.5" width="4" height="4" fill="#fff" stroke="#4a5a7a"/>
 <circle cx="100.4" cy="12.2" r="2.2" fill="#e8702a"/>
 <path d="M104.5 3.5V7.5 M106.5 3.5V7.5" stroke="#1f2f58" stroke-width="1"/>
 <path d="M111.5 15.5 L115 19 L118.5 15.5" fill="none" stroke="#4a6070" stroke-width="1.3"/>
 <!-- hex no -->
 <path d="M141.5 4 L152.5 10.3 V23 L141.5 29.4 L130.5 23 V10.3Z" fill="#a9c3c9" stroke="#98b2b8" stroke-width="1"/>
 <circle cx="141.5" cy="16.7" r="7.6" fill="#d7dadf" stroke="#285866" stroke-width="1.7"/><path d="M136 22.2 L147 11.2" stroke="#285866" stroke-width="1.7"/>
 <path d="M159.5 15.5 L163 19 L166.5 15.5" fill="none" stroke="#4a6070" stroke-width="1.3"/>
 <rect x="174" y="3" width="1" height="29" fill="#cfd2d6"/>
 <!-- zoom box -->
 <rect x="182" y="4" width="25" height="25" fill="none" stroke="#2a3d66" stroke-width="1.5" stroke-dasharray="3.5 3"/>
 <circle cx="192" cy="16" r="6" fill="#e4e9f0" stroke="#2f7dc4" stroke-width="1.5"/><path d="M196.5 20.5 L203 27" stroke="#2f7dc4" stroke-width="2.6" stroke-linecap="round"/>
 <!-- pan -->
 <rect x="219.5" y="3.5" width="27" height="27" fill="url(#gGray)" stroke="#4a5c80" stroke-width="1.3"/><rect x="219.5" y="3.5" width="27" height="3" fill="#c9d0da" stroke="#4a5c80" stroke-width="1"/>
 <path d="M233 9.5 V28 M224 18.5 H242" stroke="#1f2f58" stroke-width="1.3"/>
 <path d="M233 9 L230.5 12 H235.5Z M233 28 L230.5 25 H235.5Z M223.5 18.5 L226.5 16 V21Z M242.5 18.5 L239.5 16 V21Z" fill="#1f2f58"/>
 <!-- fit -->
 <path d="M271.2 6.5 L281.6 17 L271.2 27.4 L260.8 17Z" fill="#e9eaec" stroke="#3f5078" stroke-width="1.3"/>
 <path d="M260.8 17 H281.6 L271.2 27.4Z" fill="#a9adb4"/><path d="M271.2 17 H281.6 L271.2 27.4Z" fill="#8d9199"/><path d="M271.2 6.5 L281.6 17 H271.2Z" fill="#d4d6da"/>
 <path d="M271.2 6.5 L281.6 17 L271.2 27.4 L260.8 17Z" fill="none" stroke="#3f5078" stroke-width="1.3"/>
 <path d="M258 4 L262 8 M258 4 H261 M258 4 V7 M284.5 4 L280.5 8 M284.5 4 H281.5 M284.5 4 V7 M258 29.5 L262 25.5 M258 29.5 H261 M258 29.5 V26.5 M284.5 29.5 L280.5 25.5 M284.5 29.5 H281.5 M284.5 29.5 V26.5" stroke="#1f2f58" stroke-width="1.4"/>
 <!-- xyz -->
 <path d="M297.9 27.6 V12" stroke="#3aa05a" stroke-width="1.6"/><path d="M297.9 9 L295 13.5 H300.8Z" fill="#3aa05a"/>
 <path d="M297.9 27.6 H311" stroke="#e02020" stroke-width="1.6"/><path d="M314 27.6 L309.5 24.8 V30.4Z" fill="#e02020"/>
 <circle cx="297.9" cy="27.6" r="1.6" fill="#2a3d9a"/>
 <text x="301" y="12" font-family="Liberation Sans" font-size="10" fill="#1f2f3f">Y</text><text x="301.5" y="25" font-family="Liberation Sans" font-size="10" fill="#1f2f3f">Z</text><text x="314.5" y="31" font-family="Liberation Sans" font-size="10" fill="#1f2f3f">X</text>
 <path d="M324.5 15.5 L328 19 L331.5 15.5" fill="none" stroke="#4a6070" stroke-width="1.3"/>
 <rect x="339" y="3" width="1" height="29" fill="#cfd2d6"/>
 <!-- eye -->
 <path d="M346.5 9 V4 H351.5 M369 4 H374 V9 M346.5 25 V30 H351.5 M369 30 H374 V25" fill="none" stroke="#4a5c80" stroke-width="1.4"/>
 <path d="M348 17 C353 10 367.5 10 372.5 17 C367.5 24 353 24 348 17Z" fill="#f4f5f7" stroke="#4a5c80" stroke-width="1.3"/>
 <circle cx="360.3" cy="17" r="3.8" fill="#c8ccd2" stroke="#4a5c80" stroke-width="1.2"/>
 <!-- orange slash -->
 <rect x="384.5" y="3.8" width="12.5" height="12.5" fill="url(#gOr)" stroke="#c85a24" stroke-width="1.3"/>
 <rect x="399.5" y="18.5" width="12.5" height="12" fill="#dde1e8" stroke="#2a3d66" stroke-width="1.3" stroke-dasharray="2 1.5"/>
 <path d="M384.5 30.5 L411.8 3.5" stroke="#2a3d66" stroke-width="1.3"/>
 <rect x="418.5" y="3" width="1" height="29" fill="#cfd2d6"/>
 <!-- cube bulb light -->
 <path d="M426 10 L430 4.5 H445 V20 L441 24.5 H426Z" fill="#f0f0f0" stroke="#d2d2d2" stroke-width="1.2"/><path d="M426 10 H441 V24.5 M441 10 L445 4.5" fill="none" stroke="#d2d2d2" stroke-width="1"/>
 <circle cx="447" cy="19.5" r="4.8" fill="#f4f4f4" stroke="#cfcfcf" stroke-width="1.2"/><path d="M445 24 V28 H449 V24" fill="#f0f0f0" stroke="#cfcfcf" stroke-width="1.1"/>
 <!-- cube bulb 2 -->
 <path d="M464 10 L468 4.5 H483 V20 L479 24.5 H464Z" fill="#e2e2e2" stroke="#a8a8a8" stroke-width="1.3"/><path d="M464 10 H479 V24.5 M479 10 L483 4.5" fill="none" stroke="#a8a8a8" stroke-width="1.1"/>
 <circle cx="485" cy="19.5" r="4.8" fill="#f0f0f0" stroke="#b0b0b0" stroke-width="1.2"/><path d="M483 24 V28 H487 V24" fill="#eeeeee" stroke="#b0b0b0" stroke-width="1.1"/>
</svg>
<!-- doc tab icon -->
<svg class="ic" style="left:287px;top:976px" width="21" height="21">
 <rect x="0" y="0" width="20" height="20" fill="#1a6fe8"/>
 <path d="M3 4 L9 2 V18 L3 16Z M9 5 L17 3 V6 L9 8Z M9 9.5 L17 7.5 V10.5 L9 12.5Z M9 14 L17 12 V15 L9 17Z" fill="#fff"/>
 <path d="M4.3 6.5 H7 V9 H4.3Z M4.3 11.5 H7 V14 H4.3Z" fill="#1a6fe8"/>
</svg>
</body></html>
